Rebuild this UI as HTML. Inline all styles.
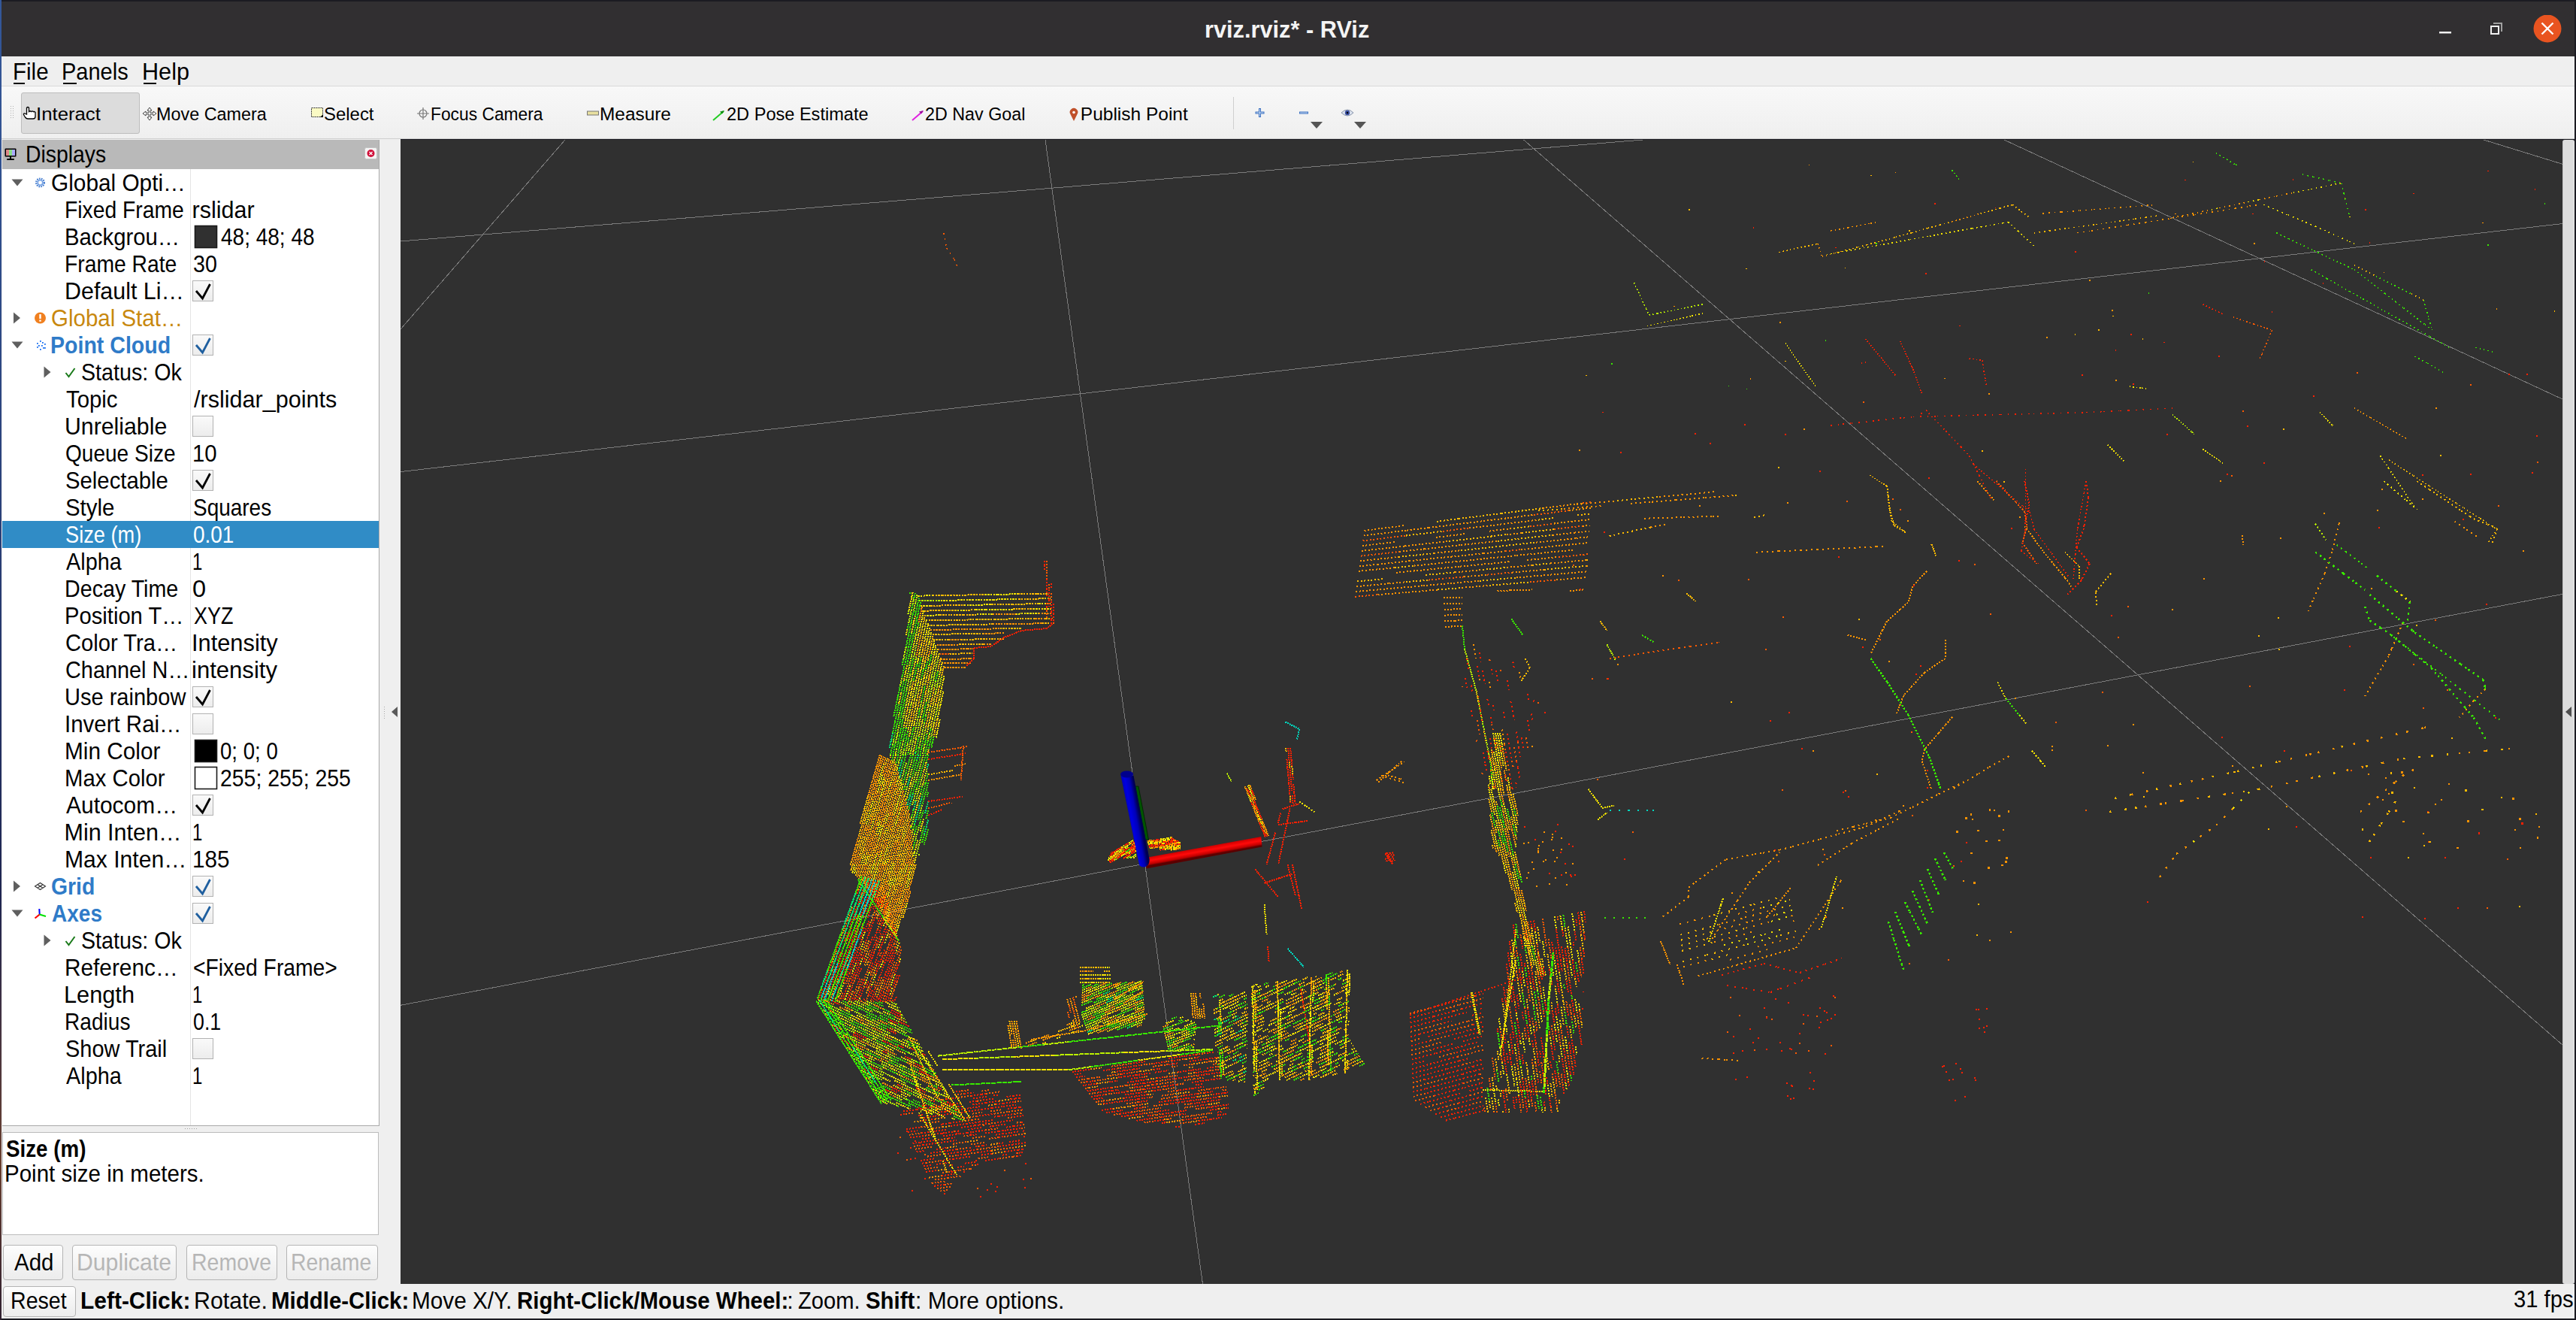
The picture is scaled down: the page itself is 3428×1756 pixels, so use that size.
<!DOCTYPE html><html><head><meta charset="utf-8"><style>html,body{margin:0;padding:0;width:3428px;height:1756px;overflow:hidden;background:#1b1b22}div,svg{position:absolute}span{position:absolute;white-space:nowrap;line-height:1;font-family:"Liberation Sans", sans-serif;transform-origin:0 0}</style></head><body><div style="left:0px;top:0px;width:3428px;height:1756px;background:#1b1b22"></div><div style="left:0px;top:0px;width:2px;height:1756px;background:linear-gradient(#34589a,#2a4078 40%,#1f2550 68%,#6a4030 88%,#302030)"></div><div style="left:2px;top:2px;width:3424px;height:73px;background:#312f31"></div><svg style="position:absolute;left:3230px;top:20px" width="190" height="40"><rect x="16" y="22" width="16" height="2.5" fill="#f0f0f0"/><rect x="85" y="15" width="10" height="10" fill="none" stroke="#f0f0f0" stroke-width="2"/><polyline points="88,11 99,11 99,22" fill="none" stroke="#a0a0a0" stroke-width="2"/><circle cx="160" cy="18" r="18.5" fill="#e95420"/><path d="M152.5 10.5 L167.5 25.5 M167.5 10.5 L152.5 25.5" stroke="#fff" stroke-width="2.4"/></svg><div style="left:2px;top:75px;width:3424px;height:39px;background:#efefef"></div><div style="left:2px;top:114px;width:3424px;height:1px;background:#d9d9d9"></div><div style="left:18px;top:110px;width:15px;height:2px;background:#000"></div><div style="left:84px;top:110px;width:18px;height:2px;background:#000"></div><div style="left:191px;top:110px;width:17px;height:2px;background:#000"></div><div style="left:2px;top:115px;width:3424px;height:69px;background:linear-gradient(#f8f8f8,#efefef)"></div><div style="left:2px;top:184px;width:3424px;height:1px;background:#cfcfcf"></div><svg style="position:absolute;left:14px;top:141px" width="6" height="20"><rect x="0" y="0" width="1" height="1" fill="#b0b0b0"/><rect x="0" y="3" width="1" height="1" fill="#b0b0b0"/><rect x="0" y="6" width="1" height="1" fill="#b0b0b0"/><rect x="0" y="9" width="1" height="1" fill="#b0b0b0"/><rect x="0" y="12" width="1" height="1" fill="#b0b0b0"/><rect x="0" y="15" width="1" height="1" fill="#b0b0b0"/><rect x="3" y="0" width="1" height="1" fill="#b0b0b0"/><rect x="3" y="3" width="1" height="1" fill="#b0b0b0"/><rect x="3" y="6" width="1" height="1" fill="#b0b0b0"/><rect x="3" y="9" width="1" height="1" fill="#b0b0b0"/><rect x="3" y="12" width="1" height="1" fill="#b0b0b0"/><rect x="3" y="15" width="1" height="1" fill="#b0b0b0"/></svg><div style="left:28px;top:123px;width:158px;height:55px;background:#dcdcdc;border:1px solid #bdbdbd;border-radius:3px;box-sizing:border-box"></div><svg style="position:absolute;left:0;top:115px" width="1900" height="69"><path d="M35.5 37 V28.5 Q37 26.5 38.5 28.5 V33.5 Q40 32 41.5 33.5 Q43 32 44.5 33.7 Q46 33 47 34.5 V40 Q47 43 44 43 H37 Q35 43 33.5 41 L31.5 37.5 Q31 35.5 33 36 Z" fill="#fff" stroke="#000" stroke-width="1.3"/><path d="M199 28 l3 4 h-2 v3 h4 v-2 l4 3 -4 3 v-2 h-4 v4 h2 l-3 4 -3 -4 h2 v-4 h-4 v2 l-4 -3 4 -3 v2 h4 v-3 h-2 z" fill="#fff" stroke="#444" stroke-width="1"/><rect x="414.5" y="28.5" width="15" height="12" fill="#fafac4" stroke="#333" stroke-width="1" stroke-dasharray="2 1"/><path d="M430 37 v4 h-4 z" fill="#000"/><circle cx="563" cy="36" r="5" fill="none" stroke="#777" stroke-width="1.2"/><path d="M563 28 v16 M555 36 h16" stroke="#777" stroke-width="1.2"/><rect x="781.5" y="33" width="15" height="5" fill="#e8e0a0" stroke="#777" stroke-width="1"/><path d="M949 45 L963 33" stroke="#22cc22" stroke-width="2"/><path d="M964 32 l-6 1.5 l3 3 z" fill="#118811"/><path d="M1214 45 L1228 33" stroke="#e020e0" stroke-width="2"/><path d="M1229 32 l-6 1.5 l3 3 z" fill="#991199"/><path d="M1429 46 L1424.5 37 A5.3 5.3 0 1 1 1433.5 37 Z" fill="#c0502a"/><circle cx="1429" cy="34.5" r="1.8" fill="#fff"/><rect x="1641" y="14" width="1" height="43" fill="#cfcfcf"/><path d="M1676.5 29 v12 M1670.5 35 h12" stroke="#3a6fc0" stroke-width="3"/><path d="M1676.5 30 v10 M1671.5 35 h10" stroke="#c8dcf4" stroke-width="1"/><path d="M1729 35 h12" stroke="#3a6fc0" stroke-width="3"/><path d="M1730 35 h10" stroke="#c8dcf4" stroke-width="1"/><path d="M1744 47 h16 l-8 9 z" fill="#555"/><path d="M1785 35 q8 -8 16 0 q-8 8 -16 0 z" fill="#dde4f0" stroke="#8894aa" stroke-width="1"/><circle cx="1793" cy="35" r="3.2" fill="#3a4fa0"/><circle cx="1793" cy="35" r="1.2" fill="#000"/><path d="M1802 47 h16 l-8 9 z" fill="#555"/></svg><div style="left:2px;top:185px;width:531px;height:1523px;background:#efefef"></div><div style="left:3px;top:186px;width:502px;height:39px;background:#b9b9b9"></div><svg style="position:absolute;left:5px;top:196px" width="20" height="20"><rect x="1.5" y="1.5" width="15" height="11" rx="1" fill="#000"/><rect x="3" y="3" width="4" height="8" fill="#d88"/><rect x="7" y="3" width="4" height="8" fill="#8d8"/><rect x="11" y="3" width="4" height="8" fill="#aaf"/><rect x="8" y="12" width="2" height="3" fill="#000"/><rect x="4" y="15" width="10" height="2" rx="1" fill="#000"/></svg><svg style="position:absolute;left:485px;top:196px" width="18" height="17"><rect x="0.5" y="0.5" width="16" height="15" rx="2" fill="#f4f4f4" stroke="#c4c4c4"/><circle cx="8.5" cy="8" r="5" fill="#d0103a"/><path d="M6.5 6 l4 4 M10.5 6 l-4 4" stroke="#fff" stroke-width="1.3"/></svg><div style="left:3px;top:225px;width:502px;height:1272px;background:#fff"></div><div style="left:504px;top:186px;width:1px;height:1312px;background:#a9a9a9"></div><div style="left:3px;top:1497px;width:502px;height:1px;background:#a9a9a9"></div><div style="left:253px;top:225px;width:1px;height:1272px;background:#e4e4e4"></div><div style="left:3px;top:693px;width:501px;height:36px;background:#308cc6"></div><svg style="position:absolute;left:0;top:0" width="540" height="1500"><defs><linearGradient id="cbg" x1="0" y1="0" x2="0" y2="1"><stop offset="0" stop-color="#fafafa"/><stop offset="1" stop-color="#ececec"/></linearGradient></defs><path d="M15.5 238.5 h15 l-7.5 9 z" fill="#5f5f5f"/><circle cx="53.5" cy="243" r="5.2" fill="none" stroke="#4a80d0" stroke-width="2.6" stroke-dasharray="1.6 1.2"/><circle cx="53.5" cy="243" r="3.2" fill="none" stroke="#7aa6e6" stroke-width="1.5"/><rect x="259.5" y="300.5" width="29" height="29" fill="#303030" stroke="#1a1a1a" stroke-width="1.6"/><rect x="256.5" y="373.5" width="27" height="27" fill="url(#cbg)" stroke="#b2b2b2" stroke-width="1"/><path d="M261 387 L269.5 397 L279.5 378" fill="none" stroke="#000" stroke-width="2.8"/><path d="M18 415.5 v15 l9 -7.5 z" fill="#5f5f5f"/><circle cx="53.5" cy="423" r="7.5" fill="#f08020"/><rect x="52.3" y="418" width="2.4" height="6" fill="#fff"/><rect x="52.3" y="425.5" width="2.4" height="2.2" fill="#fff"/><path d="M15.5 454.5 h15 l-7.5 9 z" fill="#5f5f5f"/><rect x="53" y="453" width="1.8" height="1.8" fill="#1a6ff0"/><rect x="49" y="456" width="1.8" height="1.8" fill="#1a6ff0"/><rect x="56" y="455" width="1.8" height="1.8" fill="#1a6ff0"/><rect x="59" y="457" width="1.8" height="1.8" fill="#1a6ff0"/><rect x="51" y="459" width="1.8" height="1.8" fill="#1a6ff0"/><rect x="55" y="459" width="1.8" height="1.8" fill="#1a6ff0"/><rect x="49" y="461" width="1.8" height="1.8" fill="#1a6ff0"/><rect x="57" y="462" width="1.8" height="1.8" fill="#1a6ff0"/><rect x="53" y="464" width="1.8" height="1.8" fill="#1a6ff0"/><rect x="59" y="462" width="1.8" height="1.8" fill="#1a6ff0"/><rect x="256.5" y="445.5" width="27" height="27" fill="url(#cbg)" stroke="#b2b2b2" stroke-width="1"/><path d="M261 459 L269.5 469 L279.5 450" fill="none" stroke="#1f5f9f" stroke-width="2.8"/><path d="M58.5 487.5 v15 l9 -7.5 z" fill="#5f5f5f"/><path d="M87.5 496 l4 5 l8 -11" fill="none" stroke="#1a7a1a" stroke-width="2"/><rect x="256.5" y="553.5" width="27" height="27" fill="url(#cbg)" stroke="#b2b2b2" stroke-width="1"/><rect x="256.5" y="625.5" width="27" height="27" fill="url(#cbg)" stroke="#b2b2b2" stroke-width="1"/><path d="M261 639 L269.5 649 L279.5 630" fill="none" stroke="#000" stroke-width="2.8"/><rect x="256.5" y="913.5" width="27" height="27" fill="url(#cbg)" stroke="#b2b2b2" stroke-width="1"/><path d="M261 927 L269.5 937 L279.5 918" fill="none" stroke="#000" stroke-width="2.8"/><rect x="256.5" y="949.5" width="27" height="27" fill="url(#cbg)" stroke="#b2b2b2" stroke-width="1"/><rect x="259.5" y="984.5" width="29" height="29" fill="#000000" stroke="#1a1a1a" stroke-width="1.6"/><rect x="259.5" y="1020.5" width="29" height="29" fill="#ffffff" stroke="#1a1a1a" stroke-width="1.6"/><rect x="256.5" y="1057.5" width="27" height="27" fill="url(#cbg)" stroke="#b2b2b2" stroke-width="1"/><path d="M261 1071 L269.5 1081 L279.5 1062" fill="none" stroke="#000" stroke-width="2.8"/><path d="M18 1171.5 v15 l9 -7.5 z" fill="#5f5f5f"/><path d="M46.5 1179 l7 -4.5 l7 4.5 l-7 4.5 z M50 1176.75 l7 4.5 M50 1181.25 l7 -4.5" fill="none" stroke="#333" stroke-width="1.1"/><rect x="256.5" y="1165.5" width="27" height="27" fill="url(#cbg)" stroke="#b2b2b2" stroke-width="1"/><path d="M261 1179 L269.5 1189 L279.5 1170" fill="none" stroke="#1f5f9f" stroke-width="2.8"/><path d="M15.5 1210.5 h15 l-7.5 9 z" fill="#5f5f5f"/><path d="M52.7 1216.5 L52.3 1209" stroke="#0000ff" stroke-width="2"/><path d="M52.7 1216.5 L46.5 1221.5" stroke="#ff0000" stroke-width="2.2"/><path d="M52.7 1216.5 L61 1219" stroke="#00e000" stroke-width="2.2"/><rect x="256.5" y="1201.5" width="27" height="27" fill="url(#cbg)" stroke="#b2b2b2" stroke-width="1"/><path d="M261 1215 L269.5 1225 L279.5 1206" fill="none" stroke="#1f5f9f" stroke-width="2.8"/><path d="M58.5 1243.5 v15 l9 -7.5 z" fill="#5f5f5f"/><path d="M87.5 1252 l4 5 l8 -11" fill="none" stroke="#1a7a1a" stroke-width="2"/><rect x="256.5" y="1381.5" width="27" height="27" fill="url(#cbg)" stroke="#b2b2b2" stroke-width="1"/></svg><svg style="position:absolute;left:246px;top:1500px" width="20" height="4"><rect x="0" y="1" width="1" height="1" fill="#a0a0a0"/><rect x="3" y="1" width="1" height="1" fill="#a0a0a0"/><rect x="6" y="1" width="1" height="1" fill="#a0a0a0"/><rect x="9" y="1" width="1" height="1" fill="#a0a0a0"/><rect x="12" y="1" width="1" height="1" fill="#a0a0a0"/><rect x="15" y="1" width="1" height="1" fill="#a0a0a0"/></svg><div style="left:3px;top:1506px;width:501px;height:137px;background:#fff;border:1px solid #bcbcbc;box-sizing:border-box"></div><div style="left:4px;top:1656px;width:80px;height:47px;background:linear-gradient(#fdfdfd,#ececec);border:1px solid #b4b4b4;border-radius:4px;box-sizing:border-box"></div><div style="left:96px;top:1656px;width:139px;height:47px;background:linear-gradient(#fdfdfd,#ececec);border:1px solid #b4b4b4;border-radius:4px;box-sizing:border-box"></div><div style="left:248px;top:1656px;width:121px;height:47px;background:linear-gradient(#fdfdfd,#ececec);border:1px solid #b4b4b4;border-radius:4px;box-sizing:border-box"></div><div style="left:381px;top:1656px;width:122px;height:47px;background:linear-gradient(#fdfdfd,#ececec);border:1px solid #b4b4b4;border-radius:4px;box-sizing:border-box"></div><svg style="position:absolute;left:505px;top:935px" width="28" height="25"><rect x="6" y="5" width="1" height="1" fill="#a8a8a8"/><rect x="6" y="8" width="1" height="1" fill="#a8a8a8"/><rect x="6" y="11" width="1" height="1" fill="#a8a8a8"/><rect x="6" y="14" width="1" height="1" fill="#a8a8a8"/><rect x="6" y="17" width="1" height="1" fill="#a8a8a8"/><rect x="6" y="20" width="1" height="1" fill="#a8a8a8"/><path d="M24 5 v14 l-8 -7 z" fill="#5a5a5a"/></svg><svg style="position:absolute;left:533px;top:186px" width="2877" height="1522" viewBox="533 186 2877 1522"><rect x="533" y="186" width="2877" height="1522" fill="#303030"/><g stroke="#7c7c7c" stroke-width="1" fill="none" shape-rendering="crispEdges"><path d="M533 321 L2186 186"/><path d="M533 627.6 L3410 297.5"/><path d="M533 1337.3 L3410 790.4"/><path d="M533 438 L752 186"/><path d="M1391 186 L1600.5 1708"/><path d="M2027.6 186 L3410 1390"/><path d="M2667 186 L3410 531"/><path d="M3305 186 L3410 218.3"/></g><g fill="none" shape-rendering="crispEdges"><path d="M1221.2 792.7L1240.9 792.3M1310.6 791.1L1327.3 790.8M1327.3 790.8L1354.6 790.3M1251.6 798.9L1263.4 798.7M1263.4 798.7L1293.9 798.1M1293.9 798.1L1321.4 797.6M1321.4 797.6L1355.2 797M1224.8 806L1238.3 805.8M1282.9 805L1319.2 804.3M1382.2 803.2L1398 802.9M1273.9 811.8L1284.6 811.6M1298.1 811.4L1312 811.2M1312 811.2L1348.1 810.5M1374.6 810L1399 809.6M1229.7 818.8L1250.5 818.4M1299.9 817.5L1320.9 817.2M1351.6 816.6L1381.9 816.1" stroke="#f4e400" stroke-width="2" stroke-dasharray="2.5 1.2"/><path d="M1240.9 792.3L1253.1 792.1M1253.1 792.1L1264.8 791.9M1264.8 791.9L1287.8 791.5M1287.8 791.5L1310.6 791.1M1354.6 790.3L1366 790.1M1366 790.1L1380.3 789.8M1380.3 789.8L1397 789.5M1355.2 797L1382.5 796.5M1382.5 796.5L1398 796.2M1238.3 805.8L1252.9 805.5M1252.9 805.5L1282.9 805M1319.2 804.3L1347 803.8M1347 803.8L1382.2 803.2M1226 812.7L1255.4 812.2M1255.4 812.2L1273.9 811.8M1284.6 811.6L1298.1 811.4M1348.1 810.5L1374.6 810M1250.5 818.4L1265 818.2M1265 818.2L1282 817.9M1282 817.9L1299.9 817.5M1232 825.5L1253.8 825.1M1253.8 825.1L1282.8 824.6M1282.8 824.6L1299.1 824.3M1299.1 824.3L1310.6 824.1M1310.6 824.1L1323.7 823.8M1323.7 823.8L1359.9 823.2M1359.9 823.2L1377.5 822.9M1391.1 822.6L1401 822.5M1234.5 832L1247.6 831.8M1247.6 831.8L1282.4 831.1M1282.4 831.1L1320.9 830.4M1386.6 829.3L1402 829M1330.6 836.3L1359 835.8M1240.6 844L1266.1 843.5M1266.1 843.5L1277 843.3M1277 843.3L1307.7 842.8M1241.8 851.5L1262.7 851.1M1278.6 850.8L1315.6 850.2M1315.6 850.2L1336 849.8M1276.5 857.5L1309 856.9M1263.5 869.8L1294 869.2" stroke="#ffbc00" stroke-width="2" stroke-dasharray="2.5 1.2"/><path d="M1222.4 799.4L1251.6 798.9" stroke="#bcf000" stroke-width="2" stroke-dasharray="2.5 1.2"/><path d="M1320.9 817.2L1351.6 816.6M1381.9 816.1L1400 815.7M1377.5 822.9L1391.1 822.6M1320.9 830.4L1347.2 830M1347.2 830L1386.6 829.3M1238 838L1271.2 837.4M1271.2 837.4L1291 837M1291 837L1330.6 836.3M1307.7 842.8L1336 842.3M1262.7 851.1L1278.6 850.8M1246.7 858L1276.5 857.5M1309 856.9L1319 856.7M1248 864L1287.1 863.3M1287.1 863.3L1296 863.1M1251.5 877L1290.9 876.3M1290.9 876.3L1295 876.2M1252.7 882.4L1291.8 881.7M1256.4 888.5L1285 888" stroke="#ff9400" stroke-width="2" stroke-dasharray="2.5 1.2"/><path d="M1249.7 870L1263.5 869.8M1291.8 881.7L1292 881.7" stroke="#ff5a00" stroke-width="2" stroke-dasharray="2.5 1.2"/><path d="M1403 828L1393 836M1393 836L1365.5 838.4M1365.5 838.4L1359 839M1359 839L1336 848M1336 848L1319 860M1319 860L1296 862M1296 862L1296 876M1296 876L1285 887M1717.1 994.7L1718.2 1007.2M1718.2 1007.2L1718.6 1011.5M1718.6 1011.5L1719.2 1019M1720.2 1029.9L1720.8 1037.4M1721.3 1042.6L1722.3 1053.9M1722.3 1053.9L1722.7 1058.2M1722.7 1058.2L1723.3 1065.2M1723.3 1065.2L1723.6 1069.2M1714.1 994.7L1715.2 1007M1715.2 1007L1715.7 1013.5M1716.4 1021L1717.4 1032.7M1717.4 1032.7L1718.5 1045.2M1718.5 1045.2L1719.1 1051.6M1719.6 1057.7L1720.6 1069.2M1720.6 1069.2L1720.6 1069.2M1712.4 1009.7L1713.3 1020.5M1713.3 1020.5L1714.2 1030.8M1714.2 1030.8L1715.2 1041.7M1715.2 1041.7L1716.3 1054.9M1716.3 1054.9L1716.7 1059.4M1717.3 1065.9L1717.6 1069.2M1706.5 1076.2L1718.3 1072.5M1718.3 1072.5L1725.4 1070.3M1725.4 1070.3L1729.1 1069.2M1704.2 1081.6L1700.2 1096.4M1697.1 1107.6L1695.5 1113.8M1695.5 1113.8L1692.4 1124.9M1692.4 1124.9L1688.2 1140.2M1688.2 1140.2L1685.6 1149.9M1716.6 1075.4L1713.2 1091.9M1713.2 1091.9L1711.3 1100.9M1711.3 1100.9L1708.7 1113.4M1708.7 1113.4L1706.7 1123.2M1706.7 1123.2L1703.6 1137.9M1703.6 1137.9L1701.1 1149.9M1701.1 1097.1L1710.5 1095.9M1710.5 1095.9L1723.8 1094.1M1723.8 1094.1L1731.7 1093.1M1731.7 1093.1L1741.4 1091.8M1844 1134.4L1850.4 1145.2M1850.4 1145.2L1853.3 1149.9M1186.2 1343.7L1198.8 1349.6M1184.7 1346.6L1199 1353.2M1196.6 1359.2L1208.7 1364.8M1208.7 1364.8L1210.3 1365.6M1181.9 1355.9L1195.2 1362.1M1105.2 1330.7L1117.1 1336.2M1180.1 1369.1L1192.4 1374.9M1211.4 1394.3L1218.6 1397.7M1224.3 1400.3L1232.2 1404M1195.3 1390.4L1202.5 1393.7M1174.6 1384.2L1184.7 1388.9M1137.3 1373.9L1153.5 1381.4M1204.4 1405.2L1212.7 1409.1M1134.9 1376.3L1148 1382.4M1217.5 1414.8L1227.4 1419.4M1110.7 1368.5L1119 1372.4M1175.2 1398.6L1181 1401.3M1246 1431.7L1248.6 1432.8M1223.1 1424.5L1238.4 1431.6M1120.2 1383.6L1133.1 1389.6M1248 1446.7L1253.8 1449.4M1147.3 1403.3L1156.4 1407.5M1155.7 1417.8L1169.6 1424.2M1218.9 1447.3L1232.4 1453.5M1260.6 1466.7L1268.4 1470.4M1150.1 1422.2L1160.2 1427M1193.9 1442.7L1200.6 1445.8M1187 1446.5L1199 1452.1M1186.4 1449.8L1193.3 1453M1178.1 1449.4L1184.4 1452.4M1221.7 1473.3L1226.8 1475.6M1730 1310L1733.8 1332.7M1733.8 1332.7L1735 1340M1735 1340L1740.7 1374.4M1740.7 1374.4L1744.7 1398.1M1744.7 1398.1L1745 1400M1670.1 1156.2L1679.9 1168M1679.9 1168L1691.7 1182.2M1691.7 1182.2L1701.1 1193.5M1713.5 1150L1718 1167.9M1718 1167.9L1721.1 1180.3M1721.1 1180.3L1724.1 1192.3M1682.5 1174.8L1689.1 1172.6M1689.1 1172.6L1702.4 1168.2M1702.4 1168.2L1711.9 1165M1711.9 1165L1719.8 1162.4M1719.8 1150L1721.9 1160.3M1721.9 1160.3L1725 1174.8M1725 1174.8L1726 1179.9M1726 1179.9L1728.4 1190.9M1728.4 1190.9L1730.6 1201.4M1730.6 1201.4L1732.2 1209M1687.1 1258.7L1688.7 1280.4M1852.8 1133.9L1855.9 1139.2M1849.3 1133.9L1855.9 1145.2M1845.9 1133.9L1852.6 1145.5M1852.6 1145.5L1853 1146.3M1843.5 1135.7L1849.6 1146.3M1843.5 1141.7L1846.1 1146.3" stroke="#ff2000" stroke-width="2" stroke-dasharray="2 1"/><path d="M1404.5 829.6L1404.5 830.1M1401.5 802.6L1401.5 815.5M1401.5 815.5L1401.5 827.8M1398.5 775.6L1398.5 781.6M1398.5 799.5L1398.5 813.6M1398.5 813.6L1398.5 823.6M1398.5 823.6L1398.5 831.6M1395.5 784.3L1395.5 797.7M1395.5 797.7L1395.5 807.2M1392.5 769.9L1392.5 783.2M1392.5 783.2L1392.5 793.3M1392.5 801.5L1392.5 806.7M1392.5 806.7L1392.5 811.9M1389.5 746.2L1389.5 752.3M1389.5 752.3L1389.5 759.4M1268.3 1453L1279.5 1451.4M1283.1 1454.9L1295.6 1453.2M1241.7 1464.8L1249.8 1463.7M1259.3 1462.3L1275.2 1460.1M1291.8 1457.8L1306.2 1455.7M1306.2 1455.7L1312 1454.9M1227.1 1470.9L1235.4 1469.7M1252.2 1467.4L1264.4 1465.6M1294.8 1461.4L1312.7 1458.9M1322.3 1457.5L1330 1456.4M1202.2 1478.4L1220.4 1475.9M1220.4 1475.9L1236.8 1473.6M1236.8 1473.6L1255.2 1471M1255.2 1471L1269 1469M1269 1469L1279.7 1467.5M1290.2 1466.1L1300.1 1464.7M1307.8 1463.6L1321.9 1461.6M1339.5 1459.1L1347.9 1457.9M1347.9 1457.9L1357.7 1456.6M1357.7 1456.6L1357.9 1456.5M1198.3 1483L1205.1 1482.1M1231.4 1478.4L1240 1477.2M1274.5 1472.3L1280.3 1471.5M1294.5 1469.5L1312 1467M1312 1467L1328.8 1464.7M1344.9 1462.4L1351.2 1461.5M1351.2 1461.5L1356.2 1460.8M1356.2 1460.8L1358.5 1460.5M1221.8 1483.8L1229.2 1482.7M1247.8 1480.1L1258 1478.7M1258 1478.7L1271.4 1476.8M1271.4 1476.8L1290.5 1474.1M1290.5 1474.1L1305.2 1472M1325 1469.2L1335.3 1467.8M1335.3 1467.8L1350.1 1465.7M1229.2 1486.8L1244.3 1484.6M1244.3 1484.6L1256.2 1482.9M1256.2 1482.9L1270.8 1480.9M1270.8 1480.9L1285.3 1478.9M1285.3 1478.9L1292.8 1477.8M1292.8 1477.8L1305.9 1476M1305.9 1476L1320 1474M1320 1474L1335.1 1471.9M1335.1 1471.9L1351.6 1469.5M1226.9 1491.1L1244 1488.7M1341.3 1475L1351.3 1473.6M1351.3 1473.6L1357.2 1472.8M1357.2 1472.8L1360.1 1472.4M1299.5 1484.9L1306.6 1483.9M1306.6 1483.9L1323.2 1481.6M1359.7 1476.5L1360.7 1476.4M1206.4 1502.1L1225.5 1499.4M1253.9 1495.4L1264.2 1493.9M1264.2 1493.9L1280 1491.7M1322.8 1485.7L1329.2 1484.8M1329.2 1484.8L1341.3 1483.1M1341.3 1483.1L1349.5 1482M1208 1505.9L1221.2 1504M1265.3 1497.8L1273.1 1496.7M1273.1 1496.7L1285.6 1495M1285.6 1495L1303.4 1492.5M1303.4 1492.5L1311.1 1491.4M1311.1 1491.4L1323.1 1489.7M1348.7 1486.1L1361.8 1484.3M1226.2 1507.4L1234.5 1506.2M1234.5 1506.2L1245 1504.7M1245 1504.7L1259.5 1502.7M1279.1 1499.9L1297 1497.4M1297 1497.4L1303.2 1496.5M1303.2 1496.5L1315.4 1494.8M1327.2 1493.2L1342.9 1491M1342.9 1491L1348 1490.3M1211.3 1513.5L1231 1510.7M1247.2 1508.5L1258 1506.9M1258 1506.9L1277 1504.3M1288.5 1502.7L1305.7 1500.2M1316.7 1498.7L1327.7 1497.1M1327.7 1497.1L1339.5 1495.5M1358.9 1492.8L1362.9 1492.2M1227.2 1515.3L1239.2 1513.6M1254.7 1511.4L1262.7 1510.3M1262.7 1510.3L1277.4 1508.2M1277.4 1508.2L1287.2 1506.9M1287.2 1506.9L1294 1505.9M1294 1505.9L1310.7 1503.6M1339 1499.6L1349.4 1498.1M1349.4 1498.1L1361.8 1496.4M1214.5 1521.1L1225.1 1519.6M1225.1 1519.6L1244.5 1516.9M1261.8 1514.5L1270.9 1513.2M1290.5 1510.4L1299.5 1509.2M1310.8 1507.6L1329.1 1505M1329.1 1505L1340.2 1503.5M1340.2 1503.5L1358.8 1500.9M1222.7 1524L1227.9 1523.3M1227.9 1523.3L1239.9 1521.6M1239.9 1521.6L1248.2 1520.4M1248.2 1520.4L1256 1519.3M1256 1519.3L1273.2 1516.9M1324.9 1509.7L1334 1508.4M1334 1508.4L1345.4 1506.8M1345.4 1506.8L1354.8 1505.4M1361 1504.6L1364.5 1504.1M1328.9 1513.1L1336.4 1512.1M1344.3 1511L1350.7 1510.1M1219.6 1532.5L1230.4 1531M1245.7 1528.9L1260.3 1526.8M1362.2 1512.5L1365.6 1512M1238.3 1533.9L1255.8 1531.5M1255.8 1531.5L1263 1530.5M1263 1530.5L1273 1529.1M1298.4 1525.5L1307.9 1524.2M1307.9 1524.2L1313 1523.4M1328.7 1521.2L1337 1520.1M1343.4 1519.2L1357 1517.3M1257.1 1535.3L1274.1 1532.9M1274.1 1532.9L1291.1 1530.6M1291.1 1530.6L1300 1529.3M1329.8 1525.1L1346.8 1522.7M1346.8 1522.7L1365.6 1520.1M1225.1 1543.9L1243.9 1541.2M1274.3 1537L1284 1535.6M1301 1533.2L1319.2 1530.7M1365.5 1524.1L1365.8 1524.1M1226.9 1547.7L1232.1 1546.9M1251.2 1544.2L1267.8 1541.9M1267.8 1541.9L1277.3 1540.6M1277.3 1540.6L1291.8 1538.5M1305.8 1536.6L1313.7 1535.5M1313.7 1535.5L1320.1 1534.6M1337.4 1532.1L1354.8 1529.7M1354.8 1529.7L1360 1529M1360 1529L1363.4 1528.5M1228.7 1551.4L1239.2 1550M1245.7 1549.1L1262.6 1546.7M1333.7 1536.7L1342.3 1535.5M1351.7 1534.2L1361 1532.9M1262.6 1550.7L1268 1550M1283.8 1547.7L1298 1545.8M1310.8 1543.9L1329.9 1541.3M1353.2 1538L1358.5 1537.2M1232.3 1559L1247.8 1556.8M1274.1 1553.1L1282.7 1551.9M1300.3 1549.5L1303.6 1549M1264.7 1558.5L1270.6 1557.7M1253.1 1564.2L1270.1 1561.8M1243.2 1577.7L1256.6 1575.8M1255.7 1588.1L1259.5 1587.5M2694.3 640L2700.6 671.4M2700.6 671.4L2694.3 696.6" stroke="#ff2000" stroke-width="2" stroke-dasharray="2 2"/><path d="M1401.5 827.8L1401.5 830.8M1398.5 789.4L1398.5 799.5M1395.5 776.7L1395.5 784.3M1395.5 832.3L1395.5 832.3M1392.5 746.2L1392.5 760.9M1392.5 760.9L1392.5 769.9M1392.5 811.9L1392.5 822M1279.5 1451.4L1289.5 1450M1270.4 1456.7L1283.1 1454.9M1306.5 1451.6L1318.2 1450M1249.8 1463.7L1259.3 1462.3M1275.2 1460.1L1291.8 1457.8M1312 1454.9L1331.3 1452.2M1300.1 1464.7L1307.8 1463.6M1205.1 1482.1L1216.2 1480.5M1245.5 1476.4L1262.5 1474M1350.1 1465.7L1359 1464.5M1294 1481.7L1306.7 1479.9M1318.2 1478.3L1333.3 1476.2M1232.3 1494.4L1251.9 1491.6M1278 1488L1286.4 1486.8M1286.4 1486.8L1299.5 1484.9M1323.2 1481.6L1342.4 1478.9M1342.4 1478.9L1359.7 1476.5M1225.5 1499.4L1237.9 1497.6M1280 1491.7L1292.8 1489.9M1292.8 1489.9L1304.7 1488.3M1349.5 1482L1361.2 1480.3M1237.3 1501.8L1253.9 1499.4M1340.8 1487.2L1348.7 1486.1M1209.6 1509.7L1226.2 1507.4M1315.4 1494.8L1327.2 1493.2M1231 1510.7L1247.2 1508.5M1352.8 1493.6L1358.9 1492.8M1310.7 1503.6L1327.7 1501.2M1244.5 1516.9L1261.8 1514.5M1282.5 1511.6L1290.5 1510.4M1358.8 1500.9L1364 1500.1M1216.1 1524.9L1222.7 1524M1293.7 1514L1304.8 1512.5M1304.8 1512.5L1311.2 1511.6M1217.8 1528.7L1230.3 1527M1230.3 1527L1240.8 1525.5M1268.1 1521.7L1287 1519M1315.6 1515L1328.9 1513.1M1336.4 1512.1L1344.3 1511M1350.7 1510.1L1362.7 1508.4M1292.2 1522.3L1311.9 1519.6M1273 1529.1L1288.6 1526.9M1233.8 1538.6L1251.9 1536.1M1300 1529.3L1315.5 1527.1M1315.5 1527.1L1329.8 1525.1M1262.7 1538.6L1274.3 1537M1284 1535.6L1301 1533.2M1331.4 1528.9L1351.2 1526.2M1232.1 1546.9L1251.2 1544.2M1301.6 1541.2L1316.5 1539.1M1230.5 1555.2L1249.3 1552.6M1329.9 1541.3L1347.8 1538.7M1347.8 1538.7L1353.2 1538M1292.8 1550.5L1300.3 1549.5M1253.8 1560L1264.7 1558.5M1270.6 1557.7L1277.5 1556.7M1277.5 1556.7L1291.1 1554.8M1291.1 1554.8L1295.3 1554.2M1244.2 1569.5L1260.6 1567.2M1260.6 1567.2L1278.6 1564.6M1239.6 1574.2L1258.2 1571.5M1256.6 1575.8L1267.4 1574.3M1247.4 1581.1L1264.8 1578.7M1251.5 1584.6L1262.1 1583.1M2656.6 640L2672.8 657.6M2672.8 657.6L2682.6 668.1M2682.6 668.1L2693.2 679.7M2693.2 679.7L2694.3 680.9M2694.3 680.9L2697.5 699.7M2697.5 699.7L2691.2 721.8M2691.2 721.8L2705 742.4M2705 742.4L2710.1 750.1" stroke="#ff5a00" stroke-width="2" stroke-dasharray="2 2"/><path d="M1250.7 957L1245.8 979.8M1255.3 919.5L1251.3 938.4M1251.3 938.4L1247.4 957.1M1256.5 898.9L1253 915M1253 915L1251.3 923.3M1251.3 923.3L1249.6 931.2M1249.6 931.2L1247.6 940.8M1243.3 960.8L1241.4 970M1235.7 996.6L1234.1 1004M1245 937.3L1241 956.3M1241 956.3L1238.4 968.6M1236.9 975.8L1235 984.7M1253.9 880.4L1251.7 890.8M1251.7 890.8L1249.8 899.5M1244.7 923.3L1242.5 933.7M1242.5 933.7L1239.9 946.2M1239.9 946.2L1236.7 960.9M1236.7 960.9L1233.5 976.1M1249.7 869L1248 877.4M1235.2 937.4L1233.7 944.5M1247.7 863.4L1245.4 874M1245.4 874L1241.9 890.4M1235.7 919.7L1232.6 934.2M1227.8 956.7L1222.9 979.9M1245.6 857.7L1243.5 867.5M1243.5 867.5L1240.2 883.1M1231.7 923.2L1228.5 938.1M1228.5 938.1L1225.3 953.1M1225.3 953.1L1223.5 961.5M1219 983L1214.5 1004M1243.5 852L1239.5 871.2M1236.7 883.9L1233.2 900.8M1233.2 900.8L1230.8 911.7M1236.1 871.8L1234.3 880M1231.9 891.4L1229.6 902.1M1229.6 902.1L1226.2 918.4M1221.1 942.4L1215.9 966.7M1239.4 840.7L1236.7 853.6M1236.7 853.6L1234.3 864.6M1231.1 879.8L1229 889.7M1226.1 903L1221.5 924.6M1220.2 931.1L1217.1 945.8M1214.3 958.9L1209.6 980.7M1237.3 835L1233.5 852.9M1227.9 879.2L1225.5 890.8M1225.5 890.8L1221.7 908.5M1217.4 928.7L1216.1 934.8M1211.1 958.5L1208 973.2M1235.3 829.4L1230.4 852.4M1222.5 889.4L1220 901M1220 901L1217.9 911M1217.9 911L1212.9 934.6M1210.8 944.6L1205.8 968.1M1233.2 823.7L1228 848.1M1226 857.4L1224.6 863.9M1224.6 863.9L1221.9 876.7M1221.9 876.7L1220.7 882.6M1213.6 916L1209.1 937.1M1206 951.8L1204 961.2M1204 961.2L1202.6 967.7M1228.8 829L1226.5 839.7M1218 879.9L1212.9 903.6M1210.7 914.1L1205.8 937.2M1191.8 1003.2L1191.6 1004M1229.1 812.4L1223.9 836.6M1222.3 844.2L1219.3 858.4M1219.1 843.8L1214.2 866.9M1207 885.2L1202.5 906.4M1199.5 920.8L1196 936.9M1217.8 819.4L1212.9 842.4M1207.4 837.2L1205.7 845.1M1214.6 788L1209.4 812.4M1470.3 1287.3L1477.2 1287.3M1437 1297.3L1454.3 1297.3M1454.3 1297.3L1467.6 1297.3M1467.6 1297.3L1477.5 1297.3M1461.6 1302.3L1477.7 1302.3M1437 1307.3L1452.5 1307.3M1452.5 1307.3L1464 1307.3M1451.5 1309.7L1452.4 1309.3M1439.7 1320.9L1455.9 1314.4M1448 1320.8L1455.9 1317.6M1455.9 1317.6L1465 1314M1479.3 1314.7L1484.4 1312.6M1484.4 1312.6L1490.8 1310M1439.4 1334L1454.4 1327.9M1510.8 1308.4L1515.8 1306.4M1471.8 1327.4L1485.2 1322M1501 1315.6L1515.4 1309.8M1515.4 1309.8L1520.2 1307.8M1445.4 1341.3L1459 1335.8M1480.7 1327L1485.3 1325.1M1502 1318.4L1516.8 1312.4M1482.8 1329.4L1490 1326.5M1513.9 1316.8L1520.7 1314.1M1452.5 1344.9L1464.3 1340.1M1473.1 1336.6L1489.5 1329.9M1476.1 1338.6L1492.4 1332M1505.7 1326.6L1517.5 1321.9M1441.1 1356L1449.2 1352.7M1479.6 1343.6L1493.1 1338.2M1493.1 1338.2L1501.8 1334.7M1501.8 1334.7L1511.8 1330.6M1465.1 1352.7L1477.4 1347.8M1477.4 1347.8L1483.6 1345.3M1502.7 1337.5L1510.7 1334.3M1518.5 1331.2L1522 1329.7M1519.7 1333.9L1522.3 1332.9M1458.4 1361.9L1463.8 1359.7M1463.8 1359.7L1478.4 1353.8M1478.4 1353.8L1486 1350.8M1507.9 1341.9L1513.9 1339.5M1521.6 1336.4L1522.5 1336M1446 1370.2L1462.5 1363.5M1467.6 1361.4L1475.4 1358.3M1487.9 1353.2L1496.1 1349.9M1510.4 1344.1L1522.8 1339.1M1454.9 1369.8L1460 1367.7M1474.6 1361.9L1487.1 1356.8M1487.1 1356.8L1502.3 1350.7M1447.9 1375.8L1452.8 1373.9M1452.8 1373.9L1464.7 1369.1M1488.4 1359.5L1496.9 1356.1M1517.6 1347.7L1523.3 1345.4M1490.1 1362L1501.7 1357.4M1501.7 1357.4L1507.5 1355M1507.5 1355L1517 1351.2M1473.5 1372L1488.8 1365.8M1511.3 1356.7L1521.5 1352.6M1511.4 1359.9L1522.7 1355.3M1522.7 1355.3L1523.4 1355.1" stroke="#f4e400" stroke-width="2" stroke-dasharray="2 0.8"/><path d="M1245.8 979.8L1245.5 981.5M1247.6 940.8L1243.3 960.8M1241.4 970L1239.1 980.5M1253 899.9L1250.2 913.1M1249.8 899.5L1244.7 923.3M1230.6 990L1227.6 1004M1245.2 905.9L1243.3 914.6M1238.2 938.8L1236.4 947.2M1231.8 968.6L1228.3 985.3M1248 877.4L1243.4 898.8M1243.4 898.8L1239.7 916.3M1239.7 916.3L1238.4 922.2M1238.4 922.2L1235.2 937.4M1233.7 944.5L1232.1 951.8M1230.1 961.5L1226.9 976.5M1226.9 976.5L1222.9 995.1M1241.9 890.4L1239.6 901.2M1239.6 901.2L1235.7 919.7M1223.5 961.5L1219 983M1226.3 933.1L1224.1 943.6M1222.1 953L1217.3 975.3M1217.3 975.3L1212.5 998.2M1212.5 998.2L1211.2 1004M1212.3 983.7L1208.8 1000.2M1208 988.6L1204.7 1004M1221.7 908.5L1220.2 915.6M1220.2 915.6L1217.4 928.7M1202.9 996.9L1201.6 1003.2M1201.6 1003.2L1201.4 1004M1212.9 934.6L1210.8 944.6M1202.2 984.8L1198.1 1004M1219.3 873.6L1218 879.9M1212.9 903.6L1210.7 914.1M1205.8 937.2L1201.6 956.8M1193.3 996.1L1191.8 1003.2M1219.3 858.4L1215.6 875.8M1211 897.4L1206.4 918.9M1196.7 964.5L1193.9 977.7M1193.9 977.7L1191.7 987.9M1221.1 834.4L1219.1 843.8M1214.2 866.9L1211.2 881.2M1211.2 881.2L1206.2 904.6M1197.1 947.5L1195.8 953.6M1189.4 983.5L1187.8 991.3M1200.2 901.9L1198.1 911.8M1220.4 791.4L1215.9 812.9M1205.7 860.7L1204.3 867.1M1204.3 867.1L1202.2 877.3M1216.1 796.6L1214.4 804.2M1213 810.8L1208.9 830.3M1209.4 812.4L1208.2 817.9M1439.8 1317.7L1445.6 1315.3M1455.9 1314.4L1464.4 1311M1465 1314L1472.6 1310.9M1452.9 1322.1L1467.1 1316.3M1455.8 1324.1L1462.8 1321.3M1485.8 1315.3L1501.1 1309.1M1465 1326.9L1473.5 1323.5M1487.1 1317.9L1496.4 1314.2M1496.4 1314.2L1510.8 1308.4M1515.8 1306.4L1519 1305.1M1459 1335.8L1474.4 1329.5M1516.8 1312.4L1520.5 1310.9M1445.5 1344.5L1451.7 1342M1451.7 1342L1459.5 1338.8M1490 1326.5L1498.4 1323.1M1439.1 1350.3L1452.5 1344.9M1495.5 1327.5L1507.9 1322.5M1440.1 1353.1L1450.7 1348.9M1450.7 1348.9L1456.9 1346.4M1456.9 1346.4L1466.7 1342.4M1466.7 1342.4L1476.1 1338.6M1492.4 1332L1505.7 1326.6M1462 1347.5L1476.3 1341.8M1498.7 1332.7L1515.2 1326M1491.9 1341.9L1502.7 1337.5M1444 1364.5L1451.2 1361.6M1451.2 1361.6L1465 1356M1491.9 1345.2L1502.8 1340.7M1510.7 1337.5L1519.7 1333.9M1445 1367.3L1453.7 1363.8M1453.7 1363.8L1458.4 1361.9M1502.3 1350.7L1509.8 1347.6M1496.9 1356.1L1506.4 1352.2M1506.4 1352.2L1517.6 1347.7M1488.8 1365.8L1502.6 1360.2M1505.4 1365.6L1510.5 1363.5M1510.5 1363.5L1521.2 1359.2" stroke="#bcf000" stroke-width="2" stroke-dasharray="2 0.8"/><path d="M1247.4 957.1L1242.4 980.4M1255.9 886L1253 899.9M1250.2 913.1L1245 937.3M1251.8 874.7L1247.9 892.8M1243.3 914.6L1241.9 921.2M1241.9 921.2L1238.2 938.8M1236.4 947.2L1231.8 968.6M1240.2 883.1L1235.7 904.2M1235.7 904.2L1231.7 923.2M1241.5 846.4L1238.4 860.6M1226.2 918.4L1224.3 927.2M1224.3 927.2L1221.1 942.4M1234.3 864.6L1231.1 879.8M1221.5 924.6L1220.2 931.1M1217.1 945.8L1214.3 958.9M1233.5 852.9L1230.1 869.1M1230.1 869.1L1227.9 879.2M1216.1 934.8L1211.1 958.5M1230.4 852.4L1227.8 864.6M1227.8 864.6L1225.7 874.1M1228 848.1L1226 857.4M1215.6 906.2L1213.6 916M1209.1 937.1L1206 951.8M1231.1 818L1228.8 829M1226.5 839.7L1224.2 850.7M1223.9 836.6L1222.3 844.2M1437 1287.3L1458.3 1287.3M1458.3 1287.3L1470.3 1287.3M1469.2 1292.3L1477.3 1292.3M1437 1302.3L1445.6 1302.3M1445.6 1302.3L1461.6 1302.3M1464 1307.3L1477.9 1307.3" stroke="#ffbc00" stroke-width="2" stroke-dasharray="2 0.8"/><path d="M1242.4 980.4L1240.8 987.8M1240.8 987.8L1239.4 994.5M1239.1 980.5L1235.7 996.6M1238.4 968.6L1236.9 975.8M1235 984.7L1230.9 1004M1233.5 976.1L1231.9 983.7M1231.9 983.7L1230.6 990M1247.9 892.8L1245.2 905.9M1228.3 985.3L1224.3 1004M1232.1 951.8L1230.1 961.5M1222.9 995.1L1221 1004M1232.6 934.2L1227.8 956.7M1222.9 979.9L1218.4 1001M1239.5 871.2L1236.7 883.9M1230.8 911.7L1226.3 933.1M1224.1 943.6L1222.1 953M1234.3 880L1231.9 891.4M1215.9 966.7L1213.9 976.2M1213.9 976.2L1212.3 983.7M1208.8 1000.2L1208 1004M1229 889.7L1226.1 903M1209.6 980.7L1208 988.6M1208 973.2L1202.9 996.9M1225.7 874.1L1222.5 889.4M1205.8 968.1L1203.7 977.9M1203.7 977.9L1202.2 984.8M1220.7 882.6L1215.6 906.2M1202.6 967.7L1198.3 987.8M1198.3 987.8L1196.8 994.8M1196.8 994.8L1194.9 1004M1201.6 956.8L1198 974M1198 974L1195.3 986.6M1195.3 986.6L1193.3 996.1M1215.6 875.8L1211 897.4M1206.4 918.9L1203.7 931.7M1203.7 931.7L1201.5 942.2M1201.5 942.2L1196.7 964.5M1191.7 987.9L1188.3 1004M1222.5 827.8L1221.1 834.4M1206.2 904.6L1202.5 922M1202.5 922L1200.7 930.5M1200.7 930.5L1197.1 947.5M1195.8 953.6L1193.8 962.9M1193.8 962.9L1189.4 983.5M1187.8 991.3L1185.1 1004M1224.9 801L1220.9 819.8M1220.9 819.8L1218.5 831.4M1218.5 831.4L1215 847.8M1215 847.8L1210.3 869.7M1210.3 869.7L1208.3 879.3M1208.3 879.3L1207 885.2M1202.5 906.4L1199.5 920.8M1196 936.9L1194.4 944.4M1194.4 944.4L1191.2 959.7M1191.2 959.7L1187.9 975.2M1222.9 795.4L1217.8 819.4M1212.9 842.4L1209.2 859.8M1209.2 859.8L1204.8 880.3M1204.8 880.3L1200.2 901.9M1198.1 911.8L1195.3 924.8M1195.3 924.8L1191.2 944.2M1191.2 944.2L1189.4 952.8M1215.9 812.9L1212.4 829M1212.4 829L1209.5 842.6M1209.5 842.6L1205.7 860.7M1202.2 877.3L1200.6 884.7M1217.7 788.7L1216.1 796.6M1214.4 804.2L1213 810.8M1208.9 830.3L1207.4 837.2M1211.3 788L1210.7 790.8M1440 1311.1L1443.2 1309.8M1439.9 1314.4L1451.5 1309.7M1453.5 1312.1L1461.5 1308.9M1472.6 1310.9L1480.1 1307.8M1487.7 1308L1489.8 1307.2M1447 1327.7L1455.8 1324.1M1462.8 1321.3L1479.3 1314.7M1490.8 1310L1499.6 1306.5M1439.3 1337.3L1453.3 1331.6M1459.1 1329.3L1465 1326.9M1455.6 1333.9L1471.8 1327.4M1485.2 1322L1501 1315.6M1439.1 1347.1L1445.5 1344.5M1503.5 1321.1L1513.9 1316.8M1464.3 1340.1L1473.1 1336.6M1489.5 1329.9L1495.5 1327.5M1519.3 1317.9L1521 1317.2M1454.5 1350.6L1462 1347.5M1483.7 1338.7L1498.7 1332.7M1515.2 1326L1521.5 1323.5M1442.1 1358.8L1447.5 1356.6M1457.9 1352.4L1469.9 1347.6M1443 1361.7L1459.1 1355.1M1459.1 1355.1L1465.1 1352.7M1486 1350.8L1494.8 1347.2M1494.8 1347.2L1507.9 1341.9M1513.9 1339.5L1521.6 1336.4M1466.9 1364.9L1474.6 1361.9M1464.7 1369.1L1472.9 1365.8M1472.9 1365.8L1478.8 1363.4M1478.8 1363.4L1488.4 1359.5M1476.3 1367.6L1490.1 1362M1517 1351.2L1523.6 1348.5M1521.5 1352.6L1523.8 1351.7M1486.6 1369.9L1501.9 1363.8M1501.9 1363.8L1511.4 1359.9" stroke="#38e800" stroke-width="2" stroke-dasharray="2 0.8"/><path d="M1218.4 1001L1217.8 1004M1187.9 975.2L1184.7 990.2M1184.7 990.2L1183.7 995.1M1461.5 1308.9L1461.6 1308.9M1468.3 1322.3L1477 1318.8M1474.4 1329.5L1480.7 1327M1485.3 1325.1L1502 1318.4M1472 1333.8L1482.8 1329.4M1511.8 1330.6L1521.8 1326.6M1447 1373L1454.9 1369.8M1499.7 1367.9L1505.4 1365.6" stroke="#00e870" stroke-width="2" stroke-dasharray="2 0.8"/><path d="M1238.4 860.6L1236.1 871.8M1224.2 850.7L1219.3 873.6M1227 806.7L1222.5 827.8M1437 1292.3L1454.7 1292.3M1445.6 1315.3L1453.5 1312.1M1464.4 1311L1470.8 1308.4M1439.6 1324.2L1448 1320.8M1439.6 1327.5L1452.9 1322.1M1467.1 1316.3L1475.7 1312.9M1475.7 1312.9L1487.7 1308M1439.5 1330.7L1447 1327.7M1454.4 1327.9L1468.3 1322.3M1501.1 1309.1L1509.3 1305.8M1473.5 1323.5L1487.1 1317.9M1459.5 1338.8L1472 1333.8M1517.5 1321.9L1521.3 1320.3M1449.2 1352.7L1454.5 1350.6M1476.3 1341.8L1483.7 1338.7M1447.5 1356.6L1457.9 1352.4M1469.9 1347.6L1479.6 1343.6M1483.6 1345.3L1491.9 1341.9M1510.7 1334.3L1518.5 1331.2M1465 1356L1474.4 1352.2M1502.8 1340.7L1510.7 1337.5M1475.4 1358.3L1487.9 1353.2M1460 1367.7L1466.9 1364.9M1509.8 1347.6L1521.1 1343M1521.1 1343L1523 1342.3M1460.4 1374.1L1476.3 1367.6M1502.6 1360.2L1511.3 1356.7M1512.8 1365.8L1518.9 1363.4" stroke="#ff9400" stroke-width="2" stroke-dasharray="2 0.8"/><path d="M1235.3 1102.9L1229.7 1123.9M1230 1110.2L1227.1 1121.1M1235.3 1078.2L1232.2 1089.8M1229.8 1098.6L1224.9 1116.9M1235.3 1053.5L1233.5 1060.1M1228.8 1077.7L1224.4 1094.2M1224.4 1094.2L1222.8 1100.1M1218.2 1117.2L1214.8 1129.8M1235.3 1041.1L1230.5 1058.9M1230.5 1058.9L1227.2 1071.2M1224.6 1081.1L1222 1090.7M1219.8 1098.9L1217 1109.2M1235.3 1028.7L1231.7 1041.9M1231.7 1041.9L1227 1059.5M1217.1 1096.4L1215.4 1103M1227.4 1045.9L1225 1054.9M1212.9 1100L1212.3 1102.1M1235.3 1004L1232.6 1014.1M1215.7 1076.9L1213.1 1086.7M1232 1004L1225.8 1027.1M1225.8 1027.1L1219.9 1049.1M1219 1039.9L1214.7 1056.2M1210.1 1073.4L1209.1 1077.1M1225.4 1004L1219.2 1026.8M1212.9 1050.6L1211 1057.6M1220.2 1011L1214 1034.1M1206.3 1062.7L1205.6 1065.4M1218.7 1004L1216.7 1011.6M1216.7 1011.6L1213.6 1023.2M1215.4 1004L1213.7 1010.3M1204.2 1046L1202.2 1053.5M1212.1 1004L1205.7 1027.7M1205.7 1027.7L1201.8 1042.5M1205.5 1004L1200.1 1024.2M1202.2 1004L1200.2 1011.4M1195.5 1004L1192.3 1016.2M1189.8 1012.9L1189.2 1015.2M1188.9 1004L1186.9 1011.4M1169.9 1332.6L1174.7 1334.8M1161.8 1332.3L1167.1 1334.8M1167.1 1334.8L1175.8 1338.9M1176.2 1342.6L1184.7 1346.6M1156.6 1337L1169 1342.8M1183.7 1349.6L1190.9 1353M1205.4 1359.8L1207.5 1360.7M1151.3 1338.1L1162 1343.1M1175.9 1349.5L1189.5 1355.9M1170.8 1350.7L1181.9 1355.9M1195.2 1362.1L1211.1 1369.5M1211.1 1369.5L1213 1370.4M1121.4 1331.2L1127.9 1334.2M1133.4 1336.8L1143.4 1341.4M1143.4 1341.4L1153.2 1346M1153.2 1346L1165.6 1351.8M1165.6 1351.8L1181.7 1359.3M1202.1 1368.8L1213.7 1374.2M1126.5 1337.1L1141.7 1344.2M1153.3 1349.6L1158.8 1352.1M1158.8 1352.1L1168.5 1356.7M1181.8 1362.9L1191.1 1367.2M1154.6 1353.7L1161 1356.7M1172.7 1362.2L1183.9 1367.4M1197.5 1373.7L1208.9 1379M1169.5 1364.2L1180.1 1369.1M1096.6 1333.7L1107.3 1338.7M1120.6 1344.9L1133 1350.7M1208 1385.7L1220.4 1391.5M1118.4 1347.4L1131.2 1353.4M1209.2 1389.8L1222.3 1395.9M1135.8 1359.1L1146 1363.8M1146 1363.8L1151.5 1366.4M1187.6 1383.2L1198.7 1388.4M1218.6 1397.7L1224.3 1400.3M1101.9 1346.8L1113.1 1352M1131.9 1360.8L1142.7 1365.8M1183 1384.6L1195.3 1390.4M1109.8 1354L1124.6 1360.9M1139.4 1367.8L1153.1 1374.2M1193.6 1393.1L1209.1 1400.3M1101.1 1353.5L1112.9 1359M1126.3 1365.2L1131.8 1367.8M1147.7 1375.2L1161.3 1381.5M1166.6 1384L1181 1390.7M1104.3 1358.5L1117.2 1364.5M1220.4 1412.7L1229.1 1416.7M1227.4 1419.4L1241.1 1425.8M1241.1 1425.8L1245.8 1428M1119 1372.4L1126.2 1375.8M1191.7 1406.3L1206.6 1413.3M1233 1425.6L1246 1431.7M1185.7 1407.1L1196.2 1411.9M1212 1419.3L1223.1 1424.5M1187.6 1411.5L1198.2 1416.4M1148.6 1396.8L1158.3 1401.4M1158.3 1401.4L1172.2 1407.8M1182.2 1412.5L1190.7 1416.4M1197.6 1419.6L1209.4 1425.2M1209.4 1425.2L1216.5 1428.5M1216.5 1428.5L1224.7 1432.3M1255.3 1446.6L1256.7 1447.2M1236.9 1441.5L1248 1446.7M1197.9 1426.9L1202.7 1429.1M1202.7 1429.1L1216.7 1435.7M1129.8 1398.7L1144.5 1405.5M1159.3 1412.4L1175.3 1419.9M1181.3 1422.7L1193.3 1428.2M1232.8 1446.7L1249.1 1454.3M1198.2 1434.1L1209.3 1439.3M1209.3 1439.3L1218.4 1443.5M1255.1 1464.1L1260.6 1466.7M1139.4 1413.7L1152.5 1419.8M1152.5 1419.8L1162.9 1424.7M1245.7 1463.3L1251.9 1466.2M1142.6 1418.7L1150.1 1422.2M1265.8 1476.2L1275.8 1480.8M1204 1450.9L1215.1 1456.1M1228.9 1462.5L1242.4 1468.8M1149 1428.8L1157.2 1432.6M1232.2 1467.6L1239.1 1470.8M1269 1484.7L1281.2 1490.4M1157.3 1436.2L1165.5 1440M1174.9 1444.4L1186.4 1449.8M1215.1 1463.1L1224.4 1467.5M1170.6 1445.9L1178.1 1449.4M1206.7 1462.7L1214 1466.1M1214 1466.1L1228.2 1472.8M1158.6 1443.8L1174 1451M1208.9 1467.3L1221.7 1473.3M1178.1 1456.5L1187.7 1461M1187.7 1461L1202.9 1468M1202.9 1468L1212.1 1472.3M1172.1 1457.2L1181.7 1461.7M1194.1 1471L1196.4 1472.1M1559.3 1355.3L1566 1352.9M1568.6 1358.3L1573.3 1356.6M1548.1 1369L1560.2 1364.6M1565 1362.8L1577.5 1358.3M1581.1 1366.5L1591.1 1362.9M1591.1 1362.9L1591.9 1362.6M1579.5 1370.3L1587.9 1367.3M1582.5 1372.4L1591.5 1369.2M1552.3 1386.6L1566.2 1381.6M1582.6 1375.6L1589.3 1373.2M1553 1389.6L1561.1 1386.6M1574.2 1385L1584.7 1381.2M1554.4 1395.4L1559.8 1393.5M1556.3 1397.9L1563.2 1395.4M1563.2 1395.4L1575.4 1391M1578.5 1393L1584.8 1390.8M1590.2 1388.8L1590.4 1388.7M1577.1 1396.7L1587.4 1393M1587.5 1396.1L1590 1395.2M1622.4 1327.1L1630 1323.6M1635.8 1325.3L1641.6 1322.6M1619.4 1341.7L1626.8 1338.3M1654.9 1329.6L1658.3 1328M1658.3 1328L1659.1 1327.7M1648.3 1337.1L1656.6 1333.2M1634.4 1348L1640.9 1345M1650.6 1340.4L1656.3 1337.8M1656.3 1337.8L1660 1336M1633.3 1352.9L1638.9 1350.3M1635.1 1360.9L1643.3 1357.1M1633.3 1366.1L1641.5 1362.3M1616.4 1378.4L1619.8 1376.8M1653.7 1361L1658.5 1358.8M1659.9 1362.6L1660.5 1362.3M1620.7 1394.1L1626.9 1391.2M1642.3 1384L1645.6 1382.5M1645.6 1382.5L1650.5 1380.2M1653.1 1383.4L1658.9 1380.7M1653.3 1387.7L1659.7 1384.7M1646.4 1395.3L1649.9 1393.7M1649.9 1393.7L1656.3 1390.7M1629.9 1407.5L1636.8 1404.3M1641.3 1402.2L1648.1 1399M1620.1 1416.4L1625.2 1414.1M1624.4 1423.3L1631 1420.2M1647 1412.7L1650.2 1411.2M1653.1 1414.3L1658.9 1411.6M1630.8 1433.5L1635.8 1431.2M1633 1436.9L1641.6 1432.9M1644.6 1431.5L1649 1429.5M1652.6 1436.6L1658.2 1434M1681.8 1309.8L1687.5 1307.1M1669.6 1324.2L1676.7 1320.9M1694.3 1312.8L1697.1 1311.4M1665.4 1330.6L1673.6 1326.8M1692.5 1318L1698.3 1315.3M1679.2 1328.6L1683.7 1326.5M1708.2 1315.1L1715.1 1311.9M1722 1308.7L1730.8 1304.6M1701.3 1322.7L1707.9 1319.7M1715.8 1320.4L1719.1 1318.8M1727.3 1315L1735.2 1311.3M1763.8 1298L1769.6 1295.3M1769.6 1295.3L1773.5 1293.5M1760 1304.2L1767 1300.9M1767 1300.9L1770.7 1299.2M1770.7 1299.2L1779.7 1295M1669.1 1351L1676.5 1347.5M1676.5 1347.5L1684.6 1343.8M1700.7 1336.2L1708.3 1332.7M1761.4 1307.9L1765.4 1306.1M1665.9 1356.9L1672.6 1353.8M1696.6 1342.6L1703.6 1339.3M1754.3 1315.6L1757.1 1314.4M1780.5 1303.4L1785.6 1301.1M1741.1 1326.2L1750.1 1322.1M1761.6 1316.7L1768.7 1313.4M1768.7 1313.4L1776 1310M1796.7 1300.3L1796.9 1300.2M1746.7 1328L1749.9 1326.5M1786.2 1309.6L1792.8 1306.5M1746.2 1332.7L1755.1 1328.6M1696.5 1360.3L1703.7 1356.9M1710.5 1353.7L1715 1351.6M1749.3 1335.6L1757.1 1332M1734.6 1346.9L1742.9 1343M1702.4 1366.4L1710.2 1362.7M1764.1 1337.6L1769.9 1334.9M1710.1 1367.2L1717.5 1363.7M1720.8 1362.2L1729.6 1358.1M1729.6 1358.1L1738.2 1354M1758.2 1344.7L1762.1 1342.9M1688.3 1381.8L1693.7 1379.3M1693.7 1379.3L1702.7 1375M1736 1359.5L1739.1 1358.1M1747.3 1354.2L1751.4 1352.3M1781 1338.5L1786.9 1335.8M1790.3 1334.2L1796.1 1331.5M1678.7 1390.6L1684.7 1387.8M1696.8 1382.2L1704.5 1378.6M1743.1 1360.6L1747.6 1358.5M1747.6 1358.5L1755.1 1355M1673.8 1397.4L1680.2 1394.4M1688 1390.7L1696.5 1386.7M1768.2 1353.3L1775.8 1349.8M1783.1 1346.4L1791.2 1342.6M1676 1400.7L1683.2 1397.4M1710.3 1384.7L1716.2 1382M1667 1409.4L1673.8 1406.2M1685.1 1400.9L1691.4 1398M1730.7 1379.6L1739.4 1375.6M1772.3 1360.2L1778.7 1357.3M1757.6 1371.5L1762.6 1369.1M1781.1 1360.5L1786.3 1358.1M1687.8 1408.4L1696.9 1404.2M1706.7 1399.7L1712.5 1397M1771.6 1369.4L1780.2 1365.4M1727.1 1394.6L1732.9 1391.8M1732.9 1391.8L1737.4 1389.7M1737.4 1389.7L1743.4 1386.9M1743.4 1386.9L1751.8 1383M1770.1 1374.5L1778.1 1370.7M1667.3 1426.8L1671.4 1424.9M1713.8 1405.2L1720.9 1401.9M1723.6 1400.6L1730.3 1397.5M1745.3 1390.5L1753.3 1386.7M1692.2 1419.6L1698.1 1416.9M1703.8 1418.7L1710.2 1415.7M1721.7 1410.3L1728.1 1407.3M1728.1 1407.3L1733.7 1404.7M1739.9 1401.8L1747.4 1398.3M1786.7 1380L1791.5 1377.8M1731.8 1410L1736.2 1408M1739.4 1406.5L1745.9 1403.4M1787.1 1384.2L1795 1380.5M1675 1440.9L1680.5 1438.4M1702.6 1428L1710.5 1424.4M1720.9 1419.5L1727.7 1416.3M1732.2 1414.2L1740.9 1410.2M1740.9 1410.2L1748.2 1406.8M1769.5 1396.8L1774.5 1394.5M1782.5 1390.8L1788.1 1388.2M1674.6 1445.5L1681.7 1442.2M1719.2 1424.7L1726.5 1421.3M1674.9 1449.8L1678 1448.3M1734.9 1421.8L1740.5 1419.2M1772.6 1404.2L1780.5 1400.6M1667.9 1457.5L1675.7 1453.8M1755.2 1416.7L1764.1 1412.6M1721.3 1437L1729.9 1432.9M1740.7 1427.9L1743.5 1426.6M1783.6 1407.9L1791.8 1404.1M1795.2 1402.5L1800.5 1400.1M1776.6 1415.6L1782 1413.1M1801.9 1403.8L1807.7 1401.1M1760 1427.7L1766.7 1424.6M1770.1 1423L1775.2 1420.7M1806.4 1410.5L1811.9 1408M1809 1418.1L1816.1 1414.8M1768.6 1324.6L1768.8 1335.9M1769.9 1380.2L1770.3 1398.8M1770.3 1398.8L1770.8 1417.2M1770.8 1417.2L1771 1427M1624.3 1355.5L1625.3 1375.9M1626.3 1397L1627 1410.5M1946 832.5L1949.1 863.6M1973.7 965.2L1973.9 966.1M1983.2 1012.7L1985.7 1042.1M2011.2 823.2L2026.7 844.9M2026.7 844.9L2026.7 845M2014.9 1076L2016.8 1084.1M2013.6 1097.1L2016.8 1110.7M2005.7 1076.1L2009 1090.4M2023.4 1166L2025.6 1175.4M1996.9 1064.3L1998.7 1072.4M2009.2 1117.6L2013.6 1137.1M2016.5 1149.6L2021.3 1170.1M1996 1073.8L2000.5 1093.4M2000.5 1093.4L2002.5 1101.9M2038.7 1258.9L2042.9 1276.9M1992.5 1072.3L1996.6 1089.9M2000.3 1106L2002.8 1116.9M2002.8 1116.9L2006.5 1132.6M1998.6 1111.7L2000.9 1121.7M1994 1105.4L1996.1 1114.2M1985.4 1081.3L1989.7 1099.8M1993.6 1116.9L1995.9 1126.9" stroke="#38e800" stroke-width="2" stroke-dasharray="2 1"/><path d="M1235.3 1090.6L1230 1110.2M1235.3 1065.8L1231 1081.8M1227 1059.5L1222.3 1077.2M1222.3 1077.2L1217.1 1096.4M1235.3 1016.4L1233.7 1022.4M1218.6 1066.3L1215.7 1076.9M1214.7 1056.2L1210.1 1073.4M1211 1057.6L1207.3 1071.2M1222 1004L1220.2 1011M1210.8 1033.7L1207.4 1046.3M1200.1 1024.2L1196.8 1036.3M1200.2 1011.4L1197.6 1020.9M1197.6 1020.9L1195.1 1030.4M1614.1 1326.5L1620.2 1323.7M1615.5 1356.8L1618.9 1355.2M1621.9 1362.7L1625.8 1360.8M1628.6 1359.5L1636 1356M1644.3 1352.2L1647.5 1350.7M1643.3 1357.1L1650.8 1353.6M1619.8 1376.8L1626 1374M1644.9 1374L1653.5 1370M1640.5 1411.3L1645.6 1409M1648.6 1407.6L1656.8 1403.8M1650.2 1411.2L1655.3 1408.9M1654.5 1426.9L1658.5 1425" stroke="#00e870" stroke-width="2" stroke-dasharray="2 1"/><path d="M1223.1 1136.1L1222.5 1138.2M1224.9 1116.9L1219.5 1137.1M1217 1133.9L1215.7 1139.1M1222.8 1100.1L1218.2 1117.2M1227.2 1071.2L1224.6 1081.1M1233.7 1022.4L1231.4 1030.8M1218.1 1080.5L1212.9 1100M1227.3 1033.6L1222.3 1052.5M1222.3 1052.5L1218.6 1066.3M1213.1 1086.7L1211.5 1092.9M1219.9 1049.1L1213.9 1071.5M1228.7 1004L1224.8 1018.4M1224.8 1018.4L1219 1039.9M1219.2 1026.8L1217.5 1033.1M1217.5 1033.1L1212.9 1050.6M1213.6 1023.2L1210.8 1033.7M1207.4 1046.3L1203.8 1059.6M1213.7 1010.3L1208.4 1030.3M1206 1014.6L1203 1025.6M1203 1025.6L1199 1040.5M1199 1040.5L1198.6 1042.1M1198.8 1004L1196.1 1014.1M1196.1 1014.1L1193.3 1024.6M1192.3 1016.2L1191.5 1019M1632.8 1028.8L1639 1039.7M1186 1333.1L1193.8 1336.7M1190.6 1338.7L1196.5 1341.5M1194.4 1344L1199.3 1346.3M1198.8 1349.6L1202 1351.1M1153.7 1332.1L1163 1336.5M1199 1353.2L1204.8 1355.9M1137.5 1331.6L1151.3 1338.1M1162 1343.1L1175.9 1349.5M1189.5 1355.9L1196.6 1359.2M1129.4 1331.4L1136.7 1334.8M1142.6 1337.5L1148.3 1340.2M1148.3 1340.2L1154.9 1343.2M1154.9 1343.2L1160.8 1346M1191.2 1363.7L1202.1 1368.8M1113.3 1330.9L1126.5 1337.1M1191.1 1367.2L1206.8 1374.5M1133.9 1344.1L1142.2 1347.9M1142.2 1347.9L1154.6 1353.7M1161 1356.7L1172.7 1362.2M1126.5 1344.1L1132.2 1346.8M1089 1330.2L1096.6 1333.7M1107.3 1338.7L1120.6 1344.9M1155.3 1361.1L1169.1 1367.5M1169.1 1367.5L1184.9 1374.9M1200.8 1382.3L1208 1385.7M1220.4 1391.5L1226.8 1394.4M1088.3 1333.4L1093.2 1335.7M1102.7 1340.1L1118.4 1347.4M1173.4 1373.1L1180.2 1376.3M1226.9 1398L1229.5 1399.2M1109.2 1346.6L1125.1 1354.1M1125.1 1354.1L1135.8 1359.1M1151.5 1366.4L1163.4 1371.9M1163.4 1371.9L1177.2 1378.4M1124.5 1357.3L1131.9 1360.8M1142.7 1365.8L1155.8 1371.9M1167.8 1377.5L1183 1384.6M1215.5 1399.8L1229.4 1406.2M1153.1 1374.2L1162.1 1378.4M1162.1 1378.4L1174.6 1384.2M1209.1 1400.3L1219 1405M1224 1407.3L1237.7 1413.6M1112.9 1359L1126.3 1365.2M1131.8 1367.8L1147.7 1375.2M1181 1390.7L1194.5 1397.1M1231.6 1414.3L1240.4 1418.4M1124 1367.7L1129.8 1370.4M1129.8 1370.4L1137.3 1373.9M1161.8 1385.3L1170.4 1389.3M1212.7 1409.1L1220.4 1412.7M1148 1382.4L1155.5 1385.9M1169.9 1392.7L1178.4 1396.6M1126.2 1375.8L1139.5 1382M1181 1401.3L1191.7 1406.3M1228.1 1423.3L1233 1425.6M1136.6 1384.1L1152.8 1391.7M1165.7 1397.7L1172.6 1400.9M1180 1408L1187.6 1411.5M1202.8 1418.6L1216.2 1424.8M1190.7 1416.4L1197.6 1419.6M1136.2 1394.6L1145.5 1398.9M1145.5 1398.9L1154.2 1403M1173.8 1412.1L1183.1 1416.4M1194.2 1421.6L1209.9 1428.9M1253.8 1449.4L1258.7 1451.7M1135.3 1397.7L1147.3 1403.3M1156.4 1407.5L1164 1411.1M1172.8 1415.2L1183.7 1420.3M1215.9 1438.8L1225.5 1443.3M1249.1 1454.3L1255.7 1457.4M1133 1403.7L1145.6 1409.5M1145.6 1409.5L1159.4 1416M1159.4 1416L1174.3 1422.9M1232.4 1450L1237 1452.1M1136.2 1408.7L1148 1414.2M1169.6 1424.2L1185.8 1431.8M1199.2 1438.1L1205.6 1441.1M1268.4 1470.4L1270.3 1471.2M1162.9 1424.7L1175.1 1430.4M1206.8 1445.1L1220.9 1451.7M1268.1 1473.7L1273 1476M1160.2 1427L1175.3 1434M1215.1 1452.5L1225.2 1457.3M1161.1 1430.9L1174.4 1437.1M1215.1 1456.1L1221.2 1458.9M1238.7 1474.2L1244.6 1476.9M1202 1460.5L1206.7 1462.7M1228.2 1472.8L1238.4 1477.5M1174 1451L1179.3 1453.5M1179.3 1453.5L1184.9 1456.1M1193.1 1459.9L1200.5 1463.4M1238.9 1481.3L1241 1482.3M1168.2 1458.9L1178.5 1463.7M1178.5 1463.7L1194.1 1471M1560.2 1364.6L1565 1362.8M1553.5 1370.2L1562.1 1367.1M1584.2 1359L1587 1358M1562.3 1376.6L1569 1374.2M1578.4 1380.3L1587.4 1377M1949.1 863.6L1957.4 893.5M1957.4 893.5L1964.6 919.5M1967.2 932.7L1973.7 965.2M1973.9 966.1L1981.3 1003.2M1981.3 1003.2L1983.2 1012.7M2138.5 857.4L2149.4 877.6" stroke="#bcf000" stroke-width="2" stroke-dasharray="2 1"/><path d="M1219.5 1137.1L1216.5 1148.3M1228.9 1089.5L1224.3 1106.9M1221.4 1117.5L1217 1133.9M1217 1109.2L1214 1120.6M1215.4 1103L1213.1 1111.4M1231.4 1030.8L1227.4 1045.9M1225 1054.9L1223.2 1061.6M1223.2 1061.6L1218.1 1080.5M1232.6 1014.1L1227.3 1033.6M1214 1034.1L1211.9 1042M1211.9 1042L1206.3 1062.7M1208.4 1030.3L1204.2 1046M1202.2 1053.5L1202.1 1053.7M1201.8 1042.5L1200.3 1047.9M1192.2 1004L1189.8 1012.9M1185.6 1004L1184.6 1007.6M1177.9 1332.8L1190.6 1338.7M1182.3 1338.4L1194.4 1344M1150.3 1334L1156.6 1337M1174.6 1345.4L1183.7 1349.6M1136.7 1334.8L1142.6 1337.5M1181.7 1359.3L1186.4 1361.5M1186.4 1361.5L1191.2 1363.7M1191.3 1370.8L1197.5 1373.7M1208.9 1379L1216.2 1382.4M1140.2 1350.5L1155 1357.4M1155 1357.4L1169.5 1364.2M1214.3 1385.1L1224 1389.6M1133 1350.7L1143.1 1355.4M1093.2 1335.7L1102.7 1340.1M1131.2 1353.4L1141.4 1358.2M1147.8 1361.2L1161.4 1367.5M1180.2 1376.3L1187.8 1379.8M1187.8 1379.8L1202.3 1386.6M1202.3 1386.6L1209.2 1389.8M1222.3 1395.9L1226.9 1398M1198.7 1388.4L1211.4 1394.3M1094.7 1343.4L1101.9 1346.8M1113.1 1352L1124.5 1357.3M1155.8 1371.9L1167.8 1377.5M1229.4 1406.2L1235 1408.8M1097.9 1348.5L1103.5 1351.1M1124.6 1360.9L1130.6 1363.7M1130.6 1363.7L1139.4 1367.8M1161.3 1381.5L1166.6 1384M1200.5 1399.8L1206.4 1402.6M1153.5 1381.4L1161.8 1385.3M1170.4 1389.3L1184.6 1395.9M1184.6 1395.9L1189.2 1398.1M1155.5 1385.9L1169.9 1392.7M1199.1 1406.2L1212.4 1412.4M1212.4 1412.4L1217.5 1414.8M1157 1390.1L1167 1394.8M1167 1394.8L1175.2 1398.6M1113.8 1373.6L1122.6 1377.6M1172.6 1400.9L1185.7 1407.1M1117 1378.6L1124 1381.8M1154.9 1396.2L1166.1 1401.4M1166.1 1401.4L1180 1408M1198.2 1416.4L1202.8 1418.6M1216.2 1424.8L1226.8 1429.7M1226.8 1429.7L1242 1436.8M1242 1436.8L1254 1442.4M1245.2 1441.9L1255.3 1446.6M1154.2 1403L1160.5 1405.9M1160.5 1405.9L1165.1 1408.1M1183.1 1416.4L1194.2 1421.6M1209.9 1428.9L1224.4 1435.7M1183.7 1420.3L1197.9 1426.9M1216.7 1435.7L1222 1438.1M1256.2 1454.1L1262.2 1456.8M1144.5 1405.5L1159.3 1412.4M1175.3 1419.9L1181.3 1422.7M1193.3 1428.2L1199.9 1431.4M1255.7 1457.4L1264.9 1461.6M1218.4 1443.5L1232.4 1450M1237 1452.1L1249.4 1457.9M1185.8 1431.8L1199.2 1438.1M1190.5 1437.5L1206.8 1445.1M1235.6 1458.6L1245.7 1463.3M1251.9 1466.2L1268.1 1473.7M1175.3 1434L1185.3 1438.7M1200.6 1445.8L1206.6 1448.6M1252.2 1469.9L1265.8 1476.2M1145.8 1423.8L1161.1 1430.9M1188.6 1443.7L1204 1450.9M1221.2 1458.9L1228.9 1462.5M1257.4 1475.8L1273.5 1483.3M1273.5 1483.3L1278.5 1485.6M1157.2 1432.6L1163.2 1435.4M1199 1452.1L1211.4 1457.9M1226.9 1465.1L1232.2 1467.6M1239.1 1470.8L1253.5 1477.5M1199.1 1455.7L1206.8 1459.2M1244.6 1476.9L1250.8 1479.8M1266.6 1487.2L1270.7 1489.1M1155.4 1438.8L1161.8 1441.8M1184.4 1452.4L1190.8 1455.3M1190.8 1455.3L1202 1460.5M1238.4 1477.5L1251.9 1483.8M1251.9 1483.8L1255.8 1485.7M1226.8 1475.6L1238.9 1481.3M1161.8 1448.9L1167.5 1451.5M1167.5 1451.5L1178.1 1456.5M1224.7 1478.2L1226.1 1478.9M1165 1453.9L1172.1 1457.2M1192.7 1466.8L1208 1474M1208 1474L1211.3 1475.5M1171.4 1463.9L1181.6 1468.7M1219.8 1392.2L1232.5 1411.7M1232.5 1411.7L1242.9 1427.6M1242.9 1427.6L1251.1 1440M1251.1 1440L1265.2 1461.5M1265.2 1461.5L1272.1 1471.9M1272.1 1471.9L1280.6 1485M1235.3 1398.4L1247.3 1417.8M1272.5 1458L1280.5 1470.8M1280.5 1470.8L1291.1 1487.8M1216.8 1432.6L1225.7 1458.9M1233.1 1480.4L1240.5 1502.4M1240.5 1502.4L1245.6 1517.3M1209.6 1379L1219.3 1399.6M1243 1450.6L1247.7 1460.6M1424.9 1361.7L1430.8 1359.5M1426.8 1365.3L1437.3 1361.5M1430.9 1368L1442.3 1363.9M1406.4 1381.2L1412.1 1379.1M1421.8 1375.6L1428.9 1373M1551.7 1361.3L1562.7 1357.3M1570 1354.6L1574.5 1353M1577.5 1358.3L1582.8 1356.3M1549.5 1374.9L1556.3 1372.4M1556.3 1372.4L1570.3 1367.3M1576.2 1365.1L1585.6 1361.7M1585.6 1361.7L1591.2 1359.7M1569.5 1370.8L1581.1 1366.5M1550.9 1380.7L1562.3 1376.6M1569 1374.2L1579.5 1370.3M1551.6 1383.7L1557.9 1381.4M1557.9 1381.4L1563.2 1379.5M1572.4 1376.1L1582.5 1372.4M1566.2 1381.6L1572 1379.5M1572 1379.5L1577.9 1377.3M1577.9 1377.3L1582.6 1375.6M1589.3 1373.2L1591.3 1372.4M1561.1 1386.6L1573.6 1382M1587.4 1377L1591.1 1375.7M1553.7 1392.5L1563.7 1388.9M1563.7 1388.9L1574.2 1385M1588.4 1383L1590.8 1382.2M1575.4 1391L1582.7 1388.3M1566.7 1397.3L1578.5 1393M1587.4 1393L1590.2 1392M1652.5 1321.9L1657.7 1319.5M1626.8 1338.3L1629.6 1337M1652.3 1326.4L1658.6 1323.5M1627 1342.6L1632.1 1340.2M1632.1 1340.2L1640.7 1336.2M1640.7 1336.2L1649 1332.3M1636.7 1342.5L1642.4 1339.8M1642.4 1339.8L1648.3 1337.1M1640.9 1345L1644.6 1343.2M1625.8 1360.8L1628.6 1359.5M1640.2 1354.1L1644.3 1352.2M1616.1 1369.8L1623.2 1366.5M1650.8 1353.6L1657.4 1350.5M1616.3 1374.1L1624.4 1370.3M1624.4 1370.3L1633.3 1366.1M1652.7 1357.1L1660.3 1353.6M1660.3 1353.6L1660.7 1353.4M1623.2 1379.7L1628.8 1377.1M1637.3 1373.1L1643.2 1370.4M1651.2 1366.6L1659.9 1362.6M1638.6 1376.9L1642 1375.3M1653.5 1370L1659.2 1367.3M1632.6 1384.2L1640.1 1380.6M1653.2 1374.5L1660.2 1371.3M1650.5 1380.2L1657.7 1376.9M1624.1 1396.9L1627.4 1395.4M1629.6 1398.8L1636.8 1395.4M1646.4 1390.9L1653.3 1387.7M1618 1413L1620.9 1411.7M1622.3 1419.8L1626.7 1417.8M1631 1420.2L1639.4 1416.3M1655.3 1408.9L1659 1407.1M1655.6 1421.9L1658.6 1420.5M1641.6 1432.9L1644.6 1431.5M1647.9 1438.8L1652.6 1436.6M1665.1 1313.1L1671.9 1309.9M1671.9 1309.9L1674.4 1308.8M1673.9 1313.4L1678.1 1311.5M1672.2 1318.6L1679.1 1315.4M1684.2 1313.1L1689.2 1310.7M1665.3 1326.3L1669.6 1324.2M1705.4 1307.6L1710.9 1305M1710.9 1305L1713.8 1303.7M1673.6 1326.8L1678.2 1324.7M1686.2 1320.9L1692.5 1318M1665.5 1335L1670.9 1332.5M1691.8 1322.8L1698 1319.9M1705.4 1316.4L1708.2 1315.1M1715.1 1311.9L1722 1308.7M1739.5 1300.5L1740 1300.3M1709.6 1323.2L1715.8 1320.4M1665.8 1348.1L1669.8 1346.2M1673.5 1344.5L1679.5 1341.7M1685.4 1339L1693.9 1335M1718.5 1323.5L1725.1 1320.4M1732.3 1317.1L1735.4 1315.6M1693 1339.9L1696.8 1338.1M1711.6 1331.2L1717.5 1328.4M1757 1310L1761.4 1307.9M1727.2 1328.3L1733.2 1325.5M1757.1 1314.4L1761.1 1312.5M1791.8 1298.2L1795.2 1296.6M1677.3 1356L1682.1 1353.8M1701.4 1344.8L1708.8 1341.3M1708.8 1341.3L1713 1339.3M1713 1339.3L1716 1337.9M1787 1304.8L1790.2 1303.4M1666.1 1365.6L1670.6 1363.5M1700 1349.8L1704.6 1347.7M1704.6 1347.7L1710.5 1344.9M1719.9 1340.5L1723.2 1339M1754.1 1324.6L1761.6 1321.1M1714 1347.7L1721 1344.4M1755.1 1328.6L1762.9 1324.9M1795.1 1309.9L1796.7 1309.2M1666.3 1374.4L1673.1 1371.2M1673.1 1371.2L1680.2 1367.9M1688.2 1364.1L1696.5 1360.3M1703.7 1356.9L1710.5 1353.7M1715 1351.6L1718.7 1349.9M1735.4 1342.1L1739.3 1340.3M1739.3 1340.3L1745.5 1337.4M1774.8 1323.8L1779.7 1321.5M1787 1318.1L1790.9 1316.2M1670.1 1377L1673 1375.6M1680.6 1372.1L1687.6 1368.8M1746.5 1341.4L1754.1 1337.8M1790 1321.1L1796.4 1318.1M1710.2 1362.7L1718.8 1358.7M1741.4 1348.2L1744.1 1346.9M1751.1 1343.6L1757.1 1340.8M1757.1 1340.8L1764.1 1337.6M1769.9 1334.9L1772.9 1333.5M1791.8 1324.7L1796.3 1322.5M1702.2 1370.9L1706.2 1369M1780.8 1334.2L1784.3 1332.6M1744.2 1355.7L1747.3 1354.2M1786.9 1335.8L1790.3 1334.2M1687.7 1386.4L1696.8 1382.2M1731.6 1366L1735.7 1364.1M1735.7 1364.1L1743.1 1360.6M1755.1 1355L1764.1 1350.8M1680.2 1394.4L1688 1390.7M1713.9 1378.6L1720.4 1375.6M1720.4 1375.6L1727.8 1372.1M1727.8 1372.1L1734.1 1369.2M1666.9 1405L1672.9 1402.1M1683.2 1397.4L1686 1396.1M1686 1396.1L1692.2 1393.2M1692.2 1393.2L1698.3 1390.3M1691.4 1398L1697.9 1394.9M1702.1 1393L1706 1391.2M1756.9 1367.4L1763.6 1364.3M1763.6 1364.3L1772.3 1360.2M1778.7 1357.3L1787.6 1353.1M1787.6 1353.1L1791.4 1351.3M1667 1413.7L1670.2 1412.2M1688.8 1403.6L1694.2 1401.1M1700.8 1398L1709.1 1394.1M1728 1385.3L1735.7 1381.7M1675.7 1414.1L1681.8 1411.3M1681.8 1411.3L1687.8 1408.4M1793.9 1359L1795.5 1358.2M1698.3 1412.4L1705.7 1408.9M1730.3 1397.5L1738.7 1393.6M1753.3 1386.7L1758 1384.5M1761.4 1383L1770.1 1378.9M1775.2 1376.5L1782.2 1373.3M1729.1 1402.5L1732.5 1400.9M1756.5 1389.7L1761.7 1387.2M1767.4 1384.6L1770.7 1383.1M1747.4 1398.3L1750.4 1396.9M1750.4 1396.9L1757.2 1393.8M1760.8 1392.1L1766.4 1389.5M1766.4 1389.5L1772.5 1386.6M1775.5 1385.2L1779.3 1383.4M1687.8 1430.5L1695.9 1426.8M1695.9 1426.8L1698.8 1425.4M1776.4 1389.2L1784 1385.7M1784 1385.7L1787.1 1384.2M1667.7 1444.3L1675 1440.9M1680.5 1438.4L1688.8 1434.5M1714 1422.7L1720.9 1419.5M1756.5 1402.9L1762.7 1400M1788.1 1388.2L1796.7 1384.2M1796.7 1384.2L1796.9 1384.1M1715.5 1426.4L1719.2 1424.7M1740.5 1414.8L1748.5 1411M1756.4 1407.4L1761.9 1404.8M1761.9 1404.8L1769.9 1401.1M1769.9 1401.1L1775.5 1398.5M1783.5 1394.7L1787.4 1392.9M1798.1 1387.9L1799.1 1387.5M1675.7 1453.8L1676 1453.7M1711.8 1437L1715.6 1435.2M1729.7 1428.6L1733 1427.1M1798.7 1396.5L1803.4 1394.3M1729.9 1432.9L1735.2 1430.5M1735.2 1430.5L1740.7 1427.9M1777.3 1410.9L1783.6 1407.9M1800.5 1400.1L1805.2 1397.8M1757.9 1424.3L1765 1421M1786.3 1411.1L1792.1 1408.4M1747.4 1433.6L1751.1 1431.9M1751.1 1431.9L1756.2 1429.5M1766.7 1424.6L1770.1 1423M1802.6 1412.3L1806.4 1410.5M1670 1317L1670.4 1332.8M1671.8 1395.7L1672.3 1418.3M1672.3 1418.3L1672.9 1444.8M1672.9 1444.8L1673 1450M1703.8 1342.3L1704.4 1366.2M1704.4 1366.2L1704.8 1385M1748 1305L1747.3 1333.4M1746 1390.3L1745.5 1409M1796 1295L1795.4 1322.2M1793.3 1410.2L1793 1423M1623 1330L1624.3 1355.5M1627 1410.5L1628 1430M1682.5 1202.8L1685.5 1241.7M1685.5 1241.7L1685.6 1243.2M1964.6 919.5L1967.2 932.7M1985.7 1042.1L1986.3 1049.9M1996 975.4L1998.5 989.2M1998.5 989.2L1999.6 995.7M2006.5 1034.5L2008.9 1048.6M1993 975.4L1994.7 985M1994.7 985L1997.7 1002M1997.7 1002L2000.7 1019.2M1990 975.4L1992.1 987.7M1993.2 993.7L1994.5 1001.4M1994.5 1001.4L1996.2 1010.8M1986.9 975.4L1988.5 984.5M1988.5 984.5L1991.9 1003.8M1991.9 1003.8L1993.1 1010.7M1993.1 1010.7L1996.5 1029.5M1988.1 999.6L1990.7 1013.9M1992.8 1025.9L1995.3 1040.3M1995.3 1040.3L1996.2 1045.4M1988 1016.3L1989.4 1024.3M1989.4 1024.3L1992.5 1041.9M1992.5 1041.9L1994 1049.9M1986.3 1024.1L1988.9 1038.6M1985 1033.4L1987.1 1045.4M1987.1 1045.4L1987.9 1049.9M1981.6 1031.9L1983.6 1043.3M1980.7 1043.6L1981.8 1049.9M2009.1 1064.2L2013.7 1084.1M2013.7 1084.1L2017.4 1100M2017.4 1100L2019 1106.8M2016.5 1122.6L2017.5 1126.9M2055.7 1292.6L2057.1 1298.4M2001.1 1069.4L2006 1090.6M2046.7 1266.7L2050.3 1282.5M2050.3 1282.5L2053.2 1294.9M1993.6 1050L1996.9 1064.3M2013.6 1137.1L2016.5 1149.6M2037.6 1240.9L2039.2 1247.6M2048.2 1286.8L2050.9 1298.4M2010.1 1135.2L2012 1143.4M2014.3 1153.3L2018.4 1170.8M2018.4 1170.8L2020.8 1181.5M2026.9 1207.7L2030.9 1225.2M2035.6 1245.6L2038.7 1258.9M2042.9 1276.9L2046.3 1292M1996.6 1089.9L2000.3 1106M2012.8 1160L2017.7 1181.3M2033.8 1250.8L2037 1265M2037 1265L2041.3 1283.6M1984.3 1050L1988.1 1066.4M1990.8 1078.1L1994.5 1094.1M2018.6 1198.7L2023.1 1218M2030.2 1248.6L2032.1 1257M1981.2 1050L1986 1070.5M1986 1070.5L1989.2 1084.6M1990.8 1091.4L1994 1105.4M2000.8 1148.3L2003.9 1161.6M1988.9 1109.7L1993 1127.7M1973 1450L2003.5 1450.7M2003.5 1450.7L2019.3 1451.1M2019.3 1451.1L2045 1451.7M2045 1451.7L2056 1452M2017.4 1236.3L2016.1 1246.8M2016.1 1246.8L2013.6 1268M2013.6 1268L2009.5 1302.4M2009.5 1302.4L2006.3 1328.5M2006.3 1328.5L2002 1364.3M2002 1364.3L1999 1389.9M1999 1389.9L1998.8 1391.6M2113.7 1050L2121.2 1060.1M2121.2 1060.1L2132.3 1074.8M2132.3 1074.8L2147.8 1071.7M2126.1 1090.4L2138.5 1081.1" stroke="#f4e400" stroke-width="2" stroke-dasharray="2 1"/><path d="M1216.5 1148.8L1216.2 1149.9M1215.9 1141.4L1213.4 1149.9M1212.5 1143.1L1210.6 1149.9M1210.8 1139.3L1207.8 1149.9M1213.8 1119L1208.8 1136.5M1208.8 1136.5L1205.2 1149.3M1213.2 1111.6L1208.2 1128.9M1212.5 1104.2L1206.9 1123.6M1211.8 1096.7L1206.8 1114.2M1206.8 1114.2L1201.9 1131.5M1211.1 1089.3L1208.2 1099.6M1196.7 1139.5L1193.7 1149.9M1209.1 1076.8L1205.3 1090M1200.1 1108.3L1197.8 1116.3M1197.8 1116.3L1195.8 1123.1M1195.8 1123.1L1194.1 1129.1M1194.1 1129.1L1188.8 1147.6M1203.3 1087.1L1199.6 1100.1M1193.9 1120L1189.8 1134.3M1206.4 1066.7L1200.4 1087.4M1200.4 1087.4L1197.2 1098.6M1191.2 1119.6L1188.2 1130.2M1188.2 1130.2L1184.3 1143.8M1184.3 1143.8L1182.5 1149.9M1205 1061.7L1201.8 1073M1201.8 1073L1196.8 1090.4M1196.8 1090.4L1190.3 1113.1M1180.1 1148.4L1179.7 1149.9M1202.3 1051.7L1197.7 1067.6M1197.7 1067.6L1195.3 1075.9M1195.3 1075.9L1191.2 1090.2M1187 1105L1185.3 1110.9M1188.2 1090.9L1184.8 1102.8M1180.6 1117.3L1177.9 1126.9M1177.9 1126.9L1173.3 1142.8M1196.4 1052.3L1191.4 1070.1M1188.1 1081.6L1183.1 1099M1177.6 1117.9L1175.7 1124.6M1188 1072L1185.2 1081.7M1185.2 1081.7L1179.6 1101.4M1172.6 1125.5L1166.9 1145.7M1166.9 1145.7L1165.7 1149.9M1192.9 1045.2L1190.9 1052M1188.7 1059.9L1182.2 1082.5M1178.5 1095.3L1171.7 1119M1171.7 1119L1169.5 1126.6M1169.5 1126.6L1167.1 1135.1M1195.4 1026.5L1193.3 1033.9M1193.3 1033.9L1191.6 1040M1191.6 1040L1186.1 1059.2M1164.8 1133.3L1160 1149.9M1188.6 1040.6L1184.4 1055.3M1179.7 1071.5L1177.3 1080M1177.3 1080L1172.3 1097.5M1168.6 1110.3L1162.8 1130.4M1179 1064.2L1172.7 1086.3M1172.7 1086.3L1171 1092.1M1164.4 1115.1L1158.2 1136.7M1190.9 1012.9L1184.5 1035.4M1184.5 1035.4L1179.9 1051.2M1179.9 1051.2L1174.3 1070.7M1174.3 1070.7L1169.5 1087.6M1166.8 1097.1L1161 1117.3M1161 1117.3L1155.1 1137.8M1184 1027.1L1181.4 1036.4M1176 1054.9L1172.3 1068M1172.3 1068L1170.4 1074.6M1168.2 1082.3L1165.7 1091M1165.7 1091L1161.3 1106.2M1161.3 1106.2L1154.5 1130.1M1185.9 1010.8L1180 1031.5M1180 1031.5L1178.1 1037.9M1156.6 1112.8L1150 1136M1183.4 1009.7L1176.6 1033.6M1173.6 1044L1167.2 1066.3M1161.4 1086.4L1154.6 1110.2M1145.8 1141L1143.5 1148.7M1143.5 1148.7L1143.2 1149.9M1178 1018.7L1176.3 1024.7M1176.3 1024.7L1174.4 1031.2M1167.9 1054L1165.5 1062.3M1155 1099.1L1150.8 1113.6M1143.4 1139.2L1140.4 1149.9M1140.4 1149.9L1140.4 1149.9M1178.4 1007.5L1175.9 1016.4M1167.5 1045.4L1164.8 1055.1M1164.8 1055.1L1161.8 1065.5M1152.8 1097L1150.8 1103.8M1144 1127.4L1140.6 1139.4M1140.6 1139.4L1137.6 1149.9M1175.9 1006.5L1172 1020.2M1172 1020.2L1167.3 1036.4M1167.3 1036.4L1161.6 1056.2M1159.6 1063.4L1155.3 1078.3M1150.4 1095.2L1145.7 1111.6M1140.2 1130.8L1138.3 1137.6M1138.3 1137.6L1134.8 1149.9M1173.4 1005.4L1171.7 1011.5M1171.7 1011.5L1165.4 1033.1M1165.4 1033.1L1159.4 1054.1M1159.4 1054.1L1155.8 1066.6M1143 1111.5L1139.3 1124.2M1139.3 1124.2L1133.1 1145.9M1170.9 1004.3L1169.1 1010.5M1169.1 1010.5L1166.5 1019.6M1166.5 1019.6L1160.6 1040.3M1160.6 1040.3L1155.3 1058.8M1145.1 1094.1L1144.7 1095.7M1211.5 1185.5L1207.1 1201M1213 1170.8L1210.1 1180.7M1210.1 1180.7L1205.8 1195.8M1205.8 1195.8L1202 1209M1207 1181.9L1202.4 1197.9M1202.4 1197.9L1196.7 1217.9M1197.4 1205.4L1191.5 1226.2M1210.5 1150L1208.6 1156.6M1208.6 1156.6L1204.1 1172.4M1204.1 1172.4L1197.6 1195M1194.9 1204.3L1190.2 1220.7M1190.2 1220.7L1188 1228.5M1199.6 1178.3L1193 1201.4M1190.5 1209.9L1184.7 1230.3M1184.7 1230.3L1184.3 1231.5M1197 1177.4L1195 1184.6M1195 1184.6L1188.6 1206.7M1188.6 1206.7L1186.1 1215.5M1186.1 1215.5L1182.4 1228.4M1202.1 1150L1200.4 1155.9M1190.6 1189.9L1184 1213.2M1180.5 1215.3L1178.6 1222.2M1196.5 1150L1191.9 1165.8M1188.5 1177.8L1184.3 1192.3M1184.3 1192.3L1181.4 1202.4M1181.4 1202.4L1179.8 1208.3M1179.8 1208.3L1176.7 1219.1M1193.7 1150L1191.1 1158.9M1181.3 1193.1L1176.6 1209.6M1176.6 1209.6L1174.7 1216M1183.1 1176.9L1180 1187.7M1177.5 1196.5L1174.7 1206.3M1180.5 1176.1L1174.3 1197.9M1171.7 1207.1L1170.9 1209.8M1181.9 1161.7L1178.1 1174.9M1178.1 1174.9L1176.1 1181.7M1176.1 1181.7L1171.2 1198.9M1171.2 1198.9L1169 1206.7M1173.9 1179.8L1168.4 1198.8M1179.6 1150L1177.5 1157.4M1173 1173L1167.9 1190.8M1176.8 1150L1171.1 1169.7M1171.1 1169.7L1165.4 1189.6M1174 1150L1171.6 1158.2M1171.6 1158.2L1166.6 1175.9M1171.2 1150L1169.1 1157.4M1167.1 1164.3L1164.5 1173.4M1162 1181.9L1159.4 1191.1M1162.6 1170L1158.4 1184.9M1158.4 1184.9L1157.5 1188M1159.2 1172.3L1157.2 1179.2M1159 1163.3L1154 1180.5M1154 1180.5L1153.6 1181.8M1157.2 1159.5L1154 1170.7M1150.9 1171.6L1149.8 1175.6M1154.3 1150L1150.1 1164.6M1150.1 1164.6L1147.9 1172.6M1151.5 1150L1146.8 1166.3M1145.9 1150L1141 1167.1M1143.1 1150L1140.9 1157.8M1131.9 1150L1131.5 1151.4" stroke="#ff9400" stroke-width="2" stroke-dasharray="2 0.7"/><path d="M1215.2 1133.9L1212.5 1143.1M1214.5 1126.5L1210.8 1139.3M1205.2 1149.3L1205 1149.9M1208.2 1128.9L1203.4 1145.7M1203.4 1145.7L1202.2 1149.9M1206.9 1123.6L1201.5 1142.6M1201.5 1142.6L1199.4 1149.9M1201.9 1131.5L1196.6 1149.9M1208.2 1099.6L1203.3 1116.7M1203.3 1116.7L1196.7 1139.5M1210.5 1081.9L1203.7 1105.4M1201.2 1114.1L1196.8 1129.4M1196.8 1129.4L1192.3 1145M1192.3 1145L1190.9 1149.9M1205.3 1090L1200.1 1108.3M1207.7 1071.7L1203.3 1087.1M1199.6 1100.1L1193.9 1120M1189.8 1134.3L1185.3 1149.9M1197.2 1098.6L1191.2 1119.6M1190.3 1113.1L1184.3 1134M1184.3 1134L1181.9 1142.3M1203.6 1056.7L1201.2 1065M1192 1097.4L1187.1 1114.2M1187.1 1114.2L1180.8 1136.3M1180.8 1136.3L1178.1 1145.7M1191.2 1090.2L1187 1105M1185.3 1110.9L1180.7 1127M1177 1139.6L1175 1146.7M1175 1146.7L1174.1 1149.9M1190 1084.5L1188.2 1090.9M1184.8 1102.8L1180.6 1117.3M1173.3 1142.8L1171.3 1149.9M1191.4 1070.1L1188.1 1081.6M1183.1 1099L1177.6 1117.9M1175.7 1124.6L1173.1 1133.9M1198.2 1036.6L1193.3 1053.5M1193.3 1053.5L1188 1072M1177.7 1107.8L1172.6 1125.5M1190.9 1052L1188.7 1059.9M1186.1 1059.2L1180.4 1079.1M1180.4 1079.1L1174.9 1098.2M1169.5 1116.9L1166.5 1127.3M1166.5 1127.3L1164.8 1133.3M1194 1021.5L1188.6 1040.6M1184.4 1055.3L1179.7 1071.5M1162.8 1130.4L1160.9 1137.3M1160.9 1137.3L1157.2 1149.9M1192.7 1016.5L1185.9 1040.1M1182.6 1051.5L1179 1064.2M1166.3 1108.6L1164.4 1115.1M1158.2 1136.7L1154.4 1149.9M1169.5 1087.6L1166.8 1097.1M1188.4 1011.8L1184 1027.1M1181.4 1036.4L1176 1054.9M1170.4 1074.6L1168.2 1082.3M1154.5 1130.1L1149.9 1146.2M1149.9 1146.2L1148.8 1149.9M1178.1 1037.9L1176 1045.2M1169.8 1066.9L1163.4 1089.3M1159.6 1102.3L1156.6 1112.8M1167.2 1066.3L1161.4 1086.4M1154.6 1110.2L1149 1129.8M1149 1129.8L1145.8 1141M1180.9 1008.6L1178 1018.7M1165.5 1062.3L1159 1085M1159 1085L1155 1099.1M1150.8 1113.6L1148 1123.4M1148 1123.4L1143.4 1139.2M1169.5 1038.6L1167.5 1045.4M1150.8 1103.8L1144 1127.4M1161.6 1056.2L1159.6 1063.4M1155.3 1078.3L1150.4 1095.2M1145.7 1111.6L1140.2 1130.8M1155.8 1066.6L1151.5 1081.9M1151.5 1081.9L1149.2 1089.9M1149.2 1089.9L1143 1111.5M1133.1 1145.9L1131.9 1149.9M1155.3 1058.8L1150.5 1075.5M1150.5 1075.5L1145.1 1094.1M1204.9 1208.8L1201.1 1221.9M1218.9 1150L1215.9 1160.4M1215.9 1160.4L1213 1170.8M1202 1209L1195.8 1230.6M1216.1 1150L1210.7 1168.9M1196.7 1217.9L1193.1 1230.4M1193.1 1230.4L1190.3 1240.1M1190.3 1240.1L1190.1 1240.8M1207.1 1171.7L1200.9 1193.4M1200.9 1193.4L1197.4 1205.4M1191.5 1226.2L1188.2 1237.7M1197.6 1195L1194.9 1204.3M1188 1228.5L1186.2 1234.6M1204 1162.7L1199.6 1178.3M1193 1201.4L1190.5 1209.9M1204.9 1150L1200.7 1164.5M1200.7 1164.5L1197 1177.4M1198.6 1162L1196.7 1168.6M1196.7 1168.6L1193.7 1179.4M1193.7 1179.4L1190.6 1189.9M1184 1213.2L1180.5 1225.3M1199.3 1150L1193.6 1169.9M1193.6 1169.9L1190 1182.3M1190 1182.3L1183.8 1204M1183.8 1204L1180.5 1215.3M1191.1 1158.9L1187.8 1170.3M1190.8 1150L1185.1 1169.9M1180 1187.7L1177.5 1196.5M1174.7 1206.3L1172.8 1212.9M1185.3 1159.4L1180.5 1176.1M1185.2 1150L1181.9 1161.7M1182.4 1150L1180.7 1156M1180.7 1156L1173.9 1179.8M1168.4 1198.8L1167.1 1203.5M1177.5 1157.4L1173 1173M1167.9 1190.8L1165.1 1200.4M1166.6 1175.9L1161.3 1194.2M1169.1 1157.4L1167.1 1164.3M1164.5 1173.4L1162 1181.9M1165.6 1150L1159.2 1172.3M1157.2 1179.2L1155.6 1184.9M1159.9 1150L1157.2 1159.5M1154 1170.7L1151.7 1178.7M1157.1 1150L1150.9 1171.6M1146.8 1166.3L1145.6 1170.7M1148.7 1150L1143.3 1168.9M1140.9 1157.8L1138.7 1165.3M1140.3 1150L1138.1 1157.5M1134.7 1150L1132.8 1156.4M1132.8 1156.4L1132.4 1157.9" stroke="#ffbc00" stroke-width="2" stroke-dasharray="2 0.7"/><path d="M1203.7 1105.4L1201.2 1114.1M1188.8 1147.6L1188.1 1149.9M1181.9 1142.3L1180.1 1148.4M1201.2 1065L1197.8 1077.1M1197.8 1077.1L1192 1097.4M1178.1 1145.7L1176.9 1149.9M1180.7 1127L1177 1139.6M1200.9 1046.6L1194.4 1069.4M1194.4 1069.4L1190 1084.5M1199.5 1041.6L1196.4 1052.3M1173.1 1133.9L1168.5 1149.9M1179.6 1101.4L1177.7 1107.8M1196.8 1031.6L1192.9 1045.2M1182.2 1082.5L1178.5 1095.3M1167.1 1135.1L1162.8 1149.9M1174.9 1098.2L1169.5 1116.9M1172.3 1097.5L1168.6 1110.3M1185.9 1040.1L1182.6 1051.5M1171 1092.1L1166.3 1108.6M1155.1 1137.8L1151.6 1149.9M1176 1045.2L1169.8 1066.9M1163.4 1089.3L1159.6 1102.3M1150 1136L1146 1149.9M1176.6 1033.6L1173.6 1044M1174.4 1031.2L1167.9 1054M1175.9 1016.4L1169.5 1038.6M1161.8 1065.5L1154.9 1089.4M1154.9 1089.4L1152.8 1097M1207.1 1201L1204.9 1208.8M1195.8 1230.6L1192 1243.9M1210.7 1168.9L1207 1181.9M1213.3 1150L1207.1 1171.7M1207.7 1150L1204 1162.7M1200.4 1155.9L1198.6 1162M1191.9 1165.8L1188.5 1177.8M1187.8 1170.3L1181.3 1193.1M1185.1 1169.9L1183.1 1176.9M1188 1150L1185.3 1159.4M1174.3 1197.9L1171.7 1207.1M1165.4 1189.6L1163.2 1197.3M1168.4 1150L1162.6 1170M1162.8 1150L1159 1163.3M1138.1 1157.5L1136.4 1163.4M1137.5 1150L1134.1 1161.6" stroke="#f4e400" stroke-width="2" stroke-dasharray="2 0.7"/><path d="M1235.3 1000.9L1259.8 997.3M1259.8 997.3L1278 994.6M1278 994.6L1288.1 993.1M1235.3 1075.4L1252.2 1071.2M1252.2 1071.2L1266.3 1067.6M1193.9 1305.6L1189.6 1317.5M1189.6 1317.5L1186 1327.3M1186 1327.3L1183.9 1333M1177.9 1332L1177.6 1332.8M1199.7 1263.3L1193.6 1280M1193.6 1280L1186.8 1298.8M1186.8 1298.8L1181.3 1313.9M1181.3 1313.9L1177.6 1324.2M1177.6 1324.2L1174.4 1332.7M1198.3 1258.5L1193.8 1270.8M1190.7 1279.3L1186.6 1290.7M1182.4 1302.1L1175.9 1319.8M1177.2 1307.6L1173.6 1317.4M1193.9 1244.1L1190 1255M1190 1255L1186.7 1263.9M1173.5 1300.2L1168.1 1315M1169.1 1303.5L1164.8 1315.4M1183.3 1255.8L1181.1 1261.7M1181.1 1261.7L1179.1 1267.2M1179.1 1267.2L1174.9 1278.7M1165.2 1305.5L1162.7 1312.3M1155.2 1324.3L1152.3 1332.1M1172.8 1266.9L1170.8 1272.4M1160.4 1301.2L1156.1 1313M1162.8 1285.8L1158.1 1298.7M1185.3 1215.2L1180.3 1229M1180.3 1229L1178.1 1235M1167.4 1255.7L1163.3 1266.7M1158.6 1279.6L1154.1 1292.1M1154.1 1292.1L1150 1303.3M1167.5 1246.6L1165.2 1253M1147.2 1302.2L1143 1313.8M1177.2 1211L1170.9 1228.3M1157.9 1264.1L1156 1269.4M1140.4 1312.2L1137.5 1320.3M1139.5 1297.1L1133.8 1312.9M1152.3 1253.3L1150.1 1259.2M1134.1 1294.4L1130.6 1304.2M1130.6 1304.2L1126.9 1314.2M1147.4 1249.1L1141.1 1266.3M1130.9 1294.4L1125.3 1309.9M1121.4 1320.5L1117.6 1331M1116.2 1326.1L1114.4 1331M1162.7 1189.5L1157.1 1204.8M1148.4 1228.8L1144 1241M1121.2 1303.6L1118.9 1309.8M1118.9 1309.8L1112.3 1328.2M1154.1 1204.4L1147.9 1221.3M1121 1295.3L1115.9 1309.5M1109.5 1326.8L1108.1 1330.8M1162.5 1172.5L1156.3 1189.6M1143.6 1224.4L1137.8 1240.4M1157.7 1176.9L1155.7 1182.5M1155.7 1182.5L1151 1195.5M1133.9 1242.2L1129.9 1253.3M1113.9 1297.4L1110.8 1305.8M1104.1 1324.2L1101.8 1330.6M1154.6 1176.7L1148.4 1193.6M1153.7 1170.5L1146.9 1189M1111.7 1285.8L1108 1295.9M1105.7 1302.3L1101 1315.3M1101 1315.3L1097 1326.2M1126.5 1236.3L1120.8 1252.1M1127.7 1224.3L1123.1 1236.8M1118.2 1250.3L1116.1 1256.1M1479.1 1418.6L1494 1416.5M1494 1416.5L1508.1 1414.5M1591.8 1402.7L1605.8 1400.8M1486.9 1421.5L1493.7 1420.6M1518.2 1417.1L1534.6 1414.8M1550.9 1412.5L1558.9 1411.4M1569.4 1409.9L1578.3 1408.7M1533.9 1419L1545.1 1417.4M1545.1 1417.4L1554.5 1416.1M1435.3 1436.9L1448.3 1435M1448.3 1435L1466.4 1432.5M1473.1 1431.5L1491.9 1428.9M1505 1427.1L1517.1 1425.4M1558.8 1419.5L1567.2 1418.3M1575 1417.2L1588.3 1415.4M1604.8 1413L1610.6 1412.2M1438.1 1440.5L1446.1 1439.4M1456.2 1438L1474.3 1435.4M1613.8 1415.8L1624.3 1414.3M1522 1432.7L1527 1432M1616.9 1419.4L1625.3 1418.2M1443.8 1447.8L1449.1 1447M1548.9 1433L1566.9 1430.5M1609.9 1424.4L1624.6 1422.4M1624.6 1422.4L1626.3 1422.1M1479.3 1446.8L1498.8 1444.1M1498.8 1444.1L1509.7 1442.6M1539.2 1438.4L1552.7 1436.5M1581.1 1432.5L1594.2 1430.7M1449.4 1455.1L1460.8 1453.5M1522.7 1444.8L1528.4 1444M1528.4 1444L1534.3 1443.1M1539.2 1442.4L1553.3 1440.5M1553.3 1440.5L1564.7 1438.9M1576.4 1437.2L1589.2 1435.4M1589.2 1435.4L1601.4 1433.7M1471.2 1456L1484.7 1454.2M1500.2 1452L1505.7 1451.2M1505.7 1451.2L1516.8 1449.6M1516.8 1449.6L1522.4 1448.9M1541.1 1446.2L1549.9 1445M1566.2 1442.7L1575.3 1441.4M1547.5 1449.4L1565.5 1446.8M1457.9 1466L1476.4 1463.4M1554.4 1452.4L1566.8 1450.7M1528.6 1460.1L1534.9 1459.2M1546.3 1457.6L1563.5 1455.2M1594.5 1450.8L1610.4 1448.6M1616.7 1447.7L1627.2 1446.2M1627.2 1446.2L1632.1 1445.5M1499.3 1468.3L1514.6 1466.1M1544.8 1461.9L1564.1 1459.2M1564.1 1459.2L1574.9 1457.6M1593.9 1455L1603 1453.7M1626.6 1450.4L1633.1 1449.5M1508.8 1471L1523 1469M1519.8 1473.5L1527.9 1472.3M1534.9 1471.3L1553.4 1468.7M1597.3 1462.6L1606.7 1461.2M1482.1 1482.8L1490.2 1481.7M1505.5 1479.5L1515.5 1478.1M1515.5 1478.1L1533.3 1475.6M1533.3 1475.6L1545.1 1473.9M1576.4 1469.5L1585.3 1468.3M1521.8 1481.3L1539.7 1478.7M1575.8 1473.7L1593.2 1471.2M1533.1 1483.7L1539.1 1482.9M1539.1 1482.9L1547.3 1481.7M1590.8 1475.6L1607.7 1473.2M1532.2 1487.9L1544.8 1486.1M1551.4 1485.2L1570 1482.6M1522.5 1493.3L1536.3 1491.3M1553.7 1488.9L1559.9 1488M1573.4 1486.1L1584.8 1484.5M1584.8 1484.5L1591 1483.6M1591 1483.6L1607.7 1481.3M1607.7 1481.3L1614.6 1480.3M1634 1477.6L1634.2 1477.6M1589.7 1487.9L1605.6 1485.6M1570.5 1494.6L1584.1 1492.7M2109 1248.8L2109.3 1250.5M2102.1 1228.2L2104.2 1243.4M2108.1 1270.7L2108.5 1273.8M2102.5 1259.8L2104.7 1275.5M2101.1 1278.7L2104.1 1300.1M2102.2 1344L2104.3 1358.7M2086.4 1260.1L2089.1 1279M2098.5 1346.2L2100 1356.9M2086 1286L2088.8 1306.2M2072.5 1218.6L2073.4 1224.8M2089 1335.8L2090.7 1348.4M2090.7 1348.4L2092.3 1359.3M2084.4 1332.1L2085.7 1341.7M2090.4 1403.8L2092.5 1418.8M2067.1 1266.3L2068.6 1277M2085.9 1400.2L2087.4 1410.9M2060.6 1249.3L2062.5 1262.8M2062.5 1262.8L2064.5 1277M2077.1 1366.4L2079.5 1383.3M2082.7 1406.6L2084.7 1420.4M2088.3 1446L2088.3 1446.3M2052.8 1222.3L2055.2 1239.2M2055.2 1239.2L2058 1259.4M2073.9 1372.1L2076.5 1390.6M2077.8 1428.6L2080.2 1445.8M2061.3 1340.3L2062.7 1350.3M2064.7 1364.1L2067 1381.1M2073.6 1427.5L2076.2 1446.1M2045.3 1254.8L2047.8 1273M2061.7 1371.9L2062.9 1380M2070.8 1436.6L2072.1 1446.1M2046.3 1290.9L2048.6 1307.1M2048.6 1307.1L2050.9 1323.8M2053.7 1343.8L2055.2 1354.4M2065.6 1428.4L2066.6 1435.1M2069 1452.6L2072 1473.7M2033.1 1226L2036.2 1247.7M2036.2 1247.7L2037.3 1256M2047.1 1325.7L2050.2 1347.2M2036.6 1279.7L2038.8 1295.1M2054.3 1405.4L2056.1 1417.9M2063.7 1472.3L2064.8 1480.1M2043.7 1359L2045.6 1372.1M2051.3 1413.1L2052.3 1419.6M2023.4 1242.8L2024.5 1250.7M2033.2 1312.4L2036 1332.7M2039 1354.1L2040.6 1365.2M2043.7 1387.5L2045.7 1401.7M2049 1425.3L2051.4 1442.4M2043.4 1413.8L2045.4 1427.9M2017.7 1260.1L2019.5 1273M2029 1340.3L2030.3 1349.8M2038.7 1409.4L2039.7 1416.7M2042.7 1437.7L2045.4 1456.8M2014.6 1266.3L2015.6 1273.5M2018.2 1292.5L2019.3 1299.8M2028.7 1366.7L2031 1383.6M2042.6 1466.1L2044.6 1480.1M2038.2 1463.4L2039.7 1474.3M2030 1433.6L2032.5 1451.5M2006.4 1294.2L2007.4 1301.9M2020.4 1394.4L2022.7 1410.8M2032.5 1479.9L2032.5 1480.1M2005.4 1315.8L2006.4 1323.1M2008.6 1338.7L2009.7 1346.4M2009.7 1346.4L2012.3 1364.9M2017.6 1403.2L2020.2 1421.2M2024.9 1455L2027.8 1475.8M2003.6 1331.7L2005 1342.2M2022.8 1468.8L2024.4 1480.1M1997.1 1372.2L1999.5 1389.1M1997.6 1404.5L1998.9 1413.4M2003.7 1447.9L2005.9 1463.6M1985.9 1407.4L1986.8 1414M1986.8 1414L1988.8 1427.8M1988.8 1427.8L1989.9 1436M1990.3 1467.5L1992.1 1480.1M1981.6 1433.8L1984 1451.2M1979.9 1479.7L1980 1480.1M1975 1473.5L1975.9 1480.1" stroke="#ff5a00" stroke-width="2" stroke-dasharray="2 1.5"/><path d="M1235.3 1010.2L1262.7 1005.9M1262.7 1005.9L1276.9 1003.7M1276.9 1003.7L1285 1002.4M1235.3 1066.1L1269.4 1061.3M1269.4 1061.3L1280.9 1059.8M1235.3 1084.7L1253.9 1077M1192.8 1326.1L1190.2 1333.2M1188.2 1330L1187.1 1333.1M1197 1297.2L1193.9 1305.6M1193.8 1297.2L1187.6 1314.2M1184.2 1323.4L1180.8 1332.9M1196.9 1279.8L1193.9 1288.1M1193.9 1288.1L1190.9 1296.2M1184.9 1312.8L1182.9 1318.2M1182.9 1318.2L1177.9 1332M1186.6 1290.7L1182.4 1302.1M1175.9 1319.8L1171.5 1332M1171.5 1332L1171.3 1332.6M1191.8 1267.4L1185.7 1284.3M1185.7 1284.3L1179.7 1300.8M1179.7 1300.8L1177.2 1307.6M1173.6 1317.4L1169.6 1328.4M1169.6 1328.4L1168.1 1332.5M1191.2 1260.3L1188.7 1267.1M1188.7 1267.1L1184.4 1279.2M1184.4 1279.2L1180.9 1288.7M1180.9 1288.7L1178.2 1296.2M1178.2 1296.2L1175.5 1303.4M1167.2 1326.2L1165 1332.4M1186.7 1263.9L1180.9 1280M1164.7 1324.3L1161.8 1332.3M1192.5 1239.3L1186.2 1256.7M1186.2 1256.7L1181.4 1269.7M1181.4 1269.7L1175.4 1286.3M1175.4 1286.3L1169.1 1303.5M1164.8 1315.4L1159.3 1330.5M1191.1 1234.5L1185.4 1250M1185.4 1250L1183.3 1255.8M1161 1317L1157.9 1325.6M1189.6 1229.6L1185 1242.2M1177.3 1263.6L1174.2 1271.9M1174.2 1271.9L1169.8 1284.2M1169.8 1284.2L1165.5 1295.8M1159.7 1311.8L1155.2 1324.3M1168.9 1277.8L1166.8 1283.5M1150.4 1328.6L1149.2 1332M1181 1235.8L1177.2 1246.3M1177.2 1246.3L1170.8 1263.8M1170.8 1263.8L1168.8 1269.3M1168.8 1269.3L1162.8 1285.8M1155.6 1305.5L1152.2 1314.8M1146.4 1330.8L1146 1331.9M1178.1 1235L1174.2 1245.7M1161.4 1280.8L1157 1293M1149.2 1314.2L1144.5 1327.4M1172.4 1241.7L1167.4 1255.7M1163.3 1266.7L1160.7 1273.9M1160.7 1273.9L1158.6 1279.6M1150 1303.3L1147.8 1309.4M1147.8 1309.4L1143.1 1322.2M1143.1 1322.2L1139.7 1331.7M1175.9 1223.6L1169.7 1240.6M1165.2 1253L1162.8 1259.3M1162.8 1259.3L1158.4 1271.6M1158.4 1271.6L1155.7 1279M1137.8 1328.2L1136.5 1331.6M1181 1200.8L1177.2 1211M1168 1236.3L1162.7 1251M1144.2 1301.7L1140.4 1312.2M1137.5 1320.3L1135 1327.1M1135 1327.1L1133.4 1331.5M1172.8 1214.4L1167 1230.3M1161.3 1246L1155.7 1261.3M1150.8 1274.8L1148.6 1280.8M1146.1 1287.8L1140.9 1301.9M1178.1 1191.2L1172.2 1207.2M1150.6 1266.7L1147.7 1274.7M1144.7 1282.8L1139.5 1297.1M1133.8 1312.9L1127.2 1330.8M1173.2 1195.9L1167.4 1211.7M1165.6 1216.7L1161.7 1227.3M1161.7 1227.3L1158.3 1236.7M1158.3 1236.7L1152.3 1253.3M1146.1 1270.2L1143.8 1276.6M1143.8 1276.6L1137.9 1292.9M1137.9 1292.9L1131.2 1311.1M1170.9 1193.4L1168.2 1200.8M1168.2 1200.8L1163.8 1212.9M1157.2 1230.9L1154.2 1239.2M1145.3 1263.6L1139 1280.9M1126.9 1314.2L1120.7 1331.1M1167 1195.2L1161.8 1209.5M1156.2 1224.8L1150.8 1239.8M1141.1 1266.3L1136.5 1279.2M1136.5 1279.2L1130.9 1294.4M1167.7 1184.5L1162.4 1199.2M1159.8 1206.2L1154.1 1222.1M1149.7 1234L1147.2 1241M1147.2 1241L1143.8 1250.1M1140.2 1260.2L1133.5 1278.5M1133.5 1278.5L1127 1296.5M1127 1296.5L1123 1307.4M1168.4 1173.8L1162.7 1189.5M1157.1 1204.8L1152 1219M1144 1241L1140.9 1249.3M1140.9 1249.3L1135 1265.7M1135 1265.7L1128.5 1283.6M1165.5 1173.1L1160 1188.3M1160 1188.3L1154.1 1204.4M1142.8 1235.5L1140.4 1242.1M1136.6 1252.6L1131.4 1266.7M1126.8 1279.5L1121 1295.3M1156.3 1189.6L1151 1204.2M1148.9 1209.8L1145.8 1218.4M1137.8 1240.4L1135.7 1246.1M1135.7 1246.1L1134 1250.9M1134 1250.9L1130.9 1259.4M1130.9 1259.4L1126.3 1272M1126.3 1272L1120.4 1288.3M1120.4 1288.3L1115.4 1301.9M1159.6 1171.8L1157.7 1176.9M1136 1236.5L1133.9 1242.2M1129.9 1253.3L1125.9 1264.4M1125.9 1264.4L1122.1 1274.8M1122.1 1274.8L1116.6 1289.9M1116.6 1289.9L1113.9 1297.4M1156.6 1171.2L1154.6 1176.7M1148.4 1193.6L1145.4 1202M1140.4 1215.6L1137.2 1224.7M1133.6 1234.4L1127.8 1250.4M1121.4 1267.9L1115 1285.5M1115 1285.5L1109.1 1301.8M1109.1 1301.8L1104.5 1314.4M1143.2 1199.1L1140.8 1205.7M1140.8 1205.7L1136.1 1218.7M1136.1 1218.7L1130.2 1235.1M1128.2 1240.4L1123.8 1252.6M1118.9 1266.1L1114.7 1277.6M1108 1295.9L1105.7 1302.3M1097 1326.2L1095.5 1330.4M1150.7 1169.9L1145.5 1184M1145.5 1184L1140.5 1197.9M1138.1 1204.6L1133.3 1217.7M1133.3 1217.7L1126.5 1236.3M1120.8 1252.1L1115.2 1267.3M1115.2 1267.3L1108.5 1285.8M1098.7 1312.6L1095.7 1321M1142.4 1183.9L1139.9 1190.9M1116.1 1256.1L1112.9 1264.9M1107.4 1280.1L1101.5 1296.2M1101.5 1296.2L1096.5 1310.1M1094.2 1316.3L1089.7 1328.7M1426.8 1425.9L1437.2 1424.5M1437.2 1424.5L1451.2 1422.5M1508.1 1414.5L1524.3 1412.2M1555 1407.9L1574.7 1405.1M1574.7 1405.1L1583.3 1403.9M1583.3 1403.9L1591.8 1402.7M1605.8 1400.8L1614.6 1399.5M1429.6 1429.6L1440.1 1428.1M1468.3 1424.1L1486.9 1421.5M1493.7 1420.6L1504.2 1419.1M1504.2 1419.1L1518.2 1417.1M1534.6 1414.8L1550.9 1412.5M1558.9 1411.4L1569.4 1409.9M1589.6 1407.1L1596.9 1406.1M1432.4 1433.2L1443.7 1431.6M1486.1 1425.7L1495.6 1424.3M1495.6 1424.3L1508.5 1422.5M1508.5 1422.5L1517.3 1421.3M1554.5 1416.1L1567.7 1414.2M1583.4 1412L1593.6 1410.6M1593.6 1410.6L1605.5 1408.9M1605.5 1408.9L1619.4 1406.9M1619.4 1406.9L1622.4 1406.5M1491.9 1428.9L1505 1427.1M1535.3 1422.8L1545.8 1421.3M1446.1 1439.4L1456.2 1438M1487.7 1433.5L1496.4 1432.3M1496.4 1432.3L1511.8 1430.2M1511.8 1430.2L1518.5 1429.2M1518.5 1429.2L1531.6 1427.4M1537.2 1426.6L1555.1 1424.1M1440.9 1444.1L1459.5 1441.5M1475.9 1439.2L1487.3 1437.6M1505.2 1435.1L1522 1432.7M1566.8 1426.5L1583.9 1424M1583.9 1424L1590.5 1423.1M1590.5 1423.1L1598.3 1422M1606.4 1420.9L1616.9 1419.4M1500.3 1439.8L1510.7 1438.4M1510.7 1438.4L1527.3 1436M1539 1434.4L1548.9 1433M1590.6 1427.2L1609.9 1424.4M1446.6 1451.4L1456.8 1450M1456.8 1450L1470 1448.1M1470 1448.1L1479.3 1446.8M1509.7 1442.6L1522.4 1440.8M1522.4 1440.8L1530.1 1439.7M1530.1 1439.7L1539.2 1438.4M1552.7 1436.5L1564.4 1434.9M1564.4 1434.9L1581.1 1432.5M1594.2 1430.7L1604.7 1429.2M1604.7 1429.2L1624.3 1426.5M1624.3 1426.5L1627.3 1426M1460.8 1453.5L1480.2 1450.7M1480.2 1450.7L1488.4 1449.6M1509 1446.7L1522.7 1444.8M1534.3 1443.1L1539.2 1442.4M1624.7 1430.4L1628.2 1429.9M1452.3 1458.7L1459.9 1457.6M1459.9 1457.6L1471.2 1456M1484.7 1454.2L1500.2 1452M1522.4 1448.9L1541.1 1446.2M1549.9 1445L1566.2 1442.7M1586.2 1439.9L1596.9 1438.4M1596.9 1438.4L1615.1 1435.8M1615.1 1435.8L1624.3 1434.5M1455.1 1462.4L1467.9 1460.5M1497 1456.5L1514.9 1453.9M1514.9 1453.9L1524.5 1452.6M1532.7 1451.4L1547.5 1449.4M1590.7 1443.3L1601.3 1441.8M1494.8 1460.8L1511.6 1458.5M1511.6 1458.5L1526.8 1456.3M1566.8 1450.7L1578.4 1449.1M1578.4 1449.1L1586.9 1447.9M1586.9 1447.9L1601.6 1445.8M1468.6 1468.5L1485.5 1466.2M1485.5 1466.2L1499.2 1464.2M1499.2 1464.2L1515.2 1462M1515.2 1462L1528.6 1460.1M1610.4 1448.6L1616.7 1447.7M1514.6 1466.1L1528 1464.2M1574.9 1457.6L1593.9 1455M1603 1453.7L1614.3 1452.1M1466.4 1476.9L1481.2 1474.8M1542 1466.3L1550.2 1465.1M1550.2 1465.1L1567 1462.8M1567 1462.8L1577.7 1461.3M1577.7 1461.3L1592.9 1459.1M1614.3 1456.1L1629.9 1453.9M1629.9 1453.9L1634.1 1453.4M1472 1480.2L1486.5 1478.1M1486.5 1478.1L1494 1477.1M1508.8 1475L1519.8 1473.5M1553.4 1468.7L1568.4 1466.6M1568.4 1466.6L1584 1464.4M1584 1464.4L1597.3 1462.6M1606.7 1461.2L1622.1 1459.1M1490.2 1481.7L1505.5 1479.5M1585.3 1468.3L1591.8 1467.4M1591.8 1467.4L1607.2 1465.2M1607.2 1465.2L1625.1 1462.7M1492.2 1485.4L1500.5 1484.2M1500.5 1484.2L1512.3 1482.6M1512.3 1482.6L1521.8 1481.3M1539.7 1478.7L1556.7 1476.3M1593.2 1471.2L1607.7 1469.2M1526.8 1484.6L1533.1 1483.7M1547.3 1481.7L1560.1 1479.9M1560.1 1479.9L1579.1 1477.2M1607.7 1473.2L1613.1 1472.5M1613.1 1472.5L1627.5 1470.4M1627.5 1470.4L1635 1469.4M1512.4 1490.7L1518.6 1489.8M1518.6 1489.8L1532.2 1487.9M1544.8 1486.1L1551.4 1485.2M1570 1482.6L1577.8 1481.5M1609.7 1477L1621.4 1475.3M1630.7 1474L1634.6 1473.5M1536.3 1491.3L1548.7 1489.6M1620.1 1479.6L1626.6 1478.6M1545.9 1494L1551.8 1493.2M1574.1 1490.1L1589.7 1487.9M1619.9 1483.6L1633.8 1481.7M1595.2 1491.1L1610.8 1488.9M1610.8 1488.9L1625.9 1486.8M1564.2 1499.5L1570.6 1498.6M1590.2 1495.9L1595.2 1495.2M1595.2 1495.2L1603.3 1494M2107.9 1212L2110 1227.2M2107.9 1240.5L2109 1248.8M2100 1213.5L2102.1 1228.2M2107.1 1263.8L2108.1 1270.7M2097.3 1222.7L2098.8 1233.4M2104.7 1275.5L2107.4 1294.6M2095.5 1238.6L2097.3 1251.1M2106.8 1319L2107 1320.4M2093.4 1252.6L2094.5 1260.5M2099.2 1293.7L2100.9 1305.8M2105.8 1340.6L2106.2 1343.7M2092.8 1276.8L2094.7 1290.7M2094.7 1290.7L2096.2 1301.4M2100.9 1363.6L2103.9 1384.9M2103.9 1384.9L2104.7 1390.3M2079.1 1236.6L2080.5 1246.9M2082.4 1260.6L2083.3 1266.8M2083.3 1266.8L2086 1286M2088.8 1306.2L2091.3 1323.7M2092.2 1330.4L2095.1 1350.6M2078.2 1259.4L2080.4 1274.6M2084.6 1304.6L2086.8 1320.6M2070.9 1235.9L2073.2 1252.6M2073.2 1252.6L2075.5 1268.9M2075.5 1268.9L2076.7 1277.4M2076.7 1277.4L2078.7 1291.7M2085.7 1341.7L2087.1 1351.3M2091.6 1383.4L2093.9 1399.4M2093.9 1399.4L2096.6 1419M2070.3 1260.4L2072.2 1273.8M2072.2 1273.8L2073.3 1282M2073.3 1282L2074.9 1293M2085 1365L2087.1 1380.1M2088 1386.5L2090.4 1403.8M2092.5 1418.8L2094.1 1429.9M2065.2 1252.8L2067.1 1266.3M2072.4 1304.2L2074.9 1321.7M2087.4 1410.9L2090 1429.7M2072.8 1335.6L2074.5 1347.8M2081.1 1394.7L2082.7 1406.6M2087.3 1439.1L2088.3 1446M2062.2 1289.4L2063.9 1301.2M2063.9 1301.2L2065.3 1311M2069.5 1341.1L2071 1351.8M2078.9 1407.9L2080.4 1418.5M2080.4 1418.5L2083.4 1439.9M2065.9 1344.5L2068.5 1362.5M2069.7 1370.9L2070.6 1377.4M2080.2 1445.8L2081.5 1455.3M2053.8 1286.5L2055.3 1297.9M2067 1381.1L2069.2 1396.6M2041 1224.5L2043.1 1239.4M2047.8 1273L2049.9 1287.5M2049.9 1287.5L2052 1303.1M2056.2 1332.7L2058 1345.2M2064.4 1390.9L2067.3 1411.9M2069 1423.8L2070.8 1436.6M2037.1 1225.3L2038.3 1234M2063.3 1412.2L2064.6 1421M2030.2 1233.6L2032.5 1250.1M2038.8 1295.1L2040.2 1304.8M2040.2 1304.8L2042.2 1319.4M2050.8 1380.1L2052.3 1390.8M2052.3 1390.8L2054.3 1405.4M2058.2 1433.2L2059.6 1443.2M2062 1459.9L2063.7 1472.3M2034.1 1290.7L2036.5 1307.2M2049.2 1397.8L2050.4 1406.4M2052.3 1419.6L2055.1 1440.1M2055.1 1440.1L2057.5 1457.2M2024.5 1250.7L2026.1 1262M2028.7 1280.8L2029.6 1286.9M2031.6 1301.4L2033.2 1312.4M2041.6 1372.5L2043.7 1387.5M2045.7 1401.7L2048 1418.3M2054.7 1465.6L2055.7 1472.9M2023 1269.1L2024.1 1276.4M2024.1 1276.4L2026.3 1292.1M2033.2 1341.2L2034.1 1347.8M2034.1 1347.8L2036.2 1363.1M2039.2 1384.3L2040.7 1394.5M2046.4 1435.1L2047.2 1441.1M2013.5 1229.7L2016.1 1248.2M2021.7 1288.6L2024.7 1309.6M2032.2 1362.9L2034.7 1380.8M2025.8 1346.1L2027.3 1356.8M2038.6 1437.5L2041.3 1456.4M2008.5 1251.8L2010.7 1267.4M2018.6 1323.5L2021.2 1342M2035.2 1441.9L2036.6 1452M2036.6 1452L2038.2 1463.4M2006.6 1267L2009.3 1286.4M2012.9 1311.7L2015.7 1332M2016.8 1339.4L2017.8 1346.7M2019.1 1356L2022 1376.9M2022 1376.9L2023 1383.8M2025.7 1403L2027.6 1416.6M2032.5 1451.5L2034.3 1464.3M2004.7 1282.2L2006.4 1294.2M2007.4 1301.9L2010.1 1320.5M2010.1 1320.5L2012 1334M2018.1 1377.5L2020.4 1394.4M2026.1 1434.5L2028.4 1450.8M2029.7 1460.2L2032.5 1479.9M2012.3 1364.9L2014.7 1382.1M2023.1 1441.7L2024.9 1455M2000.9 1312.6L2003.6 1331.7M2009.7 1375.5L2011.2 1386.3M2011.2 1386.3L2013.4 1401.8M2021.3 1458.1L2022.8 1468.8M1999 1327.8L1999.9 1334.6M2008.9 1398.8L2010.3 1408.3M2010.3 1408.3L2011.6 1418M2017.3 1458.6L2018.5 1466.8M2000.6 1368.5L2003.5 1388.7M2005.3 1401.3L2007.1 1414.6M2013.4 1459.4L2015.9 1476.9M1999.5 1389.1L2001.3 1402.2M2001.3 1402.2L2002.5 1410.6M2002.5 1410.6L2005.1 1429.1M1992.5 1367.7L1993.3 1374M1999.9 1449.8L2002.1 1465.2M2002.1 1465.2L2004.2 1480.1M1987.9 1478.7L1988.1 1480.1" stroke="#ff2000" stroke-width="2" stroke-dasharray="2 1.5"/><path d="M1269.6 1018.8L1285 1016.4M1235.3 1038.1L1268.1 1032.3M1268.1 1032.3L1278.8 1030.4M1195.4 1248.9L1191.2 1260.3M1175.5 1303.4L1172.2 1312.7M1172.2 1312.7L1170 1318.7M1170 1318.7L1167.2 1326.2M1168.1 1315L1164.7 1324.3M1159.3 1330.5L1158.6 1332.3M1185 1242.2L1183.1 1247.6M1188.2 1224.8L1184.8 1234.1M1184.8 1234.1L1181.6 1242.9M1166.8 1283.5L1160.4 1301.2M1156.1 1313L1152.9 1321.8M1151.4 1308.2L1149.2 1314.2M1182.4 1205.6L1175.9 1223.6M1155.7 1279L1153.3 1285.5M1143 1313.8L1137.8 1328.2M1170.9 1228.3L1168 1236.3M1156 1269.4L1150.1 1285.6M1155.7 1261.3L1150.8 1274.8M1135 1318.3L1130.2 1331.4M1172.2 1207.2L1166.3 1223.5M1156.3 1251L1150.6 1266.7M1127.2 1330.8L1127.1 1331.3M1176.6 1186.4L1173.2 1195.9M1167.4 1211.7L1165.6 1216.7M1150.1 1259.2L1146.1 1270.2M1163.8 1212.9L1157.2 1230.9M1173.7 1176.8L1167 1195.2M1162.4 1199.2L1159.8 1206.2M1128.5 1283.6L1126.4 1289.3M1126.4 1289.3L1121.2 1303.6M1140.4 1242.1L1136.6 1252.6M1131.4 1266.7L1126.8 1279.5M1151 1204.2L1148.9 1209.8M1115.4 1301.9L1110.8 1314.6M1110.8 1314.6L1108 1322.2M1108 1322.2L1104.9 1330.7M1151 1195.5L1146.2 1208.4M1127.8 1250.4L1125.5 1256.6M1146.9 1189L1143.2 1199.1M1147.8 1169.2L1142.4 1183.9M1134.1 1206.7L1127.7 1224.3M1123.1 1236.8L1118.2 1250.3M1112.9 1264.9L1107.4 1280.1M1089.7 1328.7L1089.2 1330.2M1451.2 1422.5L1466 1420.4M1619.8 1398.8L1620.4 1398.7M1578.3 1408.7L1589.6 1407.1M1479 1426.7L1486.1 1425.7M1517.1 1425.4L1535.3 1422.8M1588.3 1415.4L1604.8 1413M1610.6 1412.2L1623.4 1410.4M1474.3 1435.4L1487.7 1433.5M1582.2 1420.3L1588 1419.4M1459.5 1441.5L1475.9 1439.2M1555.3 1428.1L1566.8 1426.5M1449.1 1447L1462.1 1445.2M1527.3 1436L1539 1434.4M1580.7 1428.5L1590.6 1427.2M1502.6 1447.6L1509 1446.7M1615.2 1431.8L1624.7 1430.4M1524.5 1452.6L1532.7 1451.4M1476.4 1463.4L1494.8 1460.8M1526.8 1456.3L1534.6 1455.2M1460.8 1469.6L1468.6 1468.5M1563.5 1455.2L1582.8 1452.5M1481.2 1474.8L1496.2 1472.7M1496.2 1472.7L1508.8 1471M1523 1469L1530.2 1468M1592.9 1459.1L1603.6 1457.6M1603.6 1457.6L1614.3 1456.1M1622.1 1459.1L1635.1 1457.3M1607.7 1469.2L1623.1 1467M1502.3 1488L1521.8 1485.3M1621.4 1475.3L1630.7 1474M1548.7 1489.6L1553.7 1488.9M1551.8 1493.2L1565.6 1491.2M1565.6 1491.2L1574.1 1490.1M1584.1 1492.7L1595.2 1491.1" stroke="#ff9400" stroke-width="2" stroke-dasharray="2 1.5"/><path d="M1235.3 1030.4L1270 1024.6M2104 1212.7L2105.7 1225.2M2105.7 1225.2L2107.9 1240.5M2104.2 1243.4L2107.1 1263.8M2096.2 1301.4L2097.9 1313.3M2104.3 1358.7L2105.5 1367M2082.7 1233.9L2084.1 1243.9M2100 1356.9L2100.9 1363.6M2095.1 1350.6L2097.3 1366.6M2102.8 1405.4L2102.8 1405.4M2080.4 1274.6L2081.7 1284.1M2081.7 1284.1L2084.6 1304.6M2089 1365.2L2091.6 1383.4M2077.6 1312.5L2080.3 1331.9M2080.3 1331.9L2082.4 1346.5M2071.5 1297.8L2072.4 1304.2M2078.4 1346.8L2080.8 1363.7M2069.4 1311.4L2070.3 1317.7M2079.5 1383.3L2081.1 1394.7M2085.8 1428L2087.3 1439.1M2059.3 1268.7L2062.2 1289.4M2064.4 1333.5L2065.9 1344.5M2074.3 1403.7L2075.6 1413.3M2046.2 1232.7L2049.2 1253.9M2052.1 1274.9L2053.8 1286.5M2074.5 1462.7L2075.4 1469.3M2038.3 1234L2040.6 1250.7M2040.6 1250.7L2043.3 1270M2066.6 1435.1L2069 1452.6M2072 1473.7L2072.9 1480.1M2057.6 1400.1L2059.6 1414.2M2059.6 1414.2L2060.9 1423.8M2063.3 1440.7L2065.9 1459.3M2032.5 1250.1L2035.3 1270.1M2044.6 1336.4L2046.3 1348.7M2046.3 1348.7L2049.2 1368.9M2025.3 1227.5L2028 1246.8M2031.2 1269.9L2034.1 1290.7M2036.5 1307.2L2038.6 1322.4M2038.6 1322.4L2040.8 1337.7M2055.7 1472.9L2056.7 1480.1M2031.4 1328.7L2033.2 1341.2M2040.7 1394.5L2043.4 1413.8M2045.4 1427.9L2046.4 1435.1M2024.7 1309.6L2026.2 1320.6M2039.7 1416.7L2042.7 1437.7M2012.3 1250.2L2014.6 1266.3M2015.6 1273.5L2018.2 1292.5M2019.3 1299.8L2021.7 1317.1M2013.4 1287.1L2015.2 1299.5M2025.6 1374L2026.7 1381.3M2031.1 1412.7L2032.8 1424.9M2032.8 1424.9L2035.2 1441.9M2015.7 1332L2016.8 1339.4M2034.3 1464.3L2035.5 1472.7M2020.2 1421.2L2023.1 1441.7M2015.3 1415.5L2018.1 1435.3M1999.9 1334.6L2002.6 1353.6M2006.5 1439L2008.9 1456.3M2007.5 1475.1L2008.3 1480.1M1992.7 1397.9L1994.5 1411M1996.4 1424.7L1997.9 1435.1M1990.1 1408.5L1992.2 1423.5M1996.5 1453.9L1997.5 1461.3M1999.9 1478.1L2000.2 1480.1M1991 1443.7L1991.9 1450.2M1985.5 1432.9L1987.4 1446.9M1985.3 1460.3L1987.9 1478.7M1981.9 1465.2L1983.3 1475.3M1977.2 1460.3L1979.9 1479.7" stroke="#ffbc00" stroke-width="2" stroke-dasharray="2 1.5"/><path d="M1281.9 991.6L1280.3 1014.5M1280.3 1014.5L1279.6 1025.1M1279.6 1025.1L1278.8 1038.1M1427.8 1326.5L1431.2 1339.1M1427.7 1341.4L1430.2 1350.8M1433.5 1363.2L1435.1 1368.9M1422.5 1337.5L1425 1346.7M1420.7 1346.3L1422.9 1354.4" stroke="#ff5a00" stroke-width="2" stroke-dasharray="2 1"/><path d="M1477.7 1135.7L1484.1 1131.9M1484.1 1131.9L1492.1 1127.3M1496.3 1124.9L1502.2 1121.5M1476.3 1138.8L1482.9 1135M1505.1 1122.2L1508.2 1120.3M1508.2 1120.3L1509.3 1119.7M1494.9 1130.4L1497.5 1128.8M1495.9 1132.1L1500.5 1129.4M1500.5 1129.4L1506.9 1125.7M1506.9 1125.7L1510.7 1123.5M1475.9 1145.9L1483.1 1141.8M1490 1137.8L1497.9 1133.2M1504 1129.7L1510.1 1126.2M1477.4 1147.4L1482.7 1144.3M1487.1 1141.8L1492 1138.9M1509.6 1128.8L1512.1 1127.4M1498.5 1137.5L1502.3 1135.3M1505 1133.8L1510.6 1130.5M1495.1 1141.8L1500.9 1138.5M1500.9 1138.5L1505.8 1135.6M1505.8 1135.6L1510.5 1132.9M1512.4 1134.1L1512.6 1134M1535.3 1117.7L1544.5 1116.4M1558 1116.5L1563.2 1115.8M1546.8 1120.1L1550.6 1119.6M1554.3 1119L1560.9 1118.1M1528.4 1124.7L1536.7 1123.5M1542.1 1122.8L1545.8 1122.3M1551.2 1121.5L1554.5 1121M1554.5 1121L1564.1 1119.7M1564.1 1119.7L1568.8 1119M1568.8 1119L1569.1 1119M1529 1126.6L1537.6 1125.4M1537.6 1125.4L1547.2 1124.1M1547.2 1124.1L1551.9 1123.4M1551.9 1123.4L1556.4 1122.8M1564.2 1123.7L1570.2 1122.9M1570.2 1122.9L1571 1122.8M1543.4 1130.7L1550.1 1129.7M1570.9 1128.8L1571 1128.8M1665.7 1051.1L1668.4 1057.6M1669 1065L1673.5 1076.3M1673.5 1076.3L1675.7 1081.6M1675.7 1081.6L1678.9 1089.6M1660.1 1048.9L1664.4 1059.6M1684.3 1108.8L1686 1113M1664.9 1066.8L1667.1 1072M1675.9 1094L1679.5 1102.8M1679.5 1102.8L1681.9 1108.7M1681.9 1108.7L1683.8 1113.5" stroke="#ff2000" stroke-width="2" stroke-dasharray="2 0.5"/><path d="M1492.1 1127.3L1496.3 1124.9M1502.2 1121.5L1506.3 1119.1M1506.3 1119.1L1508.6 1117.8M1482.9 1135L1491.2 1130.1M1496.7 1127L1500 1125.1M1500 1125.1L1505.1 1122.2M1474.9 1141.9L1478.8 1139.7M1478.8 1139.7L1484.7 1136.2M1474.5 1144.5L1477.5 1142.7M1477.5 1142.7L1480.4 1141M1510.1 1126.2L1511.4 1125.5M1492 1138.9L1499.8 1134.5M1510.5 1132.9L1512.9 1131.5M1508.1 1141.2L1512.2 1138.8M1544.5 1116.4L1554.3 1115M1554.3 1115L1558.3 1114.4M1527.2 1120.8L1534.5 1119.8M1544.4 1118.4L1550.2 1117.6M1550.2 1117.6L1558 1116.5M1527.8 1122.8L1532.1 1122.2M1532.1 1122.2L1536.9 1121.5M1536.9 1121.5L1546.8 1120.1M1545.8 1122.3L1551.2 1121.5M1566.9 1121.3L1571 1120.7M1529.6 1128.6L1533.3 1128M1552.1 1125.4L1555.3 1125M1542.8 1128.7L1549.3 1127.8M1553.1 1127.3L1562.3 1126M1567 1125.3L1571 1124.8M1550.1 1129.7L1555.8 1128.9M1560.9 1128.2L1565.1 1127.6M1565.1 1127.6L1571 1126.8M1558.2 1130.6L1563.7 1129.8M1660.7 1044.6L1664.1 1053.1M1664.1 1053.1L1667 1060M1672.9 1080.6L1676.4 1089.4M1676.4 1089.4L1680.4 1099.1M1661.1 1057.1L1664.9 1066.8M1667 1312L1667.3 1327M1667.3 1327L1667.8 1349.1M1668 1361.4L1668.4 1380.8M1668.7 1392.9L1668.9 1403.8M1668.9 1403.8L1669.4 1425.3M1669.9 1448.1L1670 1455M1700.5 1329.4L1700.8 1339.7M1700.8 1339.7L1701.1 1352.3M1702.6 1417.5L1703 1437M1744.5 1324.5L1744.2 1337.2M1744.2 1337.2L1743.9 1348.8M1743.9 1348.8L1743.3 1377.4M1743.3 1377.4L1742.7 1404M1742.7 1404L1742.5 1415.2M1742.5 1415.2L1742 1437M1793 1290L1792.6 1306.1M1792.6 1306.1L1792.3 1322.8M1791.7 1349.4L1791.2 1370.9M1791.2 1370.9L1791 1383.8M1791 1383.8L1790.7 1394.1M1790.7 1394.1L1790.3 1413.7M1790.3 1413.7L1790 1426.2M1996 1404L1999.8 1381M1999.8 1381L2006.3 1341.6M2006.3 1341.6L2010.1 1318.6M2010.1 1318.6L2015 1288.8M2015 1288.8L2017 1277" stroke="#f4e400" stroke-width="2" stroke-dasharray="2 0.5"/><path d="M1491.2 1130.1L1496.7 1127M1484.7 1136.2L1489.2 1133.7M1505.9 1124L1510 1121.6M1480.4 1141L1487.5 1136.9M1487.5 1136.9L1495.9 1132.1M1483.1 1141.8L1490 1137.8M1499.8 1134.5L1503.5 1132.3M1503.5 1132.3L1509.6 1128.8M1526.6 1118.9L1535.3 1117.7M1558.3 1114.4L1560.3 1114.2M1534.5 1119.8L1544.4 1118.4M1550.6 1119.6L1554.3 1119M1560.9 1118.1L1566.2 1117.4M1536.7 1123.5L1542.1 1122.8M1556.4 1122.8L1562.7 1121.9M1562.7 1121.9L1566.9 1121.3M1533.3 1128L1539.1 1127.2M1539.1 1127.2L1547.8 1126M1547.8 1126L1552.1 1125.4M1555.3 1125L1559.3 1124.4M1559.3 1124.4L1564.2 1123.7M1549.3 1127.8L1553.1 1127.3M1562.3 1126L1567 1125.3M1555.8 1128.9L1560.9 1128.2M1563.7 1129.8L1567.1 1129.4M1567.1 1129.4L1570.9 1128.8M1662.9 1044L1665.7 1051.1M1668.4 1057.6L1671 1064.2M1667 1060L1669 1065M1678.9 1089.6L1680.8 1094.4M1680.8 1094.4L1683.1 1100M1683.1 1100L1685.3 1105.5M1685.3 1105.5L1687.3 1110.3M1687.3 1110.3L1688.1 1112.5M1664.4 1059.6L1669.6 1072.4M1669.6 1072.4L1672.9 1080.6M1680.4 1099.1L1684.3 1108.8M1656.4 1045.6L1661.1 1057.1M1667.1 1072L1671.3 1082.6M1671.3 1082.6L1675.9 1094M1482 1313L1492 1307M1482 1329L1499 1319.2M1499 1319.2L1519.4 1307.5M1519.4 1307.5L1522 1306M1495 1335L1517.6 1320.7M1517.6 1320.7L1522 1318M1745 1300L1744.5 1324.5" stroke="#ff9400" stroke-width="2" stroke-dasharray="2 0.5"/><path d="M1489.2 1133.7L1494.9 1130.4M1497.5 1128.8L1501.6 1126.5M1482.7 1144.3L1487.1 1141.8M1502.3 1135.3L1505 1133.8M1499.5 1141.6L1504.5 1138.7M1503.8 1141.4L1512.4 1136.4M1175.5 1220.6L1192.4 1246.1" stroke="#bcf000" stroke-width="2" stroke-dasharray="2 0.5"/><path d="M1497.9 1133.2L1504 1129.7M1141.8 1169.7L1147.7 1178.5M1147.7 1178.5L1167.7 1208.8M1167.7 1208.8L1175.5 1220.6M1192.4 1246.1L1196 1251.5M1765 1296L1765.3 1310.2M1621.3 1353.7L1622.3 1375M1623.2 1396.3L1623.9 1411.1M1623.9 1411.1L1625 1435" stroke="#38e800" stroke-width="2" stroke-dasharray="2 0.5"/><path d="M1719.2 1019L1720.2 1029.9M1715.7 1013.5L1716.4 1021M1711.1 994.7L1711.7 1001.4M1716.7 1059.4L1717.3 1065.9M1280.6 1485L1285 1491.6M1262.4 1441.9L1272.5 1458M1210.4 1414L1216.8 1432.6M1225.7 1458.9L1233.1 1480.4M1254.7 1544L1260.1 1559.9M1219.3 1399.6L1231.9 1426.7M1231.9 1426.7L1243 1450.6M1371.6 1385.3L1378.9 1382.7M1408 1372.1L1419.4 1368M1419.4 1368L1426.8 1365.3M1401.5 1378.7L1409.5 1375.8M1387.2 1388.2L1392.5 1386.3M1349.5 1358.1L1351.5 1369.4M1352.5 1375.1L1353.6 1381.4M1353.6 1381.4L1355.8 1394.2M1343.4 1358.1L1345.7 1371.4M1342.4 1369.8L1343.7 1377.2M1421.8 1374.9L1438.3 1372.3M1595.8 1341.5L1596.6 1350.9M1596.6 1350.9L1597 1355M1591.5 1326.4L1592.6 1338.8M1588.9 1331L1590 1344.5M1585 1320.8L1585.6 1328.3M1620.2 1323.7L1621.9 1322.9M1623.4 1331.1L1627.5 1329.1M1623.8 1335.3L1628.1 1333.2M1628.1 1333.2L1636.8 1329.2M1636.8 1329.2L1639.7 1327.9M1639.7 1327.9L1644.4 1325.7M1644.4 1325.7L1647.6 1324.2M1647.6 1324.2L1652.5 1321.9M1614.9 1343.8L1619.4 1341.7M1629.6 1337L1634.6 1334.6M1634.6 1334.6L1643.5 1330.5M1643.5 1330.5L1652.3 1326.4M1615.1 1348.2L1623.9 1344.1M1656.6 1333.2L1659.5 1331.8M1644.6 1343.2L1650.6 1340.4M1624.3 1357.1L1633.3 1352.9M1638.9 1350.3L1647.3 1346.4M1656.2 1342.2L1660.5 1340.2M1652.5 1348.4L1655.4 1347M1655.4 1347L1658.8 1345.4M1626 1374L1632.4 1371M1632.4 1371L1640.6 1367.2M1647 1364.2L1653.7 1361M1658.5 1358.8L1660.6 1357.8M1628.8 1377.1L1633.2 1375M1616.8 1387.1L1623.9 1383.8M1623.9 1383.8L1630.9 1380.5M1630.9 1380.5L1638.6 1376.9M1642 1375.3L1644.9 1374M1617 1391.4L1622.8 1388.7M1622.8 1388.7L1626.8 1386.8M1647.3 1377.3L1653.2 1374.5M1627.4 1395.4L1632.3 1393.1M1642.2 1392.9L1646.4 1390.9M1617.8 1408.7L1622.5 1406.5M1656.3 1390.7L1659.6 1389.2M1658.7 1394L1659.5 1393.7M1625.2 1414.1L1632.2 1410.8M1632.2 1410.8L1640.5 1406.9M1640.5 1406.9L1647.6 1403.6M1626.7 1417.8L1631.7 1415.4M1656.8 1403.8L1659.2 1402.6M1636.5 1426.4L1640.4 1424.6M1653.1 1418.7L1656.2 1417.3M1635.8 1431.2L1641.9 1428.3M1647.6 1425.7L1652 1423.6M1652 1423.6L1655.6 1421.9M1649 1429.5L1654.5 1426.9M1640.4 1437.9L1644.3 1436.1M1649.2 1433.7L1652.2 1432.4M1652.2 1432.4L1658.3 1429.5M1655.4 1439.7L1658 1438.5M1696.9 1307.1L1700.7 1305.4M1698.3 1315.3L1702.3 1313.4M1713 1308.4L1718.9 1305.7M1718.9 1305.7L1726.9 1302M1670.9 1332.5L1679.2 1328.6M1698 1319.9L1705.4 1316.4M1733.8 1303.2L1739.5 1300.5M1728.6 1310L1736.4 1306.3M1750.3 1299.9L1753.2 1298.5M1673.1 1340.3L1680.1 1337M1686.3 1334.1L1692.3 1331.3M1735.2 1311.3L1739.1 1309.5M1739.1 1309.5L1746.4 1306.1M1746.4 1306.1L1754.6 1302.3M1679.5 1341.7L1685.4 1339M1693.9 1335L1700.4 1332M1700.4 1332L1707.2 1328.8M1754.9 1306.5L1760 1304.2M1790.4 1290L1790.6 1289.9M1665.8 1352.5L1669.1 1351M1684.6 1343.8L1693 1339.9M1696.8 1338.1L1700.7 1336.2M1724.7 1325.1L1731.1 1322.1M1744.8 1315.7L1749.6 1313.5M1749.6 1313.5L1757 1310M1770.5 1303.7L1777.8 1300.3M1780.6 1299L1787.3 1295.8M1720.3 1331.5L1727.2 1328.3M1696.5 1347L1701.4 1344.8M1724.4 1334L1732.1 1330.4M1732.1 1330.4L1741.1 1326.2M1750.1 1322.1L1754.7 1319.9M1790.2 1303.4L1796.7 1300.3M1674 1361.9L1682.6 1357.9M1716.2 1342.2L1719.9 1340.5M1768.4 1317.9L1775.4 1314.7M1792.8 1306.5L1796.8 1304.7M1672 1367.3L1678.1 1364.4M1678.1 1364.4L1682.2 1362.5M1690.4 1358.7L1694.5 1356.8M1694.5 1356.8L1700.9 1353.8M1721 1344.4L1725.7 1342.2M1762.9 1324.9L1770.7 1321.3M1784.8 1314.7L1792.3 1311.2M1792.3 1311.2L1795.1 1309.9M1757.1 1332L1760.8 1330.3M1697.2 1364.4L1705.6 1360.4M1719.3 1354L1725.1 1351.3M1725.1 1351.3L1730.5 1348.8M1762.9 1333.7L1767.9 1331.4M1688.2 1373L1691 1371.7M1694.2 1370.2L1702.4 1366.4M1718.8 1358.7L1722.5 1357M1747.6 1345.3L1751.1 1343.6M1779.1 1330.6L1786.8 1327M1666.5 1387.5L1672 1384.9M1672 1384.9L1678.3 1382M1678.3 1382L1687.3 1377.8M1706.2 1369L1710.1 1367.2M1748 1349.5L1751.7 1347.8M1775.2 1336.8L1780.8 1334.2M1675 1387.9L1680.6 1385.3M1685.3 1383.2L1688.3 1381.8M1702.7 1375L1711.5 1370.9M1729.8 1362.4L1736 1359.5M1739.1 1358.1L1744.2 1355.7M1754.3 1351L1760.7 1348M1760.7 1348L1763.5 1346.7M1666.7 1396.2L1675.3 1392.2M1684.7 1387.8L1687.7 1386.4M1704.5 1378.6L1707.3 1377.3M1723.8 1369.6L1731.6 1366M1764.1 1350.8L1768 1349M1780.1 1343.4L1788.8 1339.3M1742.4 1365.4L1750.3 1361.7M1791.2 1342.6L1795.9 1340.4M1746 1368.1L1753.5 1364.6M1753.5 1364.6L1761.2 1361M1777.5 1353.4L1786 1349.4M1791.8 1346.7L1795.8 1344.8M1679.7 1403.4L1685.1 1400.9M1746.3 1372.3L1751.9 1369.8M1670.2 1412.2L1674.9 1410.1M1743.1 1378.3L1749.7 1375.2M1762.6 1369.1L1768.1 1366.6M1712.5 1397L1720 1393.4M1720 1393.4L1727.8 1389.8M1759.9 1374.8L1765.1 1372.4M1765.1 1372.4L1771.6 1369.4M1675.4 1418.7L1682.7 1415.3M1682.7 1415.3L1688.6 1412.5M1709.4 1402.8L1714.6 1400.4M1757 1380.6L1765 1376.9M1765 1376.9L1770.1 1374.5M1790.5 1365L1795.4 1362.7M1678.2 1421.8L1682.1 1419.9M1682.1 1419.9L1688.5 1417M1705.7 1408.9L1713.8 1405.2M1738.7 1393.6L1745.3 1390.5M1758 1384.5L1761.4 1383M1770.1 1378.9L1775.2 1376.5M1795.2 1367.2L1795.3 1367.2M1667.4 1431.2L1670.5 1429.8M1678.8 1425.9L1686.2 1422.4M1702.7 1414.8L1711.5 1410.6M1711.5 1410.6L1716.8 1408.2M1716.8 1408.2L1724.5 1404.6M1739.3 1397.7L1743.5 1395.8M1770.7 1383.1L1778.8 1379.3M1795.1 1371.7L1795.2 1371.6M1670.5 1434.2L1677.8 1430.8M1695.5 1422.5L1703.8 1418.7M1717.4 1412.3L1721.7 1410.3M1757.2 1393.8L1760.8 1392.1M1772.5 1386.6L1775.5 1385.2M1679.7 1434.3L1687.8 1430.5M1698.8 1425.4L1707.4 1421.4M1716.3 1417.2L1721.8 1414.7M1727.7 1416.3L1732.2 1414.2M1710.5 1428.8L1715.5 1426.4M1729.9 1419.7L1733.9 1417.9M1733.9 1417.9L1740.5 1414.8M1753.3 1408.8L1756.4 1407.4M1678 1448.3L1683.3 1445.9M1683.3 1445.9L1683.6 1445.7M1709.7 1433.5L1716.8 1430.2M1716.8 1430.2L1725.4 1426.2M1740.5 1419.2L1743.9 1417.6M1799.9 1391.5L1801.2 1390.9M1715.6 1435.2L1721.9 1432.3M1736.7 1425.4L1740.3 1423.7M1764.1 1412.6L1771.6 1409.1M1781 1404.7L1788 1401.5M1743.5 1426.6L1750.9 1423.2M1756.3 1420.7L1760.8 1418.5M1765 1416.6L1771 1413.8M1771 1413.8L1777.3 1410.9M1791.8 1404.1L1795.2 1402.5M1754.4 1425.9L1757.9 1424.3M1741.6 1436.3L1744.4 1435M1778.5 1419.1L1782.9 1417.1M1791.2 1413.2L1797 1410.5M1797 1410.5L1804.9 1406.8M1757.4 1433.4L1764.4 1430.1M1764.4 1430.1L1772.6 1426.3M1772.6 1426.3L1777.5 1424M1789.5 1418.4L1794.4 1416.1M1773.1 1430.5L1779.4 1427.5M1799.6 1418.1L1806.4 1414.9M1806.4 1414.9L1814 1411.4M1670.4 1332.8L1670.9 1358.9M1671.5 1385.2L1671.8 1395.7M1705.6 1414.6L1705.9 1427.5M1705.9 1427.5L1706 1432M1768 1301L1768.6 1324.6M1768.8 1335.9L1769.2 1352.3M1769.2 1352.3L1769.9 1380.2M2003 1015L2004.8 1024.8M2008.9 1048.6L2009.2 1049.9M2005 1043.7L2006 1048.9M2006 1048.9L2006.1 1049.9M1992.1 987.7L1993.2 993.7M1996.5 1029.5L1999.4 1046.4M1990.7 1013.9L1992.8 1025.9M1996.2 1045.4L1997 1049.9M1984.6 996.7L1988 1016.3M2129.2 826.3L2138.5 838.8M2244.1 789.1L2256.5 799.9M2570.2 723.9L2576.4 739.4M2013.5 1056.4L2017.1 1071.8M2019.1 1080.8L2020.2 1085.2M2008.9 1050L2010.6 1057M2010.6 1057L2014.9 1076M2016.8 1084.1L2018.3 1090.5M2018.3 1090.5L2019.8 1096.8M2011.2 1086.4L2013.6 1097.1M2016.8 1110.7L2018.2 1116.9M1999.7 1050L2001.3 1056.7M2006 1090.6L2009.1 1104M2015.8 1133L2018.9 1146.6M2021.8 1159.1L2023.4 1166M1998.7 1072.4L2000.4 1079.9M2004.3 1096.6L2005.9 1103.5M2027.6 1197.6L2029.4 1205.2M2044.8 1272.1L2048.2 1286.8M2002.5 1101.9L2004.2 1109.3M2022.7 1189.8L2026.9 1207.7M2030.9 1225.2L2035.6 1245.6M1991 1065.8L1992.5 1072.3M2021 1195.4L2025.8 1216.4M2029.1 1230.6L2033.8 1250.8M2043.2 1291.9L2044.8 1298.4M1988.1 1066.4L1990.8 1078.1M1994.5 1094.1L1998.6 1111.7M2000.9 1121.7L2004.5 1137.4M2004.5 1137.4L2008.6 1155.2M2015.2 1183.7L2018.6 1198.7M2023.1 1218L2026.4 1232.4M2032.1 1257L2036.6 1276.5M2036.6 1276.5L2039 1287M1996.1 1114.2L2000.1 1131.8M2000.1 1131.8L2005 1152.8M2005 1152.8L2008.5 1168.1M2008.5 1168.1L2012.2 1184.2M2016 1200.7L2017.6 1207.6M2017.6 1207.6L2019.2 1214.3M1981.2 1063L1982.6 1069.1M1982.6 1069.1L1985.4 1081.3M1989.7 1099.8L1991.5 1107.9M1995.9 1126.9L2000.8 1148.3M1982.8 1083.5L1985.5 1095.3M1993 1127.7L1995.7 1139.4M1984.4 1103.9L1989.4 1125.2M1986.1 1124.3L1987 1128.5" stroke="#ffbc00" stroke-width="2" stroke-dasharray="2 1"/><path d="M1710.4 960.5L1729.1 969.8M1729.1 969.8L1726 983.8M1713.5 1261.8L1726.9 1277.1M1726.9 1277.1L1735.3 1286.6" stroke="#00d8c0" stroke-width="2" stroke-dasharray="2 1"/><path d="M1831.6 1038.1L1847.3 1027.6M1847.3 1027.6L1868.8 1013.3M1846.6 1031.3L1863.4 1036.1M1863.4 1036.1L1868.3 1037.5" stroke="#ff9400" stroke-width="2" stroke-dasharray="2 3"/><path d="M1837.8 1031.9L1865.9 1040.4M1865.9 1040.4L1868.8 1041.2M2080.7 676.9L2133.9 672.7M2170.3 669.8L2198.3 667.6M2198.3 667.6L2230.3 665.1M2230.3 665.1L2268.6 662.1M2268.6 662.1L2308.8 658.9M2098.1 671.1L2152.3 666.1M2207.7 661L2249.1 657.2M2249.1 657.2L2284.5 654M2196.5 701.5L2216.1 697.5M2188.2 689.7L2240.5 688.1M2240.5 688.1L2279.4 686.9M2279.4 686.9L2290.7 686.6M2021.7 893.7L2023.3 902.3M2039.1 991.9L2039.6 995.2M1998.7 970.5L2002.1 989.8M1981.5 907.1L1983.2 916.9M1960.5 857.4L1963.8 876M1968.5 902.9L1969.4 908M1988.4 1015.5L1991.5 1033M1974.7 972.5L1977 985.5M2259.6 1298.4L2275.4 1293.9M2275.4 1293.9L2310.9 1283.8M2310.9 1283.8L2322.3 1280.5M2322.3 1280.5L2338.7 1275.9M2338.7 1275.9L2368.3 1267.4M2368.3 1267.4L2390.1 1261.2M2390.1 1261.2L2409.2 1232.5M2409.2 1232.5L2428.4 1203.7M2428.4 1203.7L2449.4 1172.2M2449.4 1172.2L2452.2 1168M2278.3 1248.8L2297.5 1220M2297.5 1220L2311.9 1198.4M2311.9 1198.4L2322.3 1182.7M2322.3 1182.7L2328 1174.2M2328 1174.2L2355.3 1146.9M2355.3 1146.9L2368.3 1133.9" stroke="#ff9400" stroke-width="2" stroke-dasharray="2 4"/><path d="M1729.1 1066.1L1737.9 1072.4M1737.9 1072.4L1750.8 1081.6M2658.2 907.3L2669.2 929.3M2687.5 951.7L2697.5 963.9M2703.8 998.5L2715.3 1012M2715.3 1012L2722.6 1020.5" stroke="#f4e400" stroke-width="2" stroke-dasharray="2 2"/><path d="M1187.6 1314.2L1184.2 1323.4M1198.6 1275L1196.9 1279.8M1190.9 1296.2L1184.9 1312.8M1196.8 1253.7L1191.8 1267.4M1174.9 1278.7L1171.1 1289.3M1165.5 1295.8L1159.7 1311.8M1181.6 1242.9L1176.8 1255.9M1174.2 1245.7L1168.2 1262.1M1157 1293L1151.4 1308.2M1144.5 1327.4L1142.9 1331.8M1183.8 1210.4L1177.8 1227M1177.8 1227L1175.9 1232.2M1147.7 1274.7L1144.7 1282.8M1131.2 1311.1L1125 1328.3M1125 1328.3L1123.9 1331.2M1149.7 1251.6L1145.3 1263.6M1139 1280.9L1134.1 1294.4M1150.8 1239.8L1147.4 1249.1M1123 1307.4L1119.3 1317.6M1119.3 1317.6L1116.2 1326.1M1112.3 1328.2L1111.3 1330.9M1145.8 1218.4L1143.6 1224.4M1146.2 1208.4L1139.4 1227.2M1110.8 1305.8L1104.1 1324.2M1104.5 1314.4L1101.5 1322.7M1108.5 1285.8L1106.6 1291.1M1106.6 1291.1L1103.7 1298.9M1095.7 1321L1092.3 1330.3M1223 1480L1232.5 1495.8M1232.5 1495.8L1250.3 1525.3M1250.3 1525.3L1260.9 1542.9M1260.9 1542.9L1267.2 1553.3M1267.2 1553.3L1273 1563M2092.2 1214.9L2093.1 1221.8M2093.1 1221.8L2095.5 1238.6M2099 1263.6L2101.1 1278.7M2086.6 1232.6L2088.5 1246.1M2088.5 1246.1L2089.7 1255.1M2089.7 1255.1L2092.8 1276.8M2101 1335L2102.2 1344M2084.1 1243.9L2086.4 1260.1M2089.1 1279L2092.1 1300.5M2096.1 1329.1L2098.5 1346.2M2076.4 1217.9L2079.1 1236.6M2096.8 1391.9L2098.3 1402.4M2068.6 1219.4L2070.9 1235.9M2074.9 1293L2077.6 1312.5M2068.6 1277L2070.5 1291M2070.5 1291L2071.5 1297.8M2077.4 1339.5L2078.4 1346.8M2082.9 1379.3L2085.9 1400.2M2066.3 1289.5L2067.5 1298M2070.3 1317.7L2072.8 1335.6M2075.8 1357.4L2077.1 1366.4M2084.7 1420.4L2085.8 1428M2071 1351.8L2073.9 1372.1M2076.5 1390.6L2078.9 1407.9M2083.4 1439.9L2084.6 1448.8M2052.9 1251.6L2055.8 1272.7M2068.5 1362.5L2069.7 1370.9M2070.6 1377.4L2071.8 1386.4M2059.8 1329.9L2061.3 1340.3M2043.1 1239.4L2045.3 1254.8M2053.4 1312.6L2056.2 1332.7M2062.9 1380L2064.4 1390.9M2050.9 1323.8L2051.9 1331.1M2043.4 1299L2046.1 1318M2050.2 1347.2L2051.9 1359.6M2029.2 1226.7L2030.2 1233.6M2056.1 1417.9L2057.3 1426.8M2059.6 1443.2L2062 1459.9M2028 1246.8L2029.8 1259.5M2040.6 1365.2L2041.6 1372.5M2026.3 1292.1L2027.3 1299.3M2027.3 1299.3L2029 1311.7M2036.2 1363.1L2038.2 1377.2M2052 1475.5L2052.7 1480.1M2034.7 1380.8L2036.2 1391.2M2021.7 1317.1L2024.1 1334M2010.7 1267.4L2013.4 1287.1M2026.7 1381.3L2029.3 1399.8M2017.8 1346.7L2019.1 1356M2023 1383.8L2023.8 1389.8M2023.9 1419.1L2026.1 1434.5M2015.7 1389.2L2017.6 1403.2M2018.1 1435.3L2020 1449M2020 1449L2021.3 1458.1M2004.1 1364.3L2005.7 1375.5M2007 1385.3L2008.9 1398.8M2011.6 1418L2013.4 1430.5M2013.4 1430.5L2015.5 1445.2M1994.6 1354.5L1997.1 1372.2M2005.1 1429.1L2006.5 1439M1996 1393.1L1997.6 1404.5M1998.9 1413.4L2001.1 1429.4M1993.7 1462.5L1995.2 1473.3M1987.4 1446.9L1990.3 1467.5M2274 1253L2282.8 1226.1M2282.8 1226.1L2290.1 1203.8M2290.1 1203.8L2293 1195M2424 1234L2427.5 1222.2M2427.5 1222.2L2434.3 1198.9M2434.3 1198.9L2439.8 1180.4M2439.8 1180.4L2444 1166" stroke="#f4e400" stroke-width="2" stroke-dasharray="2 1.5"/><path d="M1146.8 1165.5L1138.6 1188.1M1121.4 1235.6L1101.3 1291.2M1093.4 1312.9L1087.8 1328.6M1093.2 1327.2L1092.4 1329.5M1136.4 1222.3L1126.1 1250.6M1126.1 1250.6L1114.8 1281.5M1143.5 1216.7L1126.3 1263.8M1126.3 1263.8L1113.9 1298.1M1113.9 1298.1L1101.7 1331.4M1148 1218.2L1130.3 1266.9M1161 1196.6L1146.7 1235.6M1127.3 1288.7L1119.2 1310.9M1119.2 1310.9L1111.1 1333.2M1086.2 1331.7L1117.9 1381.5M1117.9 1381.5L1145.9 1425.4M1145.9 1425.4L1157.7 1444.1M1157.7 1444.1L1173.2 1468.3M1116.5 1371.5L1136.7 1403.1M1136.7 1403.1L1163.1 1444.5M1163.1 1444.5L1177.2 1466.5M1177.2 1466.5L1177.3 1466.8M1094.5 1329.6L1105.4 1346.6M1105.4 1346.6L1135 1392.9M1165.5 1440.3L1181.4 1465.2M1098.6 1328.6L1130 1377.3M1130 1377.3L1152 1411.5M1152 1411.5L1171 1440.9M1171 1440.9L1185.6 1463.7M1355.6 1393.1L1388.7 1389.6M1421.6 1386L1479.3 1379.8M1479.3 1379.8L1503.3 1377.2M1503.3 1377.2L1549.8 1372.2M1549.8 1372.2L1590.7 1367.8M1590.7 1367.8L1623.5 1364.3M1452.2 1419.1L1514.6 1410.5M1569.8 1403L1614.2 1396.9M1266.3 1443.5L1326.6 1440.5M1326.6 1440.5L1352.6 1439.2M1352.6 1439.2L1359.5 1438.8" stroke="#38e800" stroke-width="2" stroke-dasharray="3 0.5"/><path d="M1138.6 1188.1L1121.4 1235.6M1101.3 1291.2L1093.4 1312.9M1151.4 1166.8L1139.1 1200.9M1139.1 1200.9L1119.7 1254.2M1119.7 1254.2L1100.5 1307.3M1156.1 1168L1136.4 1222.3M1130.3 1266.9L1112.1 1316.7M1170.1 1171.7L1161 1196.6M1090.4 1330.6L1116.5 1371.5M1135 1392.9L1165.5 1440.3" stroke="#00e870" stroke-width="2" stroke-dasharray="3 0.5"/><path d="M1100.5 1307.3L1093.2 1327.2M1114.8 1281.5L1097.1 1330.4M1160.7 1169.3L1143.5 1216.7M1165.4 1170.5L1148 1218.2M1112.1 1316.7L1106.4 1332.3M1146.7 1235.6L1127.3 1288.7" stroke="#00d8c0" stroke-width="2" stroke-dasharray="3 0.5"/><path d="M1163 1336.5L1176.2 1342.6M1145.6 1331.9L1150.3 1334M1190.9 1353L1205.4 1359.8M1127.9 1334.2L1133.4 1336.8M1168.5 1356.7L1181.8 1362.9M1124 1339.4L1133.9 1344.1M1183.9 1367.4L1191.3 1370.8M1216.2 1382.4L1221.3 1384.8M1097.1 1330.4L1109.4 1336.2M1117.1 1339.8L1126.5 1344.1M1207.5 1381.9L1214.3 1385.1M1143.1 1355.4L1155.3 1361.1M1141.4 1358.2L1147.8 1361.2M1161.4 1367.5L1173.4 1373.1M1104.4 1344.4L1109.2 1346.6M1177.2 1378.4L1187.6 1383.2M1184.7 1388.9L1193.6 1393.1M1194.5 1397.1L1200.5 1399.8M1236.3 1420.1L1243.1 1423.2M1107.5 1363.5L1120.9 1369.8M1178.4 1396.6L1192.9 1403.4M1139.5 1382L1148.8 1386.3M1148.8 1386.3L1157 1390.1M1206.6 1413.3L1215.4 1417.4M1215.4 1417.4L1228.1 1423.3M1122.6 1377.6L1136.6 1384.1M1238.4 1431.6L1251.3 1437.6M1139.1 1388.9L1154.9 1396.2M1133.1 1389.6L1148.6 1396.8M1172.2 1407.8L1182.2 1412.5M1224.7 1432.3L1234.9 1437.1M1165.1 1408.1L1173.8 1412.1M1224.4 1435.7L1236.9 1441.5M1258.7 1451.7L1259.4 1452M1126.6 1393.6L1135.3 1397.7M1235 1444.2L1250.7 1451.5M1199.9 1431.4L1215.9 1438.8M1243.6 1458.8L1255.1 1464.1M1220.9 1451.7L1235.6 1458.6M1206.6 1448.6L1215.1 1452.5M1225.2 1457.3L1240.5 1464.4M1242.4 1468.8L1257.4 1475.8M1174.4 1440.6L1187 1446.5M1152.2 1433.8L1157.3 1436.2M1184.9 1456.1L1193.1 1459.9M1431.6 1325.1L1432.5 1328.3M1431.2 1339.1L1432.6 1344.4M1432.6 1344.4L1436 1356.8M1436 1356.8L1437 1360.6M1424.1 1327.8L1427.7 1341.4M1430.2 1350.8L1433.5 1363.2M1420.3 1329.2L1422.5 1337.5M1427.6 1356.7L1428.9 1361.6M1428.9 1361.6L1431.2 1370.1M1425.1 1362.8L1427.4 1371.3M1419.5 1363.6L1424.9 1361.7M1364.8 1387.8L1371.6 1385.3M1386.4 1380L1396.4 1376.3M1367.9 1390.9L1380.3 1386.4M1387.6 1383.8L1401.5 1378.7M1423.2 1370.8L1430.9 1368M1428.9 1373L1436.1 1370.4M1352.5 1358.1L1354.8 1371.1M1354.8 1371.1L1357.3 1385.3M1357.3 1385.3L1359.1 1395.3M1351.5 1369.4L1352.5 1375.1M1346.4 1358.1L1348.2 1368.2M1348.2 1368.2L1350.8 1382.8M1350.8 1382.8L1353 1395.3M1345.7 1371.4L1346.6 1376.5M1347.7 1382.9L1349.4 1392.1M1349.4 1392.1L1349.9 1395.3M1341.4 1363.9L1342.4 1369.8M1343.7 1377.2L1346.1 1390.8M1346.1 1390.8L1346.9 1395.3M1372 1383L1382.4 1381.3M1382.4 1381.3L1409.7 1376.9M1409.7 1376.9L1421.8 1374.9M1438.3 1372.3L1440 1372M1440 1372L1454.4 1368.2M1454.4 1368.2L1473.4 1363.2M1473.4 1363.2L1486.1 1359.8M1486.1 1359.8L1522.4 1350.2M1522.4 1350.2L1527 1349M1601.3 1335.4L1602.4 1348M1602.4 1348L1603 1355M1597 1320.8L1597.6 1327.6M1598.8 1341.6L1599.7 1352.1M1599.7 1352.1L1600 1355M1591 1320.8L1591.5 1326.4M1592.6 1338.8L1593.6 1350.5M1593.6 1350.5L1594 1355M1588 1320.8L1588.9 1331M1590 1344.5L1590.8 1353.1M1590.8 1353.1L1591 1355M1585.6 1328.3L1586.5 1338.2M1586.5 1338.2L1587.4 1349.3M1587.4 1349.3L1587.9 1355M1547.4 1366.1L1555.4 1363.1M1550.2 1377.8L1561.9 1373.5M1587.9 1367.3L1591.7 1365.9M1573.6 1382L1578.4 1380.3M1559.8 1393.5L1567.8 1390.6M1584.8 1390.8L1590.2 1388.8M1618.9 1355.2L1626.2 1351.8M1623.2 1366.5L1626.2 1365M1657.4 1350.5L1660.9 1348.9M1641.5 1362.3L1649.9 1358.4M1649.9 1358.4L1652.7 1357.1M1640.1 1380.6L1647.3 1377.3M1632.3 1393.1L1635.3 1391.7M1623.8 1401.5L1629.6 1398.8M1633.7 1401.3L1640.4 1398.2M1640.4 1398.2L1646.4 1395.3M1647.6 1403.6L1652 1401.6M1639.4 1416.3L1647 1412.7M1628.7 1430.1L1636.5 1426.4M1665.2 1321.9L1672.2 1318.6M1697.1 1311.4L1705.4 1307.6M1678.2 1324.7L1686.2 1320.9M1702.3 1313.4L1710.1 1309.8M1710.1 1309.8L1713 1308.4M1683.7 1326.5L1691.8 1322.8M1665.6 1339.4L1672.8 1336M1679.4 1332.9L1688.1 1328.9M1668.9 1342.2L1673.1 1340.3M1719.1 1318.8L1727.3 1315M1754.6 1302.3L1758.8 1300.3M1747.4 1310.1L1754.9 1306.5M1782.7 1293.6L1786.6 1291.8M1717.5 1328.4L1724.7 1325.1M1731.1 1322.1L1738.6 1318.6M1672.6 1353.8L1680.9 1349.9M1711.5 1335.6L1720.3 1331.5M1748.4 1318.4L1754.3 1315.6M1670.3 1359.2L1677.3 1356M1716 1337.9L1724.4 1334M1776 1310L1779.4 1308.4M1761.6 1321.1L1768.4 1317.9M1730.3 1340.1L1737.7 1336.7M1737.7 1336.7L1746.2 1332.7M1760.8 1330.3L1768.6 1326.6M1779.7 1321.5L1787 1318.1M1712.5 1357.2L1719.3 1354M1730.5 1348.8L1734.6 1346.9M1742.9 1343L1746.5 1341.4M1754.1 1337.8L1762.9 1333.7M1673.8 1379.7L1678.1 1377.7M1691 1371.7L1694.2 1370.2M1694.8 1374.3L1702.2 1370.9M1721.2 1366.4L1729.8 1362.4M1707.3 1377.3L1715.4 1373.5M1774 1346.2L1780.1 1343.4M1705.2 1382.7L1713.9 1378.6M1734.1 1369.2L1742.4 1365.4M1750.3 1361.7L1755.7 1359.1M1755.7 1359.1L1764.1 1355.2M1764.1 1355.2L1768.2 1353.3M1775.8 1349.8L1783.1 1346.4M1672.9 1402.1L1676 1400.7M1767.5 1358.1L1772.4 1355.8M1697.9 1394.9L1702.1 1393M1718.3 1385.4L1724.9 1382.3M1751.9 1369.8L1756.9 1367.4M1717.5 1390.2L1725.1 1386.7M1696.9 1404.2L1699.7 1402.9M1733.6 1387.1L1741 1383.6M1701 1406.7L1709.4 1402.8M1714.6 1400.4L1722 1396.9M1778.1 1370.7L1785.9 1367.1M1671.4 1424.9L1678.2 1421.8M1688.5 1417L1693.3 1414.7M1788.5 1370.3L1792.1 1368.6M1698.1 1416.9L1702.7 1414.8M1724.5 1404.6L1729.1 1402.5M1677.8 1430.8L1681 1429.3M1681 1429.3L1684.5 1427.7M1791.5 1377.8L1794.7 1376.3M1757.6 1398L1766.2 1394M1762.7 1400L1769.5 1396.8M1667.7 1448.7L1674.6 1445.5M1707.2 1430.3L1710.5 1428.8M1726.5 1421.3L1729.9 1419.7M1787.4 1392.9L1792.2 1390.7M1751.4 1414.1L1756.7 1411.6M1756.7 1411.6L1763.9 1408.3M1763.9 1408.3L1772.6 1404.2M1721.9 1432.3L1729.7 1428.6M1788 1401.5L1793.1 1399.1M1760.8 1418.5L1765 1416.6M1805.2 1397.8L1805.5 1397.7M1730.7 1437L1735.9 1434.6M1742.2 1431.6L1746 1429.9M1746 1429.9L1754.4 1425.9M1775.2 1420.7L1778.5 1419.1M1804.9 1406.8L1809.8 1404.5M1794.4 1416.1L1802.6 1412.3M1788.1 1423.5L1796 1419.8M1745.5 1409L1745.1 1428.8M1999.6 995.7L2003 1015M2001.7 1024.6L2003.9 1037.4M1996.2 1010.8L1998.4 1023.5M1999.4 1046.4L2000.1 1049.9M1983.6 1008.4L1986.3 1024.1M1988.9 1038.6L1990.9 1049.9M2017.1 1071.8L2019.1 1080.8M2005.9 1050L2009.1 1064.2M2009 1090.4L2012.2 1104.3M2012.2 1104.3L2016.5 1122.6M1996.6 1050L2001.1 1069.4M2018.9 1146.6L2021.8 1159.1M2053.2 1294.9L2054 1298.4M2000.4 1079.9L2004.3 1096.6M2005.9 1103.5L2009.2 1117.6M2024.6 1184.4L2027.6 1197.6M2029.4 1205.2L2030.9 1211.9M2004.2 1109.3L2006.3 1118.5M2006.3 1118.5L2010.1 1135.2M2012 1143.4L2014.3 1153.3M2020.8 1181.5L2022.7 1189.8M2046.3 1292L2047.8 1298.4M2006.5 1132.6L2008.1 1139.7M2017.7 1181.3L2021 1195.4M2025.8 1216.4L2029.1 1230.6M2008.6 1155.2L2010.4 1163M2010.4 1163L2015.2 1183.7M2026.4 1232.4L2028.5 1241.4M2028.5 1241.4L2030.2 1248.6M1985.5 1095.3L1988.9 1109.7M1989.4 1125.2L1991.3 1133.4M1991.3 1133.4L1991.4 1133.9M2209.9 1251.9L2217.7 1271.3M2217.7 1271.3L2222.4 1282.9" stroke="#ff9400" stroke-width="2" stroke-dasharray="2 1"/><path d="M1328.8 1464.7L1344.9 1462.4M1315 1470.6L1325 1469.2M1223.8 1487.5L1229.2 1486.8M1216.5 1492.6L1226.9 1491.1M1244 1488.7L1258.1 1486.7M1253.9 1499.4L1265.3 1497.8M1361.8 1496.4L1363.4 1496.2M1287 1519L1301.1 1517M1362.7 1508.4L1365.1 1508M1260.3 1526.8L1272.9 1525M1318.1 1522.7L1328.7 1521.2M1319.2 1530.7L1331.4 1528.9M1351.2 1526.2L1365.5 1524.1M1320.1 1534.6L1337.4 1532.1M1247.8 1556.8L1257.5 1555.5M1236 1566.6L1253.1 1564.2M1921.1 795.3L1941.1 795.3M1941.1 795.3L1946 795.3M1921.4 803L1944.6 802.7M1944.6 802.7L1946 802.7M1921.7 810.8L1946 810.2M1922 818.6L1936.6 818M1936.6 818L1946 817.6M1922.4 826.3L1935.8 825.6M1935.8 825.6L1946 825.1M1922.7 834.1L1934.7 833.3M1934.7 833.3L1946 832.5M1992.5 786L2009.7 785.4M2009.7 785.4L2025.9 784.9M2025.9 784.9L2039.1 784.4M2088.8 786L2107.5 784.4M2564 759.6L2545.3 779.8M2545.3 779.8L2540.2 797.8M2540.2 797.8L2539.1 801.5M2539.1 801.5L2528.6 810.8M2528.6 810.8L2511.2 826.3M2511.2 826.3L2505.2 838.2M2505.2 838.2L2489.4 869.8M2588.8 851.2L2588.8 868.2M2588.8 868.2L2588.8 876M2588.8 876L2560.9 894.7M2560.9 894.7L2544.1 913.3M2544.1 913.3L2534.2 924.2M2534.2 924.2L2532.9 925.7M2532.9 925.7L2527.6 939.8M2527.6 939.8L2523.6 950.6M2598.1 953.7L2588.7 964.7M2588.7 964.7L2579.6 975.3M2579.6 975.3L2560.9 997.1M2560.9 997.1L2557.8 1012.7M2557.8 1012.7L2561.6 1024.3M2561.6 1024.3L2570.2 1049.9M2458.4 845L2473.2 848.7M2473.2 848.7L2483.2 851.2M1834.2 1040.6L1851.9 1024.7M1851.9 1024.7L1865.2 1012.7M2352 1219L2366.2 1201.6M2366.2 1201.6L2383 1181M2231.7 1282.9L2234.9 1292.7M2234.9 1292.7L2241 1310.9M2631.4 640L2644.7 655.2M2644.7 655.2L2653.5 665.2M2694.3 699.7L2705.8 715.5M2705.8 715.5L2719.3 734M2719.3 734L2719.5 734.3M2719.5 734.3L2733.7 751.4M2733.7 751.4L2748 768.6M2748 768.6L2750.9 772.1M2750.9 772.1L2757.2 781.5M2983.6 712.3L2985.2 724.9" stroke="#ff9400" stroke-width="2" stroke-dasharray="2 2"/><path d="M1247.7 1404.7L1292.1 1399.9M1292.1 1399.9L1355.6 1393.1M1388.7 1389.6L1421.6 1386M1299.4 1407.6L1349 1405.8M1402.8 1403.8L1421.6 1403.1M1421.6 1403.1L1494.9 1400.3M1552.5 1398.2L1613.8 1396M1421.6 1423.3L1452.2 1419.1" stroke="#bcf000" stroke-width="2" stroke-dasharray="3 0.5"/><path d="M1253.9 1409.3L1299.4 1407.6M1349 1405.8L1402.8 1403.8M1494.9 1400.3L1530 1399M1530 1399L1552.5 1398.2M1613.8 1396L1614 1396M1253.9 1423.3L1307.1 1423.3M1307.1 1423.3L1329.7 1423.3M1329.7 1423.3L1393.9 1423.3M1393.9 1423.3L1421.6 1423.3M1514.6 1410.5L1569.8 1403" stroke="#f4e400" stroke-width="2" stroke-dasharray="3 0.5"/><path d="M1667.8 1349.1L1668 1361.4M1668.4 1380.8L1668.7 1392.9M1700 1306L1700.5 1329.4M1701.1 1352.3L1701.5 1372.9M1701.5 1372.9L1702.1 1397M1702.1 1397L1702.6 1417.5M1765.3 1310.2L1765.6 1324.9M1765.6 1324.9L1766 1343.1M1766.6 1369.6L1767.3 1398M1767.3 1398L1767.7 1416.8M1792.3 1322.8L1791.7 1349.4M1790 1426.2L1790 1428" stroke="#ffbc00" stroke-width="2" stroke-dasharray="2 0.5"/><path d="M1307.6 1497.1h2M1206 1542.7h2M1300.7 1525h2M1335.5 1557h2M1371.4 1567.6h2M1300.3 1580.5h2M1307.3 1496.4h2M1230 1536.3h2M1268.9 1504.7h2M1197.3 1513.3h2M1353.2 1534.2h2M2357 1355.6h2M2334.1 1396.8h2M2313.7 1350.9h2M2301.8 1326.9h2M2297.5 1373h2M2389.1 1400.9h2M2436.4 1390.7h2M2399 1362.3h2M2417.4 1351.5h2M2393.8 1387.5h2M2406.3 1398.3h2M2350 1352.9h2M2440.6 1327.2h2M2647.7 816.8h2M2735.2 961.2h2M2429.3 1219.5h2M2592 1277h2M2426.6 1136.6h2M2544.4 1085h2M2817.8 848.1h2M2118.2 902.5h2M3255.8 918.1h2M2830.5 807.1h2M2598.8 1152.4h2M3335.9 1142.5h2M2172.2 1106.8h2M2124.5 1037.3h2M2774.5 1078.3h2M2479.1 535.3h2M3308.9 1207.9h2M2518.4 663.8h2M3324.1 672.9h2M3128 1025.3h2M2992.7 913.4h2M2137.5 903.2h2M2626.6 751.1h2M3376.3 615.3h2M3240 824.8h2M2365.7 1146.4h2M2796.5 921h2M2326.1 770.7h2M2540.2 1282.2h2M3136.4 496h2M2093.4 752.3h2M3287.4 512.2h2M2543.1 974.3h2M2500.6 850.9h2M2454.5 1051.7h2M2969.3 632.8h2M2528.4 677.6h2M3211 883.7h2M2371.2 1051h2M2371.9 820.5h2M2456.9 667h2M3224.3 942.2h2M2233.3 772.3h2M2349.3 864h2M2984.3 546.6h2" stroke="#ff5a00" stroke-width="2"/><path d="M1271.7 1508.2h2M1289.7 1526.7h2M1210.5 1527.3h2M1302.1 1503.6h2M1205.7 1504.9h2M1290.8 1508.6h2M1212.9 1584h2M1318.1 1574.7h2M1320.3 1498.2h2M1216.7 1540.5h2M1282 1558.8h2M1251.8 1495.7h2M1363.7 1548h2M1216.9 1517.8h2M1253 1508h2M1211.1 1542h2M1266.2 1558.7h2M1323.9 1585.2h2M1312.8 1583.3h2M1310.6 1494.2h2M1326.2 1578.9h2M1333.5 1503.7h2M1229.5 1568.3h2M1358.8 1533.2h2M1194.4 1533.8h2M1362.6 1580h2M1297.7 1543.7h2M1304.3 1592.2h2M1360.7 1569.3h2M2347.4 1341.3h2M2332.3 1387.2h2M2438.6 1325.1h2M2393.8 1374.7h2M2361.6 1328.5h2M2324.1 1433.3h2M2436.1 1354.6h2M2349.8 1396.1h2M2369.6 1398.2h2M2317.8 1398.4h2M2328.4 1368.7h2M2338.9 1381.2h2M2381.2 1395.4h2M2378.6 1333.9h2M2419.9 1367.4h2M2427.7 1402.1h2M2305.5 1401.1h2M2306.2 1378.7h2M2367.6 1386.5h2M2383.2 1396.1h2M2349.5 1353.9h2M2309.3 1436.2h2M2041.5 1116.5h2M2072.2 1096.7h2M2088.6 1163.9h2M2069.2 1105.6h2M2087 1122.7h2M2076.4 1134.1h2M2028.1 1099.8h2M2091.5 1125.8h2M2076.8 1164h2M2060.6 1161.6h2M2081.8 1149.2h2M2089.5 1165.6h2M2412.2 1448.9h2M2407.5 1426.9h2M2382.4 1461.6h2M2376.8 1440.7h2M2384 1444.6h2M2386.4 1461.3h2M2378.3 1457.6h2M2412.8 1438.2h2M2406.7 1447.9h2M2383.3 1443.5h2M2588.6 1425.7h2M2585.9 1418.3h2M2628 1437.3h2M2627 1434.4h2M2598 1436.1h2M2600.8 1464.2h2M2583.9 1419.3h2M2593.4 1437.2h2M2602.2 1414.9h2M2613.7 1458.8h2M2610.4 1427.4h2M2607.9 1422.1h2M2629.4 1342.9h2M2639.2 1367.4h2M2640 1372.5h2M2631.6 1343.4h2M2633.3 1368h2M2633 1356.3h2M2642.8 1365.2h2M2643.4 1342h2M2441.1 1349.8h2M2404.8 1351.2h2M2421 1340.8h2M2399.1 1350.1h2M2430.4 1346.9h2M2427 1344.6h2M2430.8 1357h2M2421.9 1359.8h2M3375.1 579.6h2M3368.7 629.1h2M2095.4 1163.5h2M2420.8 627.4h2M3165 701.8h2M2837.9 511.2h2M3225.6 1221.6h2M2857.2 1199.8h2M2321.4 565.1h2M2375.3 578.3h2M2564.4 1048.4h2M3286.8 631.1h2M2379.6 948.3h2M3270.4 1208.1h2M2548.9 896.6h2M2161 1142.7h2M2565.7 636.1h2M2397.1 995.8h2M2770 498.7h2M2962.5 631.3h2M2546.3 778.5h2M3253.2 1140.6h2M2102 783.6h2M3077.5 526.6h2M2254.8 576.5h2M3223.2 632.2h2M3055 1099.5h2M2882.5 577.5h2M2566.4 1197.1h2M2676.1 702.5h2M3153.5 1141.4h2M2458.8 1060h2M3276.5 691.2h2M3126.2 860h2M3230.5 1119.6h2M2809.1 818.7h2M3012.1 615.7h2M2955.9 981.3h2M2477.9 861.2h2M3118.5 918.1h2M3361.7 498.3h2M2608.9 1146.1h2M3320.4 955.2h2M2361.1 1130.7h2M3307.7 803.7h2M2133.8 708.4h2M2446.1 740.6h2M2564.2 1025.3h2M3337.6 497.9h2M3038.6 998.9h2M3143.1 1219.8h2M2555.1 885.8h2M2354.6 959.4h2M2990.3 567.2h2M2555.9 549.9h2M2452.3 1054.1h2M2606.4 745.6h2M2274.6 589.7h2M2156.4 601.7h2M3229.5 1079.6h2M2615.6 1121.4h2M2139.3 903.2h2" stroke="#ff2000" stroke-width="2"/><path d="M1815.5 705.8L1869 699.1M2052.7 676.1L2105.9 669.4M1814.6 712.6L1872 705.6M1872 705.6L1901.3 702M1901.3 702L1951.6 695.9M1951.6 695.9L2010.1 688.7M2010.1 688.7L2040.8 685M2087.6 679.2L2116.6 675.7M1955.2 702.5L2001.4 697M2001.4 697L2047 691.6M1812.7 726.1L1858.1 720.9M1910.9 714.8L1951.9 710M1981.9 706.6L2014.4 702.8M2067.7 696.6L2115.8 691.1M1811.7 732.9L1869.5 726.4M1869.5 726.4L1928.4 719.8M2004.7 711.2L2025.1 708.9M2105.9 699.8L2115.5 698.8M1862.2 734L1895.5 730.4M1895.5 730.4L1944.1 725.1M1944.1 725.1L1992.7 719.8M2066.2 711.8L2095.3 708.6M2095.3 708.6L2115.1 706.5M1809.8 746.4L1861.3 741M1908.4 736L1944.2 732.2M2044.3 721.6L2097.5 716M2097.5 716L2114.7 714.2M1808.8 753.2L1833.2 750.7M1833.2 750.7L1875.4 746.3M1875.4 746.3L1930.9 740.6M1930.9 740.6L1974.3 736.2M1974.3 736.2L2003 733.3M2023.9 731.1L2078.1 725.6M2078.1 725.6L2114.3 721.8M1807.9 759.9L1855.7 755.2M1881.6 752.6L1937.5 747.1M1937.5 747.1L1978.3 743M1978.3 743L2018.2 739M2018.2 739L2054.7 735.4M2054.7 735.4L2096.1 731.3M1857.9 761.8L1889.8 758.7M1889.8 758.7L1943.2 753.6M1943.2 753.6L1983.6 749.7M1983.6 749.7L2008.7 747.3M2032.4 745L2074.4 741M1936.2 761.4L1973.1 757.9M2005.2 755L2039 751.8M2063.4 749.5L2111.4 745.1M1805 780.2L1848.5 776.3M1848.5 776.3L1870.6 774.3M1948.3 767.4L1979 764.6M2012.1 761.6L2054.9 757.8M2111.2 752.8L2112.8 752.6M1804.1 787L1845.3 783.4M1845.3 783.4L1893.7 779.2M1893.7 779.2L1934.2 775.7M1934.2 775.7L1968.8 772.7M2017.7 768.5L2063.1 764.6M2063.1 764.6L2112.4 760.3M1833.5 791.2L1869.6 788.2M1869.6 788.2L1913.4 784.5M1945.4 781.9L1981.6 778.9M2071.3 771.4L2112 768" stroke="#ff9400" stroke-width="2" stroke-dasharray="2 2.6"/><path d="M1911.8 693.8L1941.2 690.1M1941.2 690.1L1997.6 683M1997.6 683L2052.7 676.1M1870.8 712.6L1920.2 706.7M2047 691.6L2068.8 689M2099.3 685.4L2116.2 683.4M2014.4 702.8L2035.6 700.3M1928.4 719.8L1983.7 713.6M1983.7 713.6L2004.7 711.2M2025.1 708.9L2068.1 704.1M1992.7 719.8L2019.5 716.9M2019.5 716.9L2066.2 711.8M1861.3 741L1908.4 736M1944.2 732.2L1990 727.3M1990 727.3L2044.3 721.6M1855.7 755.2L1881.6 752.6M1806 773.4L1842.6 770M1897.1 765L1936.2 761.4M1973.1 757.9L2005.2 755M2039 751.8L2063.4 749.5M2111.4 745.1L2113.2 744.9M1870.6 774.3L1900.6 771.6M2054.9 757.8L2111.2 752.8M1968.8 772.7L2017.7 768.5M1913.4 784.5L1945.4 781.9M1981.6 778.9L2035.6 774.4" stroke="#ffbc00" stroke-width="2" stroke-dasharray="2 2.6"/><path d="M2105.9 669.4L2117 668M2040.8 685L2087.6 679.2M1813.6 719.4L1870.8 712.6M1920.2 706.7L1955.2 702.5M2035.6 700.3L2067.7 696.6M2068.1 704.1L2105.9 699.8M1810.8 739.6L1862.2 734M2003 733.3L2023.9 731.1M2074.4 741L2113.5 737.2M1900.6 771.6L1948.3 767.4M1979 764.6L2012.1 761.6M1803.1 793.7L1833.5 791.2M2035.6 774.4L2071.3 771.4" stroke="#ff5a00" stroke-width="2" stroke-dasharray="2 2.6"/><path d="M2046.8 679.5L2080.7 676.9M2308.8 658.9L2312.4 658.6M2152.3 666.1L2174.6 664M2174.6 664L2207.7 661M2141.6 713L2196.5 701.5M2334.2 688.1L2349.7 685M3216.4 640L3233.2 651.3M3233.2 651.3L3242.5 657.5M3242.5 657.5L3275.3 679.3M3275.3 679.3L3287 687.1M3287 687.1L3291.8 690.3M3291.8 690.3L3310.6 697.8M3310.6 697.8L3323.3 702.9M3323.3 702.9L3317 721.8" stroke="#ffbc00" stroke-width="2" stroke-dasharray="2 4"/><path d="M2055.5 947L2056.6 953.3M2040.6 931.6L2041.6 937.3M2033 922.9L2035 934.4M2037.7 949.6L2039.3 958.8M2033.1 958.3L2035.8 973.7M2013.3 880.4L2014.9 889.3M2025 981.4L2027.7 996.8M2005.5 905.3L2007.8 918.4M2010.4 933.2L2013.7 951.7M2013.7 951.7L2014.8 958.1M2017.6 973.6L2020 987.2M2021.2 994.3L2023.4 1006.6M2018.3 1012.7L2019.8 1020.7M2019.8 1020.7L2022.6 1037M1991 892.1L1994 909.2M2000.7 947.2L2002.5 957.1M2005.8 976.1L2009.1 994.8M2009.1 994.8L2012.2 1012M2017.3 1041.1L2018.4 1047.5M1984.6 890.2L1985.8 897.3M2003.9 999.8L2007 1017.3M2009.2 1029.6L2012.6 1049.2M1986.9 937.9L1988.1 944.6M1996.4 991.7L1997.9 1000.6M2003.3 1031.2L2005.3 1042.2M1968.5 868.3L1970.7 880.5M1972.7 891.8L1975.9 909.9M1979.4 930.1L1981.5 941.8M1983.7 954.1L1985.3 963.5M1988.5 981.8L1991.2 997.2M1965.6 886.2L1968.5 902.9M1982.4 981.8L1985.8 1000.8M1969.9 945L1972.4 959.5M1979.4 998.9L1980.9 1007.7M1980.9 1007.7L1981.9 1013.1M1987.7 1045.9L1988.4 1049.9M1951.7 876.4L1954.5 892.3M1957.9 911.6L1959.6 921.2M1973.6 1001L1976.4 1016.8M1976.4 1016.8L1978.6 1029.3M1950 901.7L1952.3 914.6M1957.6 944.8L1959.4 954.8" stroke="#ff2000" stroke-width="2" stroke-dasharray="2 4"/><path d="M2047.1 933.7L2048.2 939.9M2031.1 981.4L2034.3 999.2M2020 987.2L2021.2 994.3M1996.9 890.9L1997.9 896.6M2015 993.6L2018.3 1012.7M2012.2 1012L2013.6 1020M1982.2 876.8L1983.3 882.7M2002.1 989.8L2003.9 999.8M2007 1017.3L2009.2 1029.6M2012.6 1049.2L2012.7 1049.9M1985.3 963.5L1987.1 973.6M1996.4 1026.6L1999 1041.3M1966.5 925.9L1969.9 945M1983.8 1023.8L1985 1030.8M1966.1 958.1L1969.4 976.8M1981.7 1046.9L1982.3 1049.9M1964.7 984.6L1965.7 990.5M1972.3 1028.2L1973.3 1033.5M1945.9 913L1946.1 914" stroke="#ff5a00" stroke-width="2" stroke-dasharray="2 4"/><path d="M2141.6 876L2153.1 874.3M2153.1 874.3L2178.8 870.5M2178.8 870.5L2205.6 866.5M2205.6 866.5L2233.7 862.3M2233.7 862.3L2249.2 860M2249.2 860L2286.8 854.4M2286.8 854.4L2287.6 854.3" stroke="#ff5a00" stroke-width="2" stroke-dasharray="2 5"/><path d="M2185.1 845L2200.6 854.3M2669.2 929.3L2687.5 951.7" stroke="#38e800" stroke-width="2" stroke-dasharray="2 2"/><path d="M2029.8 876L2036 888.4M2036 888.4L2025.6 904M2025.6 904L2023.6 907.1M2511.2 646.2L2512.6 660M2512.6 660L2514.3 677.3M2514.3 677.3L2520.5 699M2520.5 699L2536 708.3M2747.8 734.3L2766.7 753.2M2766.7 753.2L2766.7 768.1M2766.7 768.1L2766.7 772.1" stroke="#ffbc00" stroke-width="2" stroke-dasharray="2 2"/><path d="M2337.3 734.7L2366.7 733.4M2366.7 733.4L2395.8 732.1M2395.8 732.1L2417.8 731.1M2417.8 731.1L2438.7 730.1M2438.7 730.1L2467.5 728.8M2467.5 728.8L2497.2 727.4M2497.2 727.4L2508.1 727M2444 1105L2465.8 1099.9M2465.8 1099.9L2482.8 1095.8M2482.8 1095.8L2501.7 1091.4M2501.7 1091.4L2516 1088M2516 1088L2544.8 1073.8M2544.8 1073.8L2579.8 1056.4M2579.8 1056.4L2605.4 1043.8M2605.4 1043.8L2613 1040M2419 1151L2435.2 1140.5M2435.2 1140.5L2456.5 1126.9M2456.5 1126.9L2464 1122M2464 1122L2499.1 1103.6M2499.1 1103.6L2529 1088M2213 1219.3L2223.5 1211.2M2223.5 1211.2L2246.8 1193.2M2246.8 1193.2L2247.2 1192.9M2247.2 1192.9L2247.2 1180.4M2247.2 1180.4L2256.4 1173.6M2256.4 1173.6L2272.3 1161.6M2272.3 1161.6L2296.9 1143.2M2296.9 1143.2L2335 1136.5M2335 1136.5L2346.2 1134.6M2346.2 1134.6L2366.5 1131.1M2366.5 1131.1L2368.3 1130.7M2368.3 1130.7L2385 1126.2M2385 1126.2L2422.1 1116.2M2422.1 1116.2L2446.4 1109.7M2446.4 1109.7L2478.2 1101.1M2478.2 1101.1L2483.2 1099.7M2483.2 1099.7L2500.7 1091.5M2500.7 1091.5L2526.9 1079.3M2526.9 1079.3L2529.8 1078M3112.6 696.6L3106 722.8M3106 722.8L3103.1 734.3M3103.1 734.3L3093.7 762.6M3093.7 762.6L3077.8 799M3077.8 799L3071.7 813M3197.5 828.7L3182.6 863.5M3182.6 863.5L3178.6 872.7M3178.6 872.7L3168.7 889.5M3168.7 889.5L3151.4 919M3151.4 919L3147.2 926.2M3307.5 916.7L3293.3 931M3293.3 931L3291.8 932.5M3291.8 932.5L3273.5 953.8M3273.5 953.8L3273 954.5M3266.7 693.5L3282.4 704.5M3282.4 704.5L3298.1 715.5M2600 1048.8L2633 1029M2633 1029L2644.5 1022.1M2644.5 1022.1L2647.2 1020.5M2647.2 1020.5L2675.5 1004.8M2264.5 1407.9L2286.7 1409.1M2286.7 1409.1L2296.9 1409.7M2296.9 1409.7L2316.4 1410.8" stroke="#ff9400" stroke-width="2" stroke-dasharray="2 5"/><path d="M2489.4 876L2510.1 905.6M2510.1 905.6L2511.2 907.1M2511.2 907.1L2523.7 926.5M2523.7 926.5L2538.4 949.4M2538.4 949.4L2539.1 950.6M2539.1 950.6L2555.4 983.2M2555.4 983.2L2567.1 1006.5M2567.1 1006.5L2579.9 1042.2M2579.9 1042.2L2582.6 1049.9" stroke="#38e800" stroke-width="2.5" stroke-dasharray="2.5 2"/><path d="M2097.3 1280.1L2099.2 1293.7M2080.4 1217.2L2082.7 1233.9M2091.3 1323.7L2092.2 1330.4M2092.3 1359.3L2094.4 1374.4M2081.2 1309.5L2082.2 1316.5M2082.4 1346.5L2085 1365M2090 1429.7L2091.2 1438.1M2071.4 1412.1L2073.6 1427.5M2058 1345.2L2060.2 1361.4M2060.2 1361.4L2061.7 1371.9M2051.9 1331.1L2053.7 1343.8M2046.1 1318L2047.1 1325.7M2042.2 1319.4L2044.6 1336.4M2029.8 1259.5L2031.2 1269.9M2040.8 1337.7L2043.7 1359M2029.6 1286.9L2031.6 1301.4M2017.4 1229L2020.1 1247.9M2049.7 1459.1L2050.6 1465.6M2050.6 1465.6L2052 1475.5M2016.1 1248.2L2017.7 1260.1M2019.5 1273L2021.7 1288.6M2026.2 1320.6L2029 1340.3M2030.3 1349.8L2032.2 1362.9M2045.4 1456.8L2047.9 1475M2037.7 1431L2038.6 1437.5M2015.6 1360.1L2018.1 1377.5M2022.7 1410.8L2023.9 1419.1M2028.4 1450.8L2029.7 1460.2M1993.3 1374L1996 1393.1M1992.2 1423.5L1994.6 1440.1M1979.4 1447L1981.9 1465.2" stroke="#38e800" stroke-width="2" stroke-dasharray="2 1.5"/><path d="M1876 1350L1898.8 1342.5M1898.8 1342.5L1908.8 1339.2M1908.8 1339.2L1933.7 1331M1933.7 1331L1957.6 1323.2M1957.6 1323.2L1970.4 1319M1970.4 1319L1987.9 1313.2M1987.9 1313.2L2010.6 1305.7M2010.6 1305.7L2028 1300M1902.7 1341.1L1912.9 1338.4M1912.9 1338.4L1937.2 1331.9M1963.1 1324.9L1973.9 1322M1876.3 1354.4L1900.7 1347.8M1900.7 1347.8L1914.8 1344.1M1876.6 1360.5L1896.6 1355.2M1896.6 1355.2L1908 1352.1M1908 1352.1L1933.7 1345.2M1945.2 1342.1L1970 1335.5M1970 1335.5L1973.9 1334.4M1876.8 1366.7L1891.3 1362.8M1891.3 1362.8L1907.6 1358.4M1907.6 1358.4L1931.3 1352.1M1931.3 1352.1L1952 1346.5M1969.6 1341.8L1973.9 1340.7M1921.6 1360.9L1931.6 1358.2M1959.2 1350.8L1973.9 1346.9M1877.3 1379L1889.3 1375.8M1889.3 1375.8L1904.8 1371.6M1900.6 1378.9L1914.6 1375.2M1914.6 1375.2L1933.9 1370M1960.2 1363L1973.9 1359.3M1877.8 1391.2L1902.9 1384.5M1927.5 1377.9L1946.7 1372.8M1946.7 1372.8L1967 1367.4M1967 1367.4L1973.9 1365.5M1935 1382.1L1950.4 1378M1950.4 1378L1967.1 1373.5M1907.1 1395.8L1933.3 1388.8M1946.8 1385.2L1965.6 1380.2M1965.6 1380.2L1973.9 1377.9M1878.6 1409.7L1893.4 1405.7M1893.4 1405.7L1911 1401M1911 1401L1926.8 1396.8M1926.8 1396.8L1939.5 1393.4M1939.5 1393.4L1968.2 1385.7M1878.8 1415.8L1894.9 1411.5M1937.8 1400L1956.3 1395.1M1879.1 1422L1907.5 1414.4M1907.5 1414.4L1928.3 1408.8M1928.3 1408.8L1939.3 1405.8M1879.3 1428.1L1904.4 1421.4M1904.4 1421.4L1925.1 1415.8M1925.1 1415.8L1941.7 1411.4M1941.7 1411.4L1953.6 1408.2M1879.6 1434.3L1903.5 1427.9M1903.5 1427.9L1925.7 1421.9M1925.7 1421.9L1945.8 1416.5M1959.7 1412.8L1973.9 1409M1895.4 1436.2L1915.2 1430.9M1915.2 1430.9L1928.3 1427.4M1928.3 1427.4L1939.2 1424.5M1939.2 1424.5L1960.5 1418.8M1960.5 1418.8L1973.9 1415.2M1924.2 1434.7L1946 1428.9M1946 1428.9L1962.8 1424.4M1962.8 1424.4L1973.9 1421.4M1880.3 1452.7L1897.8 1448M1897.8 1448L1907.8 1445.3M1907.8 1445.3L1927.2 1440.1M1927.2 1440.1L1947.4 1434.7M1947.4 1434.7L1969.3 1428.9M1898.7 1454L1922.9 1447.5M1922.9 1447.5L1935.9 1444M1935.9 1444L1946.7 1441.1M1908.7 1457.5L1935.3 1450.4M1935.3 1450.4L1948.7 1446.8M1948.7 1446.8L1970.9 1440.9M1970.9 1440.9L1973.9 1440M1889.7 1468.8L1902.2 1465.5M1902.2 1465.5L1927 1458.8M1927 1458.8L1943.2 1454.5M1955.5 1451.2L1971.4 1446.9M1971.4 1446.9L1973.9 1446.3M1918.7 1467.2L1930.5 1464.1M1930.5 1464.1L1945.6 1460.1M1945.6 1460.1L1956.1 1457.2M1913.9 1474.8L1924.6 1471.9M1941 1467.5L1965.9 1460.8M1965.9 1460.8L1973.9 1458.7M1910.2 1482L1926 1477.7M1940.3 1473.9L1959.5 1468.7M1917 1486.4L1934.6 1481.6M1934.6 1481.6L1958.9 1475.1M1958.9 1475.1L1973.9 1471.1M1923.8 1490.7L1936 1487.5M1936 1487.5L1962.9 1480.3M1962.9 1480.3L1973.9 1477.3M2776.1 640L2779.2 662M2779.2 662L2773.6 698.7M2773.6 698.7L2773 702.9M2773 702.9L2763.5 728.1M2763.5 728.1L2780.8 750.1M2780.8 750.1L2770.5 770.6M2770.5 770.6L2769.8 772.1M2769.8 772.1L2750.9 790.9" stroke="#ff2000" stroke-width="2" stroke-dasharray="2 3"/><path d="M2067.1 1267.4L2065.8 1279.8M2065.8 1279.8L2063.8 1300.5M2060.9 1329.5L2060.3 1341.4M2060.3 1341.4L2059.2 1362.8M2059.2 1362.8L2058.5 1376.4M2055 1446.4L2054.7 1453.7" stroke="#38e800" stroke-width="3" stroke-dasharray="3 0.5"/><path d="M2063.8 1300.5L2060.9 1329.5M2058.5 1376.4L2056.5 1416.2M2056.5 1416.2L2055 1446.4" stroke="#bcf000" stroke-width="3" stroke-dasharray="3 0.5"/><path d="M1876.1 1348.2L1902.7 1341.1M1937.2 1331.9L1963.1 1324.9M1914.8 1344.1L1929.5 1340.1M1929.5 1340.1L1942 1336.8M1942 1336.8L1964 1330.9M1964 1330.9L1973.9 1328.2M1933.7 1345.2L1945.2 1342.1M1877.1 1372.8L1897.3 1367.4M1897.3 1367.4L1921.6 1360.9M1904.8 1371.6L1916.2 1368.5M1916.2 1368.5L1931.5 1364.4M1931.5 1364.4L1953.5 1358.6M1953.5 1358.6L1967.9 1354.7M1967.9 1354.7L1973.9 1353.1M1877.6 1385.1L1888.9 1382.1M1933.9 1370L1960.2 1363M1902.9 1384.5L1927.5 1377.9M1878.1 1397.4L1901.1 1391.2M1901.1 1391.2L1919.9 1386.2M1967.1 1373.5L1973.9 1371.7M1878.3 1403.5L1907.1 1395.8M1915.2 1406.1L1937.8 1400M1956.3 1395.1L1973.9 1390.4M1939.3 1405.8L1952.8 1402.2M1952.8 1402.2L1973.9 1396.6M1945.8 1416.5L1959.7 1412.8M1879.8 1440.4L1895.4 1436.2M1880.1 1446.6L1908.3 1439M1908.3 1439L1924.2 1434.7M1969.3 1428.9L1973.9 1427.6M1880.6 1458.8L1898.7 1454M1946.7 1441.1L1966.7 1435.8M1966.7 1435.8L1973.9 1433.8M1882.9 1464.4L1908.7 1457.5M1896.5 1473.2L1918.7 1467.2M1956.1 1457.2L1966.3 1454.5M1966.3 1454.5L1973.9 1452.5M1903.4 1477.6L1913.9 1474.8M1924.6 1471.9L1941 1467.5M1926 1477.7L1940.3 1473.9M1959.5 1468.7L1973.9 1464.9" stroke="#ff5a00" stroke-width="2" stroke-dasharray="2 3"/><path d="M1958.4 1320.2L1962.8 1343M1962.8 1343L1969.3 1376.1" stroke="#f4e400" stroke-width="3" stroke-dasharray="2 1"/><path d="M2235.1 1229.4L2280.4 1217.3M2312.9 1215.8L2346.2 1206.9M2287.4 1229.9L2322.4 1220.5M2322.4 1220.5L2371 1207.5M2284.9 1237.8L2304.4 1232.6M2304.4 1232.6L2331 1225.5M2331 1225.5L2363.7 1216.7M2323.4 1234.7L2357 1225.8M2383.5 1218.6L2386.1 1217.9M2281.1 1253.3L2334 1239.2M2386.3 1225.1L2387.4 1224.8M2239.7 1286.2L2277.5 1276M2338.7 1259.6L2386.5 1246.8M2386.5 1246.8L2391.2 1245.6M2302.1 1276.7L2354.2 1262.7" stroke="#ff9400" stroke-width="2" stroke-dasharray="2 8"/><path d="M2280.4 1217.3L2333.5 1203.1M2333.5 1203.1L2366.9 1194.1M2380.9 1197.6L2382.3 1197.2M2236.3 1243.6L2287.4 1229.9M2371 1207.5L2383.6 1204.1M2236.8 1250.7L2284.9 1237.8M2237.4 1257.8L2271.1 1248.8M2271.1 1248.8L2323.4 1234.7M2238 1264.9L2281.1 1253.3M2239.1 1279.1L2271.2 1270.5M2271.2 1270.5L2324.7 1256.2M2369.3 1244.2L2390 1238.7M2277.5 1276L2303.9 1269" stroke="#ffbc00" stroke-width="2" stroke-dasharray="2 8"/><path d="M2346.2 1206.9L2380.9 1197.6M2363.7 1216.7L2384.8 1211M2357 1225.8L2383.5 1218.6M2294.3 1257.1L2347.6 1242.8M2347.6 1242.8L2370.4 1236.6M2324.7 1256.2L2369.3 1244.2" stroke="#f4e400" stroke-width="2" stroke-dasharray="2 8"/><path d="M2291 1297L2311.7 1291.5M2311.7 1291.5L2327.5 1287.2M2327.5 1287.2L2347 1282M2347 1282L2365.6 1286.7M2365.6 1286.7L2395 1294M2395 1294L2427.9 1282.8M2427.9 1282.8L2451 1275" stroke="#ff2000" stroke-width="2" stroke-dasharray="2 6"/><path d="M2298 1311L2322.9 1314.9M2322.9 1314.9L2355.9 1320M2355.9 1320L2356 1320M2356 1320L2368.7 1315.3M2368.7 1315.3L2397 1304.8M2397 1304.8L2410 1300" stroke="#ff2000" stroke-width="2" stroke-dasharray="2 8"/><path d="M2587 1134L2594.8 1148.3M2594.8 1148.3L2599 1156M2575 1142L2588.4 1169.8M2588.4 1169.8L2589 1171M2565 1156L2579 1187.7M2579 1187.7L2580 1190M2555 1171L2567.4 1202.3M2567.4 1202.3L2572 1214M2545 1185L2554.3 1205.5M2554.3 1205.5L2561.3 1220.9M2561.3 1220.9L2565 1229M2535 1200L2541.5 1212.7M2541.5 1212.7L2553.1 1235.4M2553.1 1235.4L2557 1243M2522 1213L2533 1239.9M2533 1239.9L2539.9 1256.8M2539.9 1256.8L2542 1262M2513 1226L2520.5 1249.9M2520.5 1249.9L2527 1270.9M2527 1270.9L2530.6 1282.4M2530.6 1282.4L2533 1290" stroke="#38e800" stroke-width="2.5" stroke-dasharray="2.5 3"/><path d="M2141.6 1078L2167.2 1078M2167.2 1078L2198.9 1078M2198.9 1078L2206.8 1078" stroke="#00d8c0" stroke-width="2" stroke-dasharray="2 10"/><path d="M2135.4 1220.8L2166.8 1220.8M2166.8 1220.8L2176.9 1220.8M2176.9 1220.8L2187.5 1220.8M2187.5 1220.8L2191.3 1220.8" stroke="#38e800" stroke-width="2" stroke-dasharray="2 10"/><path d="M2045.9 1132.2h2M2053.6 1106.6h2M2047.4 1124.9h2M2056.1 1144.1h2M2091.7 1148.6h2M2076.5 1115.2h2M2065 1113.7h2M2064.9 1109.7h2M2061.2 1176.4h2M2026.9 1121.6h2M2082.7 1160.8h2M2070.7 1141.1h2M2053.4 1145.8h2M2046.4 1128.5h2M2068.7 1167.9h2M2065.7 1130.5h2M2033.2 1121.1h2M2037.7 1147.1h2M2039.6 1155.6h2M2068.1 1146.3h2M2045.6 1133.9h2M2030.7 1168.2h2M2063.6 1117.3h2M2051.6 1119.7h2M2043.5 1178.7h2M2032.7 1161.1h2M2076.8 1129.8h2M2083.6 1177.2h2M2152 884h2M2814.5 505.8h2M2303.8 1187.6h2M2532.3 1072.1h2M2675.3 1239.8h2M2538.1 693.2h2M2970.3 1019.2h2M2954.3 640.2h2M2850.9 1028.3h2M3169.4 651h2M2680.7 929.2h2M3033.9 716.2h2M3155.1 782.5h2M3240.8 542.8h2M2420.1 1236h2M2495.4 1090.5h2M2261.4 673.2h2M2450.7 1207.6h2M2686.5 687.6h2M3091.7 683.3h2M3162.7 678.7h2M2729.5 998.3h2M2412.4 998.9h2M2212 765.5h2M2730.3 993.2h2M2101.2 599.2h2M2931.7 769.6h2M2646.2 524.3h2M2378.3 669.3h2M3170.2 1064h2M2890.3 810.9h2M3222.6 663.7h2M3042.4 1072.6h2M2513.1 879.5h2M2804 992.4h2M2425.3 1129.7h2M2399.8 570.9h2M2646.5 1251h2M3356.8 733.2h2M2664.6 1103.8h2M3111.8 695.6h2M2838.2 964.3h2" stroke="#ff9400" stroke-width="2"/><path d="M2809.1 762.6L2788.7 787.8M2788.7 787.8L2790.2 804.3M2790.2 804.3L2790.3 805.1" stroke="#ffbc00" stroke-width="2" stroke-dasharray="2 3"/><path d="M3081.1 734.3L3092.5 743.1M3092.5 743.1L3118.4 762.9M3118.4 762.9L3134.6 775.2M3134.6 775.2L3147.2 784.7M3162.9 765.8L3189 786.3M3206.9 800.4L3205 815.9M3205 815.9L3203.8 825.5M3153.5 790.9L3176.7 810.5M3176.7 810.5L3191.4 822.9M3191.4 822.9L3210.8 839.2M3210.8 839.2L3213.2 841.3M3213.2 841.3L3241.4 860.7M3241.4 860.7L3274.1 883.3M3274.1 883.3L3284.4 890.3M3284.4 890.3L3304.4 904.2M3304.4 904.2L3307 914.6M3307 914.6L3307.5 916.7M3147.2 806.7L3153.5 825.5M3153.5 825.5L3167.7 835M3167.7 835L3181.8 844.4M3181.8 844.4L3192 852.8M3192 852.8L3200.3 859.6M3200.3 859.6L3213.3 870.4M3213.3 870.4L3228.9 883.2M3228.9 883.2L3235.2 888.4M3235.2 888.4L3244.3 899M3244.3 899L3259.3 916.5M3259.3 916.5L3280 940.7M3280 940.7L3289.1 951.3M3289.1 951.3L3291.8 954.5M3291.8 954.5L3307.5 982.8" stroke="#38e800" stroke-width="2.5" stroke-dasharray="2.5 5"/><path d="M3109.4 724.9L3121.3 733.8M3121.3 733.8L3142.2 749.4M3142.2 749.4L3153.5 757.9" stroke="#38e800" stroke-width="2" stroke-dasharray="2 5"/><path d="M3189 786.3L3206.9 800.4" stroke="#f4e400" stroke-width="2.5" stroke-dasharray="2.5 5"/><path d="M3184.9 847.5L3215.5 871.2M3215.5 871.2L3227.6 880.5M3227.6 880.5L3249.5 897.5M3249.5 897.5L3254.1 901M3254.1 901L3273.3 916.1M3273.3 916.1L3292.9 931.4M3292.9 931.4L3318.7 951.6M3318.7 951.6L3326.4 957.6" stroke="#38e800" stroke-width="2" stroke-dasharray="2 6"/><path d="M3081.1 696.6L3095.3 718.6" stroke="#bcf000" stroke-width="2" stroke-dasharray="2 3"/><path d="M3172.3 640L3202.3 665.7M3202.3 665.7L3216.4 677.7" stroke="#f4e400" stroke-width="2" stroke-dasharray="2 4"/><path d="M2807 1080L2841.1 1074.8M2841.1 1074.8L2854 1072.9M2938.3 1060.1L2959.7 1056.9M2984.7 1053.1L3003.5 1050.2M3003.5 1050.2L3005 1050M3005 1050L3021.9 1046.4M3085.1 1033L3122.5 1025M3148.5 1019.5L3169.9 1015M3198 1009L3235.4 1005.6M3235.4 1005.6L3271.8 1002.2M3307.8 998.9L3337.8 996.2M2814 1062L2836 1057.1M2869 1049.8L2887.4 1045.8M2899.9 1043L2915.7 1039.5M2943.5 1033.4L2972.2 1027.1M2972.2 1027.1L2977 1026M2977 1026L3008 1018.7M3008 1018.7L3032.3 1013.1M3115.7 993.6L3131.6 990" stroke="#ffbc00" stroke-width="2.5" stroke-dasharray="2.5 18"/><path d="M2854 1072.9L2880.6 1068.8M2880.6 1068.8L2903.3 1065.4M2903.3 1065.4L2938.3 1060.1M2959.7 1056.9L2969.8 1055.3M2969.8 1055.3L2984.7 1053.1M3021.9 1046.4L3055.3 1039.3M3055.3 1039.3L3085.1 1033M3122.5 1025L3148.5 1019.5M3169.9 1015L3198 1009M3271.8 1002.2L3284.9 1001M3284.9 1001L3307.8 998.9M3337.8 996.2L3340 996M2836 1057.1L2869 1049.8M2887.4 1045.8L2899.9 1043M2915.7 1039.5L2930.1 1036.4M2930.1 1036.4L2943.5 1033.4M3032.3 1013.1L3047.8 1009.5M3047.8 1009.5L3073.4 1003.5M3073.4 1003.5L3084 1001M3084 1001L3115.7 993.6M3131.6 990L3149.4 985.8M3149.4 985.8L3168 981.5M3168 981.5L3202.3 973.6M3202.3 973.6L3225.8 968.1M3225.8 968.1L3235 966" stroke="#ff9400" stroke-width="2.5" stroke-dasharray="2.5 18"/><path d="M2874 1167L2895.8 1136.3M2896 1136L2918.4 1120M2927.7 1113.2L2949 1098M2949 1098L2959.6 1087.4M2959.6 1087.4L2971.3 1075.7M3141 1080L3163.1 1061.1M3163.1 1061.1L3187.5 1040.2M3187.5 1040.2L3196.5 1032.4M3196.5 1032.4L3197 1032M3197 1032L3216 1022" stroke="#ff9400" stroke-width="2.5" stroke-dasharray="2.5 12"/><path d="M2895.8 1136.3L2896 1136M2918.4 1120L2927.7 1113.2M2971.3 1075.7L2993 1054" stroke="#f4e400" stroke-width="2.5" stroke-dasharray="2.5 12"/><path d="M3153 1120L3158.5 1111.5M3158.5 1111.5L3168.6 1096M3168.6 1096L3178.7 1080.4M3178.7 1080.4L3187.7 1066.4M3187.7 1066.4L3188 1066" stroke="#ffbc00" stroke-width="2.5" stroke-dasharray="2.5 12"/><path d="M3373.5 1082.9h2.5M3180.7 1028.5h2.5M3280.3 1051.7h2.5M3142.5 1103.7h2.5M3232.4 1120h2.5M3182.2 1054.3h2.5M3211.9 1048.2h2.5M3224.6 1124.9h2.5M3302.1 1076.9h2.5" stroke="#ffbc00" stroke-width="2.5"/><path d="M3355.1 1095.4h2.5M3297.7 1108.6h2.5" stroke="#ff2000" stroke-width="2.5"/><path d="M3187.1 1078.4h2.5M3345.6 1104.1h2.5M3269.4 1127.8h2.5M3283.2 1092.5h2.5M3377.6 1099.9h2.5M3257.8 1043.1h2.5M3223.8 1108.9h2.5M3343.2 1062.4h2.5M3352.8 1127.8h2.5M3173.8 1035h2.5M3352.3 1089.6h2.5M3247.6 1064h2.5M3239.5 1070.2h2.5M3177.6 1056.2h2.5M3197.3 1092.9h2.5M3150.7 1029.9h2.5M3375.9 1114.5h2.5M3230 1080.8h2.5M3195.2 1027.3h2.5M2622.2 1134.8h2.5M2603 1106.6h2.5M2645.4 1154.5h2.5M2659.1 1118.1h2.5M2646.8 1077.6h2.5M2669.3 1141.6h2.5M2659.4 1085.6h2.5M2631 1104.9h2.5M2663.2 1151h2.5M2611.9 1171.9h2.5M2615.4 1088.4h2.5M2642.1 1118.8h2.5M2671.6 1079.6h2.5M2668 1146.4h2.5M2623.8 1090.2h2.5M2652.9 1078.1h2.5M2621.9 1083.3h2.5M2626.2 1174.3h2.5" stroke="#ff9400" stroke-width="2.5"/><path d="M2367.2 335.7L2381.6 332.5M2381.6 332.5L2401.1 328.1M2401.1 328.1L2419.1 324.2M2450.6 334.6L2472.9 328.7M2472.9 328.7L2484.2 325.7M2484.2 325.7L2520.5 316.1M2520.5 316.1L2522.7 315.5M2522.7 315.5L2544 309.6M2544 309.6L2565.5 303.6M2565.5 303.6L2582 299.1M2582 299.1L2597.3 294.8M2635.6 284.2L2661.4 277M2661.4 277L2671.3 274.2M2671.3 274.2L2678.1 272.4M2678.1 272.4L2689.8 281.1M2689.8 281.1L2701.1 289.6" stroke="#ffbc00" stroke-width="1.6" stroke-dasharray="1.6 3.5"/><path d="M2419.1 324.2L2424.8 341.4M2424.8 341.4L2450.6 334.6M2597.3 294.8L2635.6 284.2" stroke="#ff9400" stroke-width="1.6" stroke-dasharray="1.6 3.5"/><path d="M2430.6 338.6L2446 335.8M2446 335.8L2468.6 331.8M2468.6 331.8L2506.4 325M2506.4 325L2541.9 318.7M2541.9 318.7L2567.9 314M2567.9 314L2577.9 312.3M2577.9 312.3L2611.1 306.3M2611.1 306.3L2624.5 303.9M2624.5 303.9L2636.6 301.8M2636.6 301.8L2665.4 296.6M2665.4 296.6L2672.4 295.4M2672.4 295.4L2685.5 307.4M2685.5 307.4L2693.1 314.4M2693.1 314.4L2706.9 327" stroke="#f4e400" stroke-width="1.6" stroke-dasharray="1.6 4"/><path d="M2436.3 306.9L2459 302.8M2459 302.8L2489.1 297.3M2489.1 297.3L2499.6 295.4" stroke="#ff9400" stroke-width="1.6" stroke-dasharray="1.6 4"/><path d="M2706.9 309.8L2727.5 306.9M2727.5 306.9L2752.5 303.5M2752.5 303.5L2789 298.5M2789 298.5L2813.7 295M2813.7 295L2825.4 293.4M2825.4 293.4L2841.2 291.3M2841.2 291.3L2855.1 289.3M2855.1 289.3L2873.9 286.7" stroke="#ffbc00" stroke-width="1.6" stroke-dasharray="1.6 5"/><path d="M2718.4 283.9L2743 282M2743 282L2767.7 280.1M2767.7 280.1L2786.3 278.6M2786.3 278.6L2805.8 277.1M2805.8 277.1L2834.3 275M2834.3 275L2862.9 272.8M2862.9 272.8L2868.1 272.4M2764.5 309.8L2783.3 306.9M2783.3 306.9L2806.8 303.2M2806.8 303.2L2831.4 299.4M2831.4 299.4L2855 295.8M2855 295.8L2869.9 293.5M2869.9 293.5L2888.2 290.6M2888.2 290.6L2920.7 285.6M2920.7 285.6L2935.7 283.3M2935.7 283.3L2974.8 277.2M2974.8 277.2L2993.6 274.3M2993.6 274.3L3006.3 272.4" stroke="#ff9400" stroke-width="1.6" stroke-dasharray="1.6 6"/><path d="M2891.1 289.6L2917.4 284.2M2917.4 284.2L2942.8 278.9M2953.2 276.7L2991.4 268.7M3006.4 265.6L3029.3 260.8M3029.3 260.8L3051.5 256.4M3113 244.1L3115.7 243.6M3115.7 243.6L3121.4 266.6" stroke="#ff9400" stroke-width="1.6" stroke-dasharray="1.6 5"/><path d="M2942.8 278.9L2953.2 276.7M2991.4 268.7L3006.4 265.6M3051.5 256.4L3075.2 251.7M3075.2 251.7L3113 244.1M3012 272.4L3044.8 286M3044.8 286L3068.2 295.8M3068.2 295.8L3081.1 301.1M3081.1 301.1L3098.6 308.9M3098.6 308.9L3126.3 321.2M3126.3 321.2L3132.9 324.2M3126.7 287.6L3127.2 289.6" stroke="#f4e400" stroke-width="1.6" stroke-dasharray="1.6 5"/><path d="M3063.8 232.1L3078.4 235.3M3078.4 235.3L3099.9 240.1M3099.9 240.1L3115.7 243.6M3115.7 243.6L3119.2 257.6M3119.2 257.6L3126.7 287.6" stroke="#38e800" stroke-width="1.6" stroke-dasharray="1.6 5"/><path d="M2948.7 203.3L2975 219.1M2975 219.1L2977.5 220.5M3029.3 309.8L3045.4 317.4M3045.4 317.4L3079.3 333.4M3079.3 333.4L3114.1 349.8M3114.1 349.8L3132.9 358.7M3132.9 358.7L3146.3 369.1M3146.3 369.1L3173.8 390.5M3173.8 390.5L3188 401.6M3188 401.6L3198.6 409.8M3198.6 409.8L3226.9 431.8M3226.9 431.8L3236.6 439.3M3075.4 358.7L3096.3 370.5M3096.3 370.5L3126.3 387.4M3126.3 387.4L3144.3 397.5M3144.3 397.5L3172.9 413.6M3172.9 413.6L3202.3 430.1M3202.3 430.1L3233.5 447.7M3233.5 447.7L3257.7 461.3M3257.7 461.3L3259.6 462.3M3161.7 367.4L3186.4 379.7M3186.4 379.7L3208.9 390.9M3225 399L3232.1 423.9M3232.1 423.9L3236.6 439.3M3213.5 473.9L3230.2 483.4M3230.2 483.4L3253.8 496.9M3294.1 462.3L3317.2 468.1" stroke="#38e800" stroke-width="1.6" stroke-dasharray="1.6 4"/><path d="M2597.5 226.3L2609 240.7" stroke="#38e800" stroke-width="1.6" stroke-dasharray="1.6 3"/><path d="M2174.4 376L2180.2 388.5M2180.2 388.5L2190.7 410.9M2190.7 410.9L2194.5 419.2M2194.5 419.2L2205 417.1M2205 417.1L2241 409.9M2241 409.9L2264.3 405.2M2264.3 405.2L2266.5 404.8" stroke="#bcf000" stroke-width="1.6" stroke-dasharray="1.6 3"/><path d="M2191.6 433.6L2230.6 424.9M2230.6 424.9L2251.3 420.3M2251.3 420.3L2269.4 416.3M3167.5 606.3L3178.6 623M3178.6 623L3193.8 645.7M3193.8 645.7L3213.5 675.3M2833.6 514.2L2850.1 516.2M2850.1 516.2L2856.6 517" stroke="#f4e400" stroke-width="1.6" stroke-dasharray="1.6 3"/><path d="M3132.9 353L3161.7 367.4M3208.9 390.9L3225 399" stroke="#ffbc00" stroke-width="1.6" stroke-dasharray="1.6 4"/><path d="M2482.4 450.8L2507.2 480.9M2507.2 480.9L2521.3 498.1M2521.3 498.1L2522.7 499.8M2528.4 453.7L2544.4 488.3M2544.4 488.3L2545.7 491.1M2545.7 491.1L2557.2 522.8" stroke="#ff2000" stroke-width="1.6" stroke-dasharray="1.6 2"/><path d="M2620.5 476.7L2637.8 479.6M2637.8 479.6L2642.2 505.9M2642.2 505.9L2643.6 514.2M2931.4 404.8L2952 415.1M2952 415.1L2960.2 419.2M2626.3 617.8L2636.2 626.2M2636.2 626.2L2657.1 643.9M2657.1 643.9L2669.2 654M2669.2 654L2691.9 673.3M2691.9 673.3L2701.1 681M2701.1 681L2701.1 681.1M2701.1 681.1L2706.9 704.1M2706.9 704.1L2730.3 736.2M2730.3 736.2L2743 753.8M2743 753.8L2753 767.5M2695.4 623.5L2695.4 659.4M2695.4 659.4L2695.4 695M2695.4 695L2695.4 704.1M2695.4 704.1L2689.8 732.2M2689.8 732.2L2689.6 732.9M2689.6 732.9L2711.8 749.6M2711.8 749.6L2712.7 750.2M2776 640.8L2773.4 655.2M2773.4 655.2L2769.4 676.8M2769.4 676.8L2765.9 696.5M2765.9 696.5L2764.5 704.1M2764.5 704.1L2761.7 737.8M2761.7 737.8L2759.8 759.7M2759.8 759.7L2758.7 773.2" stroke="#ff2000" stroke-width="1.6" stroke-dasharray="1.6 3"/><path d="M2971.7 422L2999.3 431.2M2999.3 431.2L3016.3 436.9M3016.3 436.9L3023.5 439.3M3023.5 439.3L3009.9 471.1M3009.9 471.1L3006.3 479.6" stroke="#ff5a00" stroke-width="1.6" stroke-dasharray="1.6 3"/><path d="M2375.9 456.6L2384 468.2M2384 468.2L2404.6 497.7M2404.6 497.7L2416.2 514.2M2804.8 591.9L2827.8 614.9M2931.4 597.6L2953.9 613.4M2953.9 613.4L2960.2 617.8M3086.9 548.7L3103.8 565.7M3103.8 565.7L3104.1 566" stroke="#f4e400" stroke-width="1.6" stroke-dasharray="1.6 2"/><path d="M2436.3 566L2452 564.3M2452 564.3L2463.8 563.1M2463.8 563.1L2499.4 559.3M2499.4 559.3L2533 555.8M2533 555.8L2545.7 554.5M2545.7 554.5L2577.6 553.7M2577.6 553.7L2596.5 553.2M2596.5 553.2L2631.5 552.3M2631.5 552.3L2662.1 551.5M2662.1 551.5L2689.6 550.9M2689.6 550.9L2705.6 550.5M2705.6 550.5L2732.2 549.8M2732.2 549.8L2751 549.3M2751 549.3L2776 548.7M2776 548.7L2799.5 547.5M2799.5 547.5L2821.1 546.4M2821.1 546.4L2832.4 545.9M2832.4 545.9L2851.5 544.9M2851.5 544.9L2889.8 543M2889.8 543L2891.1 542.9" stroke="#ff2000" stroke-width="1.6" stroke-dasharray="1.6 8"/><path d="M2563 545.8L2589.4 573.5M2589.4 573.5L2609.7 594.8M2609.7 594.8L2620.5 606.3M2620.5 606.3L2633.8 632.7M2633.8 632.7L2648.2 661.5M2648.2 661.5L2649.3 663.8" stroke="#ff2000" stroke-width="1.6" stroke-dasharray="1.6 4"/><path d="M2891.1 551.6L2917 574.9M2917 574.9L2919.9 577.5" stroke="#bcf000" stroke-width="1.6" stroke-dasharray="1.6 2"/><path d="M3132.9 542.9L3154.4 555.5M3154.4 555.5L3176.6 568.4M3176.6 568.4L3202 583.2" stroke="#ff9400" stroke-width="1.6" stroke-dasharray="1.6 3"/><path d="M3179 612L3211.8 633M3211.8 633L3232.9 646.5M3232.9 646.5L3243.9 653.6M3243.9 653.6L3268.9 669.6M3268.9 669.6L3278.9 676M3278.9 676L3300.2 689.6M3300.2 689.6L3315.3 699.3M3315.3 699.3L3322.9 704.1M3322.9 704.1L3312.7 719.5M3312.7 719.5L3311.4 721.4" stroke="#ffbc00" stroke-width="1.6" stroke-dasharray="1.6 3"/><path d="M2488.1 632.2L2509.2 645.4M2509.2 645.4L2511.2 646.6M2511.2 646.6L2515.5 681.4M2515.5 681.4L2516.9 692.6M2516.9 692.6L2533 706M2533 706L2534.2 707" stroke="#ffbc00" stroke-width="1.6" stroke-dasharray="1.6 2"/><path d="M1256 310L1260 330M1260 330L1270 345M1270 345L1276 359" stroke="#ff5a00" stroke-width="1.6" stroke-dasharray="1.6 6"/><path d="M2629.9 1243.6h2M2665.9 640.9h2M3204 1140.7h2M2852.1 1060.2h2M3031.8 863.8h2M3247.2 605.5h2M2366.3 621.6h2M3327.6 1061.1h2M2632.3 1202.5h2M3031.4 822.3h2M2338.6 1159.8h2M3037.8 571.2h2M2302.6 934.3h2M3018.3 1102.5h2M2496.9 1030.4h2M3215.3 831.7h2M3262 982.4h2M3005.1 846.1h2M3351.8 1206.3h2M2473.2 824.1h2M2637.4 600.2h2" stroke="#ffbc00" stroke-width="2"/><path d="M2539.9 307h1.6M2489.2 233.3h1.6M2247.3 278.8h1.6M2792.3 438.7h1.6M2322.9 357.4h1.6M2375.4 480.3h1.6M2850.5 450.8h1.6M2917.6 215.3h1.6M2811 420.6h1.6M2454.5 356.5h1.6M2760.8 444.9h1.6M2110.4 499.3h1.6M3398.7 414.2h1.6" stroke="#ffbc00" stroke-width="1.6"/><path d="M2809.9 413.1h1.6M2723 449.1h1.6M3171.8 362.6h1.6M3303.3 296.3h1.6M2227.1 407.3h1.6M3321.6 411h1.6M2586.9 503.6h1.6M2780.3 372.8h1.6M2406.8 219.3h1.6M2328.8 504.1h1.6M2999.2 324.2h1.6M2894 284.5h1.6M2368.2 428.7h1.6M2521.6 229.6h1.6" stroke="#ff9400" stroke-width="1.6"/><path d="M2814.6 465.7h1.6M3310.4 227.4h1.6M2332.7 303h1.6M2879.2 455.4h1.6M2561.9 364.1h1.6M2131.9 548.4h1.6M2607.3 433.4h1.6M2835.4 444.9h1.6M3050.7 239h1.6M3147.2 279h1.6M3022.8 414.9h1.6M2761.2 334.9h1.6M2952.1 474.1h1.6M3152.6 323.1h1.6M2907.3 239.6h1.6M2574 270.8h1.6M3090.8 377.1h1.6M2654.5 276.3h1.6M2997.1 284.5h1.6M2442.4 329.4h1.6M2481.5 482.2h1.6M3372.7 252h1.6M3211 257.4h1.6M2476.6 483.2h1.6M3012.5 347.7h1.6" stroke="#ff2000" stroke-width="1.6"/><path d="M2299.8 513.4h1.6M3385.5 271.1h1.6M3310.4 325.8h1.6M2858.6 389.9h1.6M2496.3 323.8h1.6M2428.5 452.7h1.6M2144.1 483.7h1.6M2323.7 517.5h1.6" stroke="#38e800" stroke-width="1.6"/></g><defs><linearGradient id="ax_r" gradientUnits="userSpaceOnUse" x1="1600" y1="1124" x2="1602.6" y2="1138.6"><stop offset="0" stop-color="#5a0000"/><stop offset="0.22" stop-color="#d00000"/><stop offset="0.55" stop-color="#ff0a0a"/><stop offset="0.85" stop-color="#c00000"/><stop offset="1" stop-color="#5a0000"/></linearGradient><linearGradient id="ax_b" gradientUnits="userSpaceOnUse" x1="1501" y1="1095" x2="1518" y2="1092"><stop offset="0" stop-color="#0000a8"/><stop offset="0.35" stop-color="#0000e0"/><stop offset="0.7" stop-color="#0000b8"/><stop offset="1" stop-color="#000050"/></linearGradient></defs><path d="M1510.5 1046 L1515 1046 L1528.5 1117 L1524 1117 Z" fill="#005400" stroke="#002000" stroke-width="0.8"/><path d="M1524.8 1140.9 L1678.2 1113 L1679.5 1126.4 L1525.5 1155.5 Z" fill="url(#ax_r)"/><path d="M1491.5 1031.8 L1508.5 1031.8 L1529.7 1143.3 Q1530 1152 1522.4 1153.6 Q1516 1153 1515.8 1149.4 Z" fill="url(#ax_b)"/><ellipse cx="1499.6" cy="1030" rx="8.6" ry="4.6" fill="#00008c"/></svg><div style="left:3410px;top:186px;width:16px;height:1522px;background:#dcdcdc;border-left:1px solid #c4c4c4;border-right:1px solid #eaeaea;box-sizing:border-box;border-radius:3px"></div><svg style="position:absolute;left:3410px;top:935px" width="16" height="25"><path d="M12 5 v14 l-8 -7 z" fill="#4f4f4f"/></svg><div style="left:2px;top:1708px;width:3424px;height:46px;background:#efefef"></div><div style="left:4px;top:1711px;width:97px;height:41px;background:linear-gradient(#fdfdfd,#ececec);border:1px solid #b4b4b4;border-radius:4px;box-sizing:border-box"></div><span style="left:1602.98px;top:24.01px;font-size:30.5px;font-weight:bold;color:#f4f4f4;transform:scaleX(1.0079)">rviz.rviz* - RViz</span><span style="left:17.06px;top:80.01px;font-size:30.5px;font-weight:normal;color:#000;transform:scaleX(0.9679)">File</span><span style="left:82.10px;top:80.01px;font-size:30.5px;font-weight:normal;color:#000;transform:scaleX(0.9505)">Panels</span><span style="left:189.49px;top:80.01px;font-size:30.5px;font-weight:normal;color:#000;transform:scaleX(1.0039)">Help</span><span style="left:47.90px;top:140.13px;font-size:24.5px;font-weight:normal;color:#000;transform:scaleX(1.0513)">Interact</span><span style="left:208.49px;top:140.13px;font-size:24.5px;font-weight:normal;color:#000;transform:scaleX(0.9545)">Move Camera</span><span style="left:431.22px;top:140.13px;font-size:24.5px;font-weight:normal;color:#000;transform:scaleX(0.9764)">Select</span><span style="left:573.14px;top:140.13px;font-size:24.5px;font-weight:normal;color:#000;transform:scaleX(0.9306)">Focus Camera</span><span style="left:797.71px;top:140.13px;font-size:24.5px;font-weight:normal;color:#000;transform:scaleX(0.9957)">Measure</span><span style="left:967.04px;top:140.13px;font-size:24.5px;font-weight:normal;color:#000;transform:scaleX(0.9616)">2D Pose Estimate</span><span style="left:1231.05px;top:140.13px;font-size:24.5px;font-weight:normal;color:#000;transform:scaleX(0.9506)">2D Nav Goal</span><span style="left:1437.80px;top:140.13px;font-size:24.5px;font-weight:normal;color:#000">Publish Point</span><span style="left:34.14px;top:190.01px;font-size:30.5px;font-weight:normal;color:#000;transform:scaleX(0.9292)">Displays</span><span style="left:68.02px;top:228.01px;font-size:30.5px;font-weight:normal;color:#000;transform:scaleX(0.9772)">Global Opti…</span><span style="left:85.65px;top:264.01px;font-size:30.5px;font-weight:normal;color:#000;transform:scaleX(0.9274)">Fixed Frame</span><span style="left:255.50px;top:264.01px;font-size:30.5px;font-weight:normal;color:#000">rslidar</span><span style="left:85.58px;top:300.01px;font-size:30.5px;font-weight:normal;color:#000;transform:scaleX(0.9607)">Backgrou…</span><span style="left:293.70px;top:300.01px;font-size:30.5px;font-weight:normal;color:#000;transform:scaleX(0.9183)">48; 48; 48</span><span style="left:85.64px;top:336.01px;font-size:30.5px;font-weight:normal;color:#000;transform:scaleX(0.9275)">Frame Rate</span><span style="left:256.56px;top:336.01px;font-size:30.5px;font-weight:normal;color:#000;transform:scaleX(0.9386)">30</span><span style="left:85.51px;top:372.01px;font-size:30.5px;font-weight:normal;color:#000;transform:scaleX(0.9971)">Default Li…</span><span style="left:68.03px;top:408.01px;font-size:30.5px;font-weight:normal;color:#c8880e;transform:scaleX(0.9667)">Global Stat…</span><span style="left:67.13px;top:444.01px;font-size:30.5px;font-weight:bold;color:#2f7bc8;transform:scaleX(0.9363)">Point Cloud</span><span style="left:107.66px;top:480.01px;font-size:30.5px;font-weight:normal;color:#000;transform:scaleX(0.9392)">Status: Ok</span><span style="left:87.50px;top:516.01px;font-size:30.5px;font-weight:normal;color:#000;transform:scaleX(0.9626)">Topic</span><span style="left:257.50px;top:516.01px;font-size:30.5px;font-weight:normal;color:#000;transform:scaleX(1.0020)">/rslidar_points</span><span style="left:85.52px;top:552.01px;font-size:30.5px;font-weight:normal;color:#000;transform:scaleX(0.9921)">Unreliable</span><span style="left:86.58px;top:588.01px;font-size:30.5px;font-weight:normal;color:#000;transform:scaleX(0.9192)">Queue Size</span><span style="left:255.58px;top:588.01px;font-size:30.5px;font-weight:normal;color:#000;transform:scaleX(0.9625)">10</span><span style="left:86.54px;top:624.01px;font-size:30.5px;font-weight:normal;color:#000;transform:scaleX(0.9611)">Selectable</span><span style="left:86.54px;top:660.01px;font-size:30.5px;font-weight:normal;color:#000;transform:scaleX(0.9644)">Style</span><span style="left:256.58px;top:660.01px;font-size:30.5px;font-weight:normal;color:#000;transform:scaleX(0.9168)">Squares</span><span style="left:86.61px;top:696.01px;font-size:30.5px;font-weight:normal;color:#fff;transform:scaleX(0.8925)">Size (m)</span><span style="left:256.58px;top:696.01px;font-size:30.5px;font-weight:normal;color:#fff;transform:scaleX(0.9164)">0.01</span><span style="left:87.50px;top:732.01px;font-size:30.5px;font-weight:normal;color:#000;transform:scaleX(0.9456)">Alpha</span><span style="left:255.93px;top:732.01px;font-size:30.5px;font-weight:normal;color:#000;transform:scaleX(0.7857)">1</span><span style="left:85.62px;top:768.01px;font-size:30.5px;font-weight:normal;color:#000;transform:scaleX(0.9394)">Decay Time</span><span style="left:256.43px;top:768.01px;font-size:30.5px;font-weight:normal;color:#000;transform:scaleX(1.0667)">0</span><span style="left:85.59px;top:804.01px;font-size:30.5px;font-weight:normal;color:#000;transform:scaleX(0.9570)">Position T…</span><span style="left:257.50px;top:804.01px;font-size:30.5px;font-weight:normal;color:#000;transform:scaleX(0.8844)">XYZ</span><span style="left:86.54px;top:840.01px;font-size:30.5px;font-weight:normal;color:#000;transform:scaleX(0.9567)">Color Tra…</span><span style="left:255.48px;top:840.01px;font-size:30.5px;font-weight:normal;color:#000;transform:scaleX(1.0095)">Intensity</span><span style="left:86.55px;top:876.01px;font-size:30.5px;font-weight:normal;color:#000;transform:scaleX(0.9464)">Channel N…</span><span style="left:255.46px;top:876.01px;font-size:30.5px;font-weight:normal;color:#000;transform:scaleX(1.0186)">intensity</span><span style="left:85.60px;top:912.01px;font-size:30.5px;font-weight:normal;color:#000;transform:scaleX(0.9520)">Use rainbow</span><span style="left:85.57px;top:948.01px;font-size:30.5px;font-weight:normal;color:#000;transform:scaleX(0.9658)">Invert Rai…</span><span style="left:85.55px;top:984.01px;font-size:30.5px;font-weight:normal;color:#000;transform:scaleX(0.9763)">Min Color</span><span style="left:292.79px;top:984.01px;font-size:30.5px;font-weight:normal;color:#000;transform:scaleX(0.9056)">0; 0; 0</span><span style="left:85.58px;top:1020.01px;font-size:30.5px;font-weight:normal;color:#000;transform:scaleX(0.9604)">Max Color</span><span style="left:292.77px;top:1020.01px;font-size:30.5px;font-weight:normal;color:#000;transform:scaleX(0.9318)">255; 255; 255</span><span style="left:87.50px;top:1056.01px;font-size:30.5px;font-weight:normal;color:#000;transform:scaleX(0.9819)">Autocom…</span><span style="left:85.50px;top:1092.01px;font-size:30.5px;font-weight:normal;color:#000">Min Inten…</span><span style="left:255.93px;top:1092.01px;font-size:30.5px;font-weight:normal;color:#000;transform:scaleX(0.7857)">1</span><span style="left:85.53px;top:1128.01px;font-size:30.5px;font-weight:normal;color:#000;transform:scaleX(0.9866)">Max Inten…</span><span style="left:255.56px;top:1128.01px;font-size:30.5px;font-weight:normal;color:#000;transform:scaleX(0.9723)">185</span><span style="left:68.07px;top:1164.01px;font-size:30.5px;font-weight:bold;color:#2f7bc8;transform:scaleX(0.9306)">Grid</span><span style="left:69.00px;top:1200.01px;font-size:30.5px;font-weight:bold;color:#2f7bc8;transform:scaleX(0.9187)">Axes</span><span style="left:107.66px;top:1236.01px;font-size:30.5px;font-weight:normal;color:#000;transform:scaleX(0.9392)">Status: Ok</span><span style="left:85.55px;top:1272.01px;font-size:30.5px;font-weight:normal;color:#000;transform:scaleX(0.9768)">Referenc…</span><span style="left:256.57px;top:1272.01px;font-size:30.5px;font-weight:normal;color:#000;transform:scaleX(0.9279)">&lt;Fixed Frame&gt;</span><span style="left:85.48px;top:1308.01px;font-size:30.5px;font-weight:normal;color:#000;transform:scaleX(1.0076)">Length</span><span style="left:255.93px;top:1308.01px;font-size:30.5px;font-weight:normal;color:#000;transform:scaleX(0.7857)">1</span><span style="left:85.66px;top:1344.01px;font-size:30.5px;font-weight:normal;color:#000;transform:scaleX(0.9213)">Radius</span><span style="left:256.62px;top:1344.01px;font-size:30.5px;font-weight:normal;color:#000;transform:scaleX(0.8779)">0.1</span><span style="left:86.55px;top:1380.01px;font-size:30.5px;font-weight:normal;color:#000;transform:scaleX(0.9489)">Show Trail</span><span style="left:87.50px;top:1416.01px;font-size:30.5px;font-weight:normal;color:#000;transform:scaleX(0.9456)">Alpha</span><span style="left:255.93px;top:1416.01px;font-size:30.5px;font-weight:normal;color:#000;transform:scaleX(0.7857)">1</span><span style="left:7.60px;top:1513.01px;font-size:30.5px;font-weight:bold;color:#000;transform:scaleX(0.9103)">Size (m)</span><span style="left:5.66px;top:1546.01px;font-size:30.5px;font-weight:normal;color:#000;transform:scaleX(0.9677)">Point size in meters.</span><span style="left:18.50px;top:1664.01px;font-size:30.5px;font-weight:normal;color:#000;transform:scaleX(0.9655)">Add</span><span style="left:102.02px;top:1664.01px;font-size:30.5px;font-weight:normal;color:#b6b6b6;transform:scaleX(0.9904)">Duplicate</span><span style="left:254.63px;top:1664.01px;font-size:30.5px;font-weight:normal;color:#b6b6b6;transform:scaleX(0.9339)">Remove</span><span style="left:387.14px;top:1664.01px;font-size:30.5px;font-weight:normal;color:#b6b6b6;transform:scaleX(0.9304)">Rename</span><span style="left:14.43px;top:1715.01px;font-size:30.5px;font-weight:normal;color:#000;transform:scaleX(0.9373)">Reset</span><span style="left:106.74px;top:1715.01px;font-size:30.5px;font-weight:bold;color:#000;transform:scaleX(0.9816)">Left-Click:</span><span style="left:257.81px;top:1715.01px;font-size:30.5px;font-weight:normal;color:#000;transform:scaleX(0.9961)">Rotate.</span><span style="left:360.87px;top:1715.01px;font-size:30.5px;font-weight:bold;color:#000;transform:scaleX(0.9659)">Middle-Click:</span><span style="left:548.35px;top:1715.01px;font-size:30.5px;font-weight:normal;color:#000;transform:scaleX(0.9752)">Move X/Y.</span><span style="left:687.57px;top:1715.01px;font-size:30.5px;font-weight:bold;color:#000;transform:scaleX(0.9648)">Right-Click/Mouse Wheel:</span><span style="left:1047.30px;top:1715.01px;font-size:30.5px;font-weight:normal;color:#000">:</span><span style="left:1062.40px;top:1715.01px;font-size:30.5px;font-weight:normal;color:#000;transform:scaleX(0.9564)">Zoom.</span><span style="left:1151.60px;top:1715.01px;font-size:30.5px;font-weight:bold;color:#000;transform:scaleX(0.9644)">Shift</span><span style="left:1217.74px;top:1715.01px;font-size:30.5px;font-weight:normal;color:#000;transform:scaleX(0.9825)">: More options.</span><span style="left:3344.64px;top:1713.01px;font-size:30.5px;font-weight:normal;color:#000;transform:scaleX(0.9580)">31 fps</span></body></html>
